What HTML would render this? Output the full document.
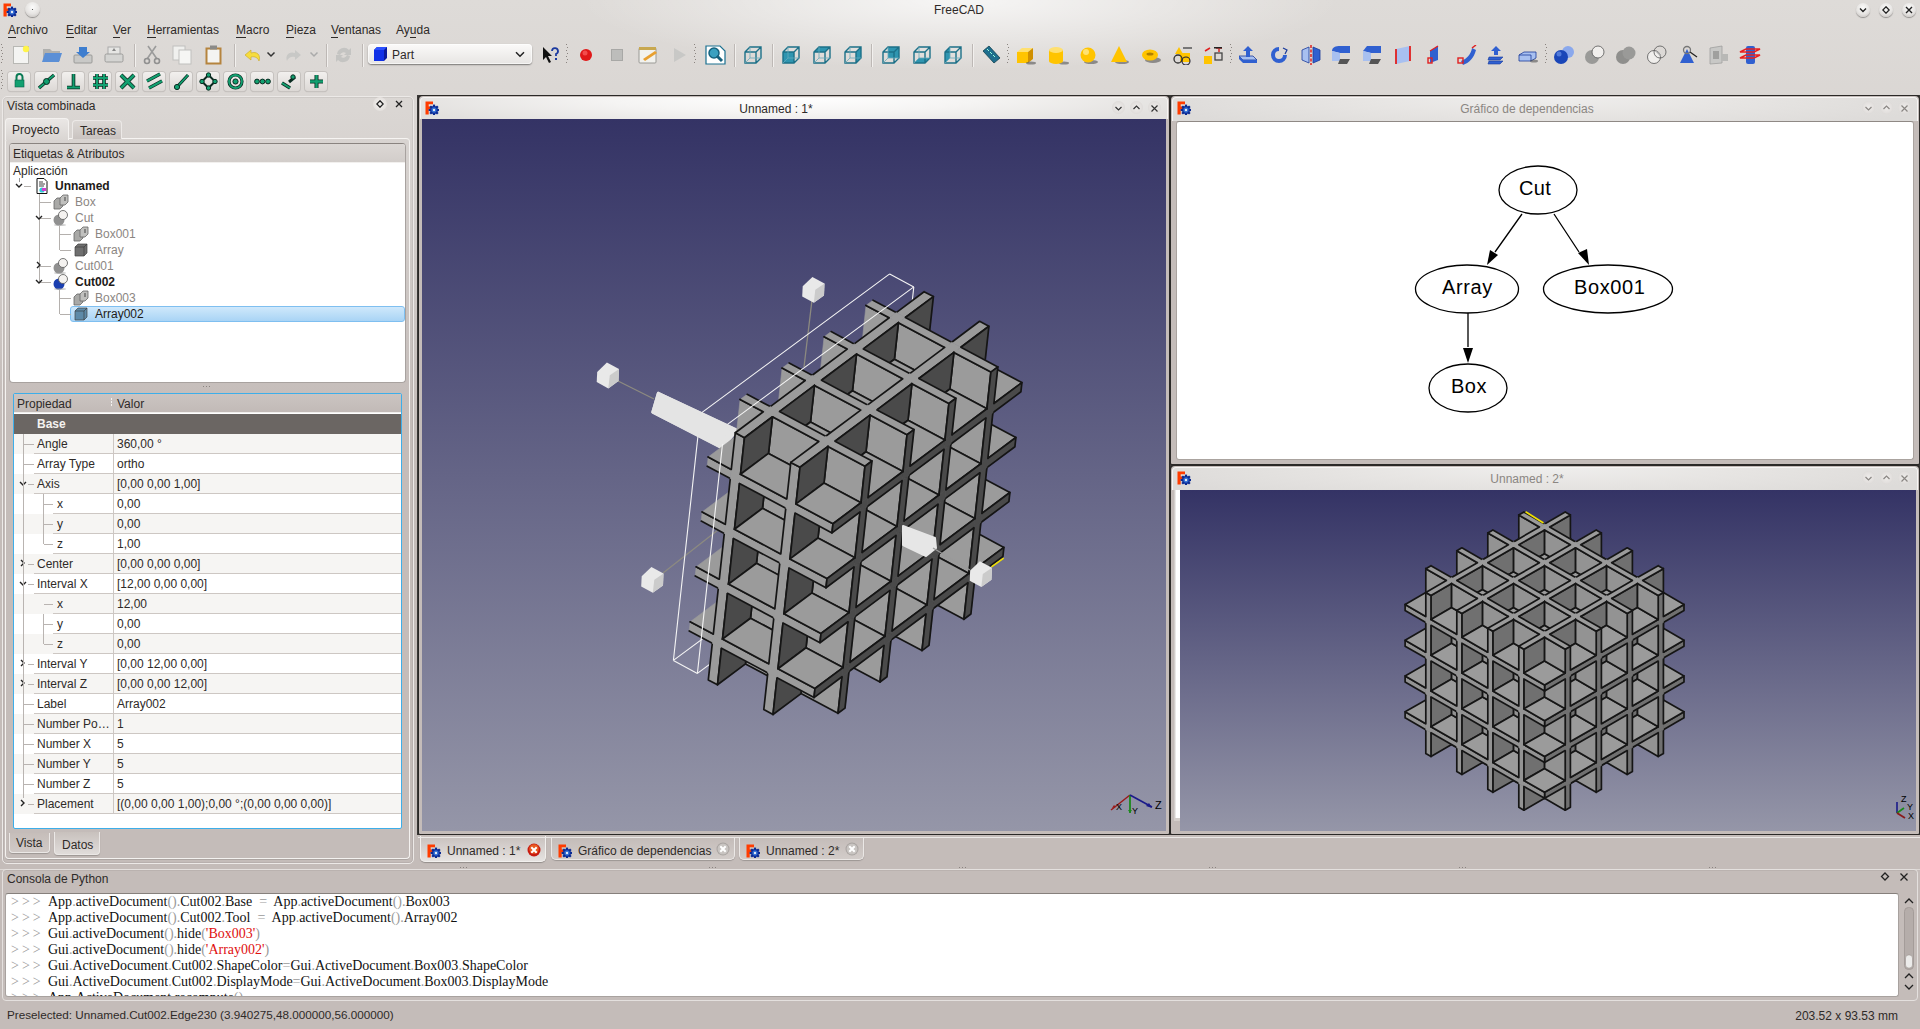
<!DOCTYPE html><html><head><meta charset='utf-8'><style>
*{box-sizing:border-box}
html,body{margin:0;padding:0}
body{width:1920px;height:1029px;overflow:hidden;position:relative;font-family:"Liberation Sans", sans-serif;font-size:12px;color:#2e2a28;
background:radial-gradient(ellipse 380px 70px at 960px 0px,rgba(255,255,255,.75),rgba(255,255,255,0)),linear-gradient(to bottom,#dedbd8 0px,#dad6d3 110px,#c4bcb9 420px,#c4bcb9 1029px);}
.a{position:absolute}
.t{position:absolute;white-space:pre;line-height:14px}
.rb{position:absolute;border-radius:50%;background:radial-gradient(circle at 50% 35%,#fbfbfa 0,#e6e4e2 55%,#bdb9b6 100%);box-shadow:0 1px 1px rgba(0,0,0,.35)}
.frame{position:absolute;border:1px solid #f3f1f0;border-radius:4px;box-shadow:inset 0 1px 0 rgba(0,0,0,.08)}
u{text-decoration:none;border-bottom:1px solid #2e2a28}
</style></head><body>
<svg class='a' style='left:3px;top:3px' width='14' height='14' viewBox='0 0 14 14'><path d='M0.5 0.5h7.5v2.8h-4.3v2.2h3.2v2.6h-3.2v5.4h-3.2z' fill='#ff3c00'/><rect x='7.9' y='3.6' width='2.2' height='2.4' fill='#0a2a92' transform='rotate(0 9 9)'/><rect x='7.9' y='3.6' width='2.2' height='2.4' fill='#0a2a92' transform='rotate(45 9 9)'/><rect x='7.9' y='3.6' width='2.2' height='2.4' fill='#0a2a92' transform='rotate(90 9 9)'/><rect x='7.9' y='3.6' width='2.2' height='2.4' fill='#0a2a92' transform='rotate(135 9 9)'/><rect x='7.9' y='3.6' width='2.2' height='2.4' fill='#0a2a92' transform='rotate(180 9 9)'/><rect x='7.9' y='3.6' width='2.2' height='2.4' fill='#0a2a92' transform='rotate(225 9 9)'/><rect x='7.9' y='3.6' width='2.2' height='2.4' fill='#0a2a92' transform='rotate(270 9 9)'/><rect x='7.9' y='3.6' width='2.2' height='2.4' fill='#0a2a92' transform='rotate(315 9 9)'/><circle cx='9' cy='9' r='3.9' fill='#0b2c98'/><circle cx='9' cy='9' r='2.7' fill='#2f6ad0'/><circle cx='9' cy='9' r='1.2' fill='#e6ecf4'/></svg>
<div class='rb' style='left:25px;top:2px;width:15px;height:15px'></div>
<div class='a' style='left:32px;top:9px;width:1px;height:1px;background:#555'></div>
<div class='t' style='left:934px;top:3px;font-size:12px;color:#2e2a28;font-weight:normal;font-family:"Liberation Sans", sans-serif;'>FreeCAD</div>
<div class='rb' style='left:1856px;top:3px;width:14px;height:14px'></div>
<svg class='a' style='left:1859px;top:7px' width='8' height='6'><path d='M1 1.5l3 3 3-3' fill='none' stroke='#222' stroke-width='1.4'/></svg>
<div class='rb' style='left:1879px;top:3px;width:14px;height:14px'></div>
<svg class='a' style='left:1882px;top:6px' width='8' height='8'><path d='M4 0.8l3.2 3.2-3.2 3.2-3.2-3.2z' fill='none' stroke='#222' stroke-width='1.3'/></svg>
<div class='rb' style='left:1902px;top:3px;width:14px;height:14px'></div>
<svg class='a' style='left:1905px;top:6px' width='8' height='8'><path d='M1 1l6 6M7 1l-6 6' fill='none' stroke='#222' stroke-width='1.4'/></svg>
<div class='t' style='left:8px;top:23px;font-size:12px;color:#2e2a28;font-weight:normal;font-family:"Liberation Sans", sans-serif;'><u>A</u>rchivo</div>
<div class='t' style='left:66px;top:23px;font-size:12px;color:#2e2a28;font-weight:normal;font-family:"Liberation Sans", sans-serif;'><u>E</u>ditar</div>
<div class='t' style='left:113px;top:23px;font-size:12px;color:#2e2a28;font-weight:normal;font-family:"Liberation Sans", sans-serif;'><u>V</u>er</div>
<div class='t' style='left:147px;top:23px;font-size:12px;color:#2e2a28;font-weight:normal;font-family:"Liberation Sans", sans-serif;'><u>H</u>erramientas</div>
<div class='t' style='left:236px;top:23px;font-size:12px;color:#2e2a28;font-weight:normal;font-family:"Liberation Sans", sans-serif;'><u>M</u>acro</div>
<div class='t' style='left:286px;top:23px;font-size:12px;color:#2e2a28;font-weight:normal;font-family:"Liberation Sans", sans-serif;'><u>P</u>ieza</div>
<div class='t' style='left:331px;top:23px;font-size:12px;color:#2e2a28;font-weight:normal;font-family:"Liberation Sans", sans-serif;'><u>V</u>entanas</div>
<div class='t' style='left:396px;top:23px;font-size:12px;color:#2e2a28;font-weight:normal;font-family:"Liberation Sans", sans-serif;'>Ay<u>u</u>da</div>
<svg class='a' style='left:1px;top:44px' width='2' height='23' viewBox='0 0 2 23'><rect x='0' y='0' width='1' height='1' fill='#8a8480'/><rect x='1' y='3' width='1' height='1' fill='#8a8480'/><rect x='0' y='6' width='1' height='1' fill='#8a8480'/><rect x='1' y='9' width='1' height='1' fill='#8a8480'/><rect x='0' y='12' width='1' height='1' fill='#8a8480'/><rect x='1' y='15' width='1' height='1' fill='#8a8480'/><rect x='0' y='18' width='1' height='1' fill='#8a8480'/></svg>
<svg class='a' style='left:12px;top:45px' width='20' height='20' viewBox='0 0 20 20'><rect x='1.5' y='1.5' width='15' height='17' fill='#f4f4f2' stroke='#b8b8b4'/><circle cx='14' cy='4' r='3.2' fill='#fff44a'/></svg>
<svg class='a' style='left:41px;top:45px' width='22' height='20' viewBox='0 0 22 20'><path d='M2 4h7l2 2h8v10H2z' fill='#b0b0ae'/><path d='M4 8h17l-3 9H1z' fill='#5b8fd6'/></svg>
<svg class='a' style='left:73px;top:45px' width='20' height='20' viewBox='0 0 20 20'><rect x='1' y='10' width='18' height='8' rx='1' fill='#c9c9c7' stroke='#9a9a98'/><path d='M6 2h8v5h3l-7 6-7-6h3z' fill='#3e7ecf'/></svg>
<svg class='a' style='left:104px;top:45px' width='20' height='20' viewBox='0 0 20 20'><rect x='4' y='2' width='12' height='8' fill='#e6e6e4' stroke='#aaa'/><rect x='1' y='9' width='18' height='8' rx='1.5' fill='#d4d4d2' stroke='#9c9c9a'/><path d='M10 3l-2 3h4z' fill='#888'/></svg>
<div class='a' style='left:134px;top:44px;width:1px;height:23px;background:#bdb8b5'></div>
<div class='a' style='left:135px;top:44px;width:1px;height:23px;background:#f2f0ee'></div>
<svg class='a' style='left:143px;top:45px' width='18' height='20' viewBox='0 0 18 20'><path d='M5 1l9 13M13 1L4 14' stroke='#9b9b9b' stroke-width='1.6'/><circle cx='4' cy='16' r='2.5' fill='none' stroke='#909090' stroke-width='1.6'/><circle cx='14' cy='16' r='2.5' fill='none' stroke='#909090' stroke-width='1.6'/></svg>
<svg class='a' style='left:172px;top:45px' width='21' height='20' viewBox='0 0 21 20'><rect x='1' y='1' width='12' height='14' fill='#f0f0ee' stroke='#c0c0be'/><rect x='7' y='5' width='12' height='14' fill='#f6f6f4' stroke='#c0c0be'/></svg>
<svg class='a' style='left:204px;top:45px' width='20' height='20' viewBox='0 0 20 20'><rect x='1.5' y='2.5' width='16' height='17' fill='#b5843e' /><rect x='3.5' y='4.5' width='12' height='13' fill='#f4f4f2'/><rect x='6' y='0.5' width='7' height='4' fill='#8a8a88'/></svg>
<div class='a' style='left:234px;top:44px;width:1px;height:23px;background:#bdb8b5'></div>
<div class='a' style='left:235px;top:44px;width:1px;height:23px;background:#f2f0ee'></div>
<svg class='a' style='left:243px;top:45px' width='20' height='20' viewBox='0 0 20 20'><path d='M16 16c2-6-2-10-8-8V5L2 10l6 5v-3c4-1 7 1 8 4z' fill='#f6dc3e' stroke='#c9a820' stroke-width='.6'/></svg>
<svg class='a' style='left:266px;top:51px' width='10' height='8' viewBox='0 0 10 8'><path d='M1.5 1.5l3.5 3.5 3.5-3.5' fill='none' stroke='#333' stroke-width='1.5'/></svg>
<svg class='a' style='left:285px;top:45px' width='18' height='20' viewBox='0 0 18 20'><path d='M2 16c-2-6 2-10 8-8V5l6 5-6 5v-3c-4-1-7 1-8 4z' fill='#c8c8c6'/></svg>
<svg class='a' style='left:309px;top:51px' width='10' height='8' viewBox='0 0 10 8'><path d='M1.5 1.5l3.5 3.5 3.5-3.5' fill='none' stroke='#aaa' stroke-width='1.5'/></svg>
<div class='a' style='left:326px;top:44px;width:1px;height:23px;background:#bdb8b5'></div>
<div class='a' style='left:327px;top:44px;width:1px;height:23px;background:#f2f0ee'></div>
<svg class='a' style='left:334px;top:45px' width='19' height='20' viewBox='0 0 19 20'><path d='M3 9a7 7 0 0 1 12-4l2-2v7h-7l2-2a4 4 0 0 0-6 2z M16 11a7 7 0 0 1-12 4l-2 2v-7h7l-2 2a4 4 0 0 0 6-2z' fill='#c4c4c2'/></svg>
<div class='a' style='left:362px;top:44px;width:1px;height:23px;background:#bdb8b5'></div>
<div class='a' style='left:363px;top:44px;width:1px;height:23px;background:#f2f0ee'></div>
<div class='a' style='left:368px;top:44px;width:164px;height:20px;border-radius:4px;background:linear-gradient(#fbfaf9,#e7e5e3);box-shadow:0 1px 1.5px rgba(0,0,0,.45),inset 0 0 0 1px rgba(255,255,255,.6)'></div>
<svg class='a' style='left:373px;top:46px' width='15' height='16' viewBox='0 0 15 16'><path d='M1 4l3-3h10v11l-3 3H1z' fill='#0a1a9a'/><rect x='1' y='4' width='10' height='11' fill='#1030e6'/><path d='M1 4l3-3h10l-3 3z' fill='#2a50ff'/></svg>
<div class='t' style='left:392px;top:48px;font-size:12px;color:#2e2a28;font-weight:normal;font-family:"Liberation Sans", sans-serif;'>Part</div>
<svg class='a' style='left:515px;top:51px' width='10' height='7' viewBox='0 0 10 7'><path d='M1 1.2l4 4 4-4' fill='none' stroke='#222' stroke-width='1.5'/></svg>
<svg class='a' style='left:542px;top:46px' width='18' height='18' viewBox='0 0 18 18'><path d='M1 1v13l3-3 3 6 2-1-3-6h4z' fill='#111'/><path d='M10 5a3 3 0 1 1 4 3v2' fill='none' stroke='#1c3aa0' stroke-width='1.8'/><rect x='13' y='12' width='2' height='2' fill='#1c3aa0'/></svg>
<svg class='a' style='left:566px;top:44px' width='2' height='23' viewBox='0 0 2 23'><rect x='0' y='0' width='1' height='1' fill='#8a8480'/><rect x='1' y='3' width='1' height='1' fill='#8a8480'/><rect x='0' y='6' width='1' height='1' fill='#8a8480'/><rect x='1' y='9' width='1' height='1' fill='#8a8480'/><rect x='0' y='12' width='1' height='1' fill='#8a8480'/><rect x='1' y='15' width='1' height='1' fill='#8a8480'/><rect x='0' y='18' width='1' height='1' fill='#8a8480'/></svg>
<svg class='a' style='left:579px;top:48px' width='14' height='14' viewBox='0 0 14 14'><circle cx='7' cy='7' r='6' fill='#e01818'/><circle cx='6' cy='5' r='2.5' fill='#ff7070' opacity='.6'/></svg>
<svg class='a' style='left:611px;top:49px' width='12' height='12' viewBox='0 0 12 12'><rect x='0.5' y='0.5' width='11' height='11' fill='#bdbdbb' stroke='#a8a8a6'/></svg>
<svg class='a' style='left:638px;top:45px' width='21' height='20' viewBox='0 0 21 20'><rect x='1' y='3' width='17' height='15' rx='1' fill='#f2f2ee' stroke='#9a9a96'/><rect x='1' y='2' width='17' height='3' fill='#c8a850'/><path d='M5 14l12-8 2 2-12 8z' fill='#e8a030'/></svg>
<svg class='a' style='left:672px;top:47px' width='15' height='16' viewBox='0 0 15 16'><path d='M2 1l12 7-12 7z' fill='#c8c8c6'/></svg>
<svg class='a' style='left:694px;top:44px' width='2' height='23' viewBox='0 0 2 23'><rect x='0' y='0' width='1' height='1' fill='#8a8480'/><rect x='1' y='3' width='1' height='1' fill='#8a8480'/><rect x='0' y='6' width='1' height='1' fill='#8a8480'/><rect x='1' y='9' width='1' height='1' fill='#8a8480'/><rect x='0' y='12' width='1' height='1' fill='#8a8480'/><rect x='1' y='15' width='1' height='1' fill='#8a8480'/><rect x='0' y='18' width='1' height='1' fill='#8a8480'/></svg>
<svg class='a' style='left:705px;top:45px' width='21' height='20' viewBox='0 0 21 20'><path d='M1 1h14l5 5v13H1z' fill='#fff' stroke='#1a7090' stroke-width='1.2'/><circle cx='9' cy='8' r='5' fill='#3aa0c0' stroke='#16627e' stroke-width='1.5'/><path d='M12 11l5 5' stroke='#16627e' stroke-width='3'/></svg>
<div class='a' style='left:734px;top:44px;width:1px;height:23px;background:#bdb8b5'></div>
<div class='a' style='left:735px;top:44px;width:1px;height:23px;background:#f2f0ee'></div>
<svg class='a' style='left:742px;top:45px' width='22' height='20' viewBox='0 0 22 20'><path d='M3 7l5-5h11v11l-5 5H3z M3 7h11v11 M14 7l5-5' fill='none' stroke='#1c7088' stroke-width='1.4'/><path d='M8 2v11h11 M8 13l-5 5' fill='none' stroke='#6ab' stroke-width='.8'/></svg>
<div class='a' style='left:772px;top:44px;width:1px;height:23px;background:#bdb8b5'></div>
<div class='a' style='left:773px;top:44px;width:1px;height:23px;background:#f2f0ee'></div>
<svg class='a' style='left:780px;top:45px' width='22' height='20' viewBox='0 0 22 20'><path d='M3 7h11v11H3z' fill='#2f95b0'/><path d='M3 7l5-5h11v11l-5 5H3z M3 7h11v11 M14 7l5-5' fill='none' stroke='#1c7088' stroke-width='1.4'/><path d='M8 2v11h11 M8 13l-5 5' fill='none' stroke='#6ab' stroke-width='.8'/></svg>
<svg class='a' style='left:811px;top:45px' width='22' height='20' viewBox='0 0 22 20'><path d='M3 7l5-5h11l-5 5z' fill='#2f95b0'/><path d='M3 7l5-5h11v11l-5 5H3z M3 7h11v11 M14 7l5-5' fill='none' stroke='#1c7088' stroke-width='1.4'/><path d='M8 2v11h11 M8 13l-5 5' fill='none' stroke='#6ab' stroke-width='.8'/></svg>
<svg class='a' style='left:842px;top:45px' width='22' height='20' viewBox='0 0 22 20'><path d='M14 7l5-5v11l-5 5z' fill='#2f95b0'/><path d='M3 7l5-5h11v11l-5 5H3z M3 7h11v11 M14 7l5-5' fill='none' stroke='#1c7088' stroke-width='1.4'/><path d='M8 2v11h11 M8 13l-5 5' fill='none' stroke='#6ab' stroke-width='.8'/></svg>
<div class='a' style='left:871px;top:44px;width:1px;height:23px;background:#bdb8b5'></div>
<div class='a' style='left:872px;top:44px;width:1px;height:23px;background:#f2f0ee'></div>
<svg class='a' style='left:880px;top:45px' width='22' height='20' viewBox='0 0 22 20'><path d='M8 2h11v11H8z' fill='#2f95b0'/><path d='M3 7l5-5h11v11l-5 5H3z M3 7h11v11 M14 7l5-5' fill='none' stroke='#1c7088' stroke-width='1.4'/><path d='M8 2v11h11 M8 13l-5 5' fill='none' stroke='#6ab' stroke-width='.8'/></svg>
<svg class='a' style='left:911px;top:45px' width='22' height='20' viewBox='0 0 22 20'><path d='M3 18l5-5h11l-5 5z' fill='#2f95b0'/><path d='M3 7l5-5h11v11l-5 5H3z M3 7h11v11 M14 7l5-5' fill='none' stroke='#1c7088' stroke-width='1.4'/><path d='M8 2v11h11 M8 13l-5 5' fill='none' stroke='#6ab' stroke-width='.8'/></svg>
<svg class='a' style='left:942px;top:45px' width='22' height='20' viewBox='0 0 22 20'><path d='M3 7l5-5v11l-5 5z' fill='#2f95b0'/><path d='M3 7l5-5h11v11l-5 5H3z M3 7h11v11 M14 7l5-5' fill='none' stroke='#1c7088' stroke-width='1.4'/><path d='M8 2v11h11 M8 13l-5 5' fill='none' stroke='#6ab' stroke-width='.8'/></svg>
<div class='a' style='left:972px;top:44px;width:1px;height:23px;background:#bdb8b5'></div>
<div class='a' style='left:973px;top:44px;width:1px;height:23px;background:#f2f0ee'></div>
<svg class='a' style='left:981px;top:45px' width='20' height='20' viewBox='0 0 20 20'><path d='M2 6l6-5 11 12-6 5z' fill='#1e6e8e' stroke='#10404e' stroke-width='.8'/><path d='M6 4l2 2M9 7l2 2M12 10l2 2' stroke='#9fd' stroke-width='1'/></svg>
<svg class='a' style='left:1007px;top:44px' width='2' height='23' viewBox='0 0 2 23'><rect x='0' y='0' width='1' height='1' fill='#8a8480'/><rect x='1' y='3' width='1' height='1' fill='#8a8480'/><rect x='0' y='6' width='1' height='1' fill='#8a8480'/><rect x='1' y='9' width='1' height='1' fill='#8a8480'/><rect x='0' y='12' width='1' height='1' fill='#8a8480'/><rect x='1' y='15' width='1' height='1' fill='#8a8480'/><rect x='0' y='18' width='1' height='1' fill='#8a8480'/></svg>
<svg class='a' style='left:1015px;top:45px' width='22' height='20' viewBox='0 0 22 20'><path d='M2 7h11v11H2z' fill='#ffc400'/><path d='M2 7l5-4h11l-5 4z' fill='#ffe070'/><path d='M13 7l5-4v11l-5 4z' fill='#d09000'/><ellipse cx='16' cy='18' rx='5' ry='1.5' fill='#555' opacity='.6'/></svg>
<svg class='a' style='left:1047px;top:45px' width='22' height='20' viewBox='0 0 22 20'><ellipse cx='17' cy='18' rx='5' ry='1.5' fill='#555' opacity='.6'/><path d='M2 5v11a7 3 0 0 0 14 0V5z' fill='#ffc400'/><ellipse cx='9' cy='5' rx='7' ry='3' fill='#ffe070'/></svg>
<svg class='a' style='left:1078px;top:45px' width='22' height='20' viewBox='0 0 22 20'><ellipse cx='13' cy='17' rx='7' ry='2' fill='#555' opacity='.6'/><circle cx='10' cy='10' r='7.5' fill='#ffc400'/><circle cx='8' cy='7' r='3' fill='#fff0a0' opacity='.7'/></svg>
<svg class='a' style='left:1109px;top:45px' width='22' height='20' viewBox='0 0 22 20'><ellipse cx='13' cy='17' rx='7' ry='2' fill='#555' opacity='.6'/><path d='M10 1L2 17h16z' fill='#ffc400'/></svg>
<svg class='a' style='left:1140px;top:45px' width='22' height='20' viewBox='0 0 22 20'><ellipse cx='13' cy='15' rx='8' ry='3' fill='#555' opacity='.6'/><ellipse cx='10' cy='10' rx='8' ry='5.5' fill='#ffc400'/><ellipse cx='10' cy='9' rx='3.5' ry='1.5' fill='#b08000'/></svg>
<svg class='a' style='left:1171px;top:45px' width='22' height='20' viewBox='0 0 22 20'><path d='M4 9l4-7 4 7z' fill='#ffc400'/><rect x='9' y='8' width='10' height='9' fill='#ffc400'/><circle cx='7' cy='14' r='4' fill='none' stroke='#333' stroke-width='1.3'/><circle cx='15' cy='16' r='4' fill='none' stroke='#223' stroke-width='1.1'/><rect x='12' y='2' width='9' height='2' fill='#777'/></svg>
<svg class='a' style='left:1202px;top:45px' width='22' height='20' viewBox='0 0 22 20'><rect x='2' y='11' width='8' height='8' fill='#ffc400'/><rect x='13' y='8' width='7' height='7' fill='none' stroke='#444' stroke-width='1.3'/><path d='M3 6l5-3M14 3h6M17 4v3' stroke='#e02020' stroke-width='1.5'/><rect x='12' y='2' width='8' height='1.5' fill='#222'/></svg>
<svg class='a' style='left:1230px;top:44px' width='2' height='23' viewBox='0 0 2 23'><rect x='0' y='0' width='1' height='1' fill='#8a8480'/><rect x='1' y='3' width='1' height='1' fill='#8a8480'/><rect x='0' y='6' width='1' height='1' fill='#8a8480'/><rect x='1' y='9' width='1' height='1' fill='#8a8480'/><rect x='0' y='12' width='1' height='1' fill='#8a8480'/><rect x='1' y='15' width='1' height='1' fill='#8a8480'/><rect x='0' y='18' width='1' height='1' fill='#8a8480'/></svg>
<svg class='a' style='left:1237px;top:45px' width='22' height='20' viewBox='0 0 22 20'><path d='M2 11h14l4 4H6z' fill='#a8c0f0' stroke='#1a3a9a' stroke-width='.8'/><path d='M2 11v3l4 4v-3z M6 15v3h14v-3z' fill='#3060d0'/><path d='M11 1l-5 5h3v6h4V6h3z' fill='#3060d0'/></svg>
<svg class='a' style='left:1269px;top:45px' width='22' height='20' viewBox='0 0 22 20'><path d='M10 2a8 8 0 1 0 8 8h-4a4 4 0 1 1-4-4z' fill='#3060d0'/><path d='M14 3l4 2-2 4' fill='none' stroke='#1a3a9a' stroke-width='1.2'/></svg>
<svg class='a' style='left:1300px;top:45px' width='22' height='20' viewBox='0 0 22 20'><path d='M2 5l7-3v16l-7-3z' fill='#a8c0f0' stroke='#1a3a9a' stroke-width='.8'/><path d='M13 2l7 3v10l-7 3z' fill='#3060d0' stroke='#1a3a9a' stroke-width='.8'/><path d='M11 0v20' stroke='#e02020' stroke-width='1.5' stroke-dasharray='3 1.5'/></svg>
<svg class='a' style='left:1330px;top:45px' width='22' height='20' viewBox='0 0 22 20'><path d='M2 6c0-4 4-5 8-5h10v7H10z' fill='#3060d0'/><path d='M2 6v10h8V8' fill='#a8c0f0'/><path d='M10 14l10 0l-3 5H8z' fill='#555'/></svg>
<svg class='a' style='left:1361px;top:45px' width='22' height='20' viewBox='0 0 22 20'><path d='M2 6l4-5h14v7H10z' fill='#3060d0'/><path d='M2 6v10h8V8' fill='#a8c0f0'/><path d='M10 14l10 0l-3 5H8z' fill='#555'/></svg>
<svg class='a' style='left:1393px;top:45px' width='22' height='20' viewBox='0 0 22 20'><path d='M3 4l14-3v15L3 19z' fill='#a8c0f0'/><path d='M3 4v15M17 1v15' stroke='#e02020' stroke-width='1.8'/></svg>
<svg class='a' style='left:1424px;top:45px' width='22' height='20' viewBox='0 0 22 20'><path d='M6 6l8-5v14l-8 3z' fill='#3060d0'/><path d='M6 6l8-5' stroke='#e02020' stroke-width='1.4'/><rect x='4' y='13' width='4' height='5' fill='none' stroke='#e02020' stroke-width='1.4'/></svg>
<svg class='a' style='left:1455px;top:45px' width='22' height='20' viewBox='0 0 22 20'><path d='M6 16c6-2 10-7 11-13l4 2c-2 8-7 13-13 15z' fill='#3060d0'/><path d='M17 3l4-3' stroke='#e02020' stroke-width='1.5'/><rect x='3' y='13' width='5' height='5' fill='none' stroke='#e02020' stroke-width='1.4'/></svg>
<svg class='a' style='left:1486px;top:45px' width='22' height='20' viewBox='0 0 22 20'><path d='M10 1l-5 5h3v4h4V6h3z' fill='#3060d0'/><path d='M3 12h14l-3 3H2z M3 16h14l-3 3H2z' fill='#3060d0' stroke='#1a3a9a' stroke-width='.6'/></svg>
<svg class='a' style='left:1517px;top:45px' width='22' height='20' viewBox='0 0 22 20'><path d='M2 10l5-3h12v6l-5 3H2z' fill='#a8c0f0' stroke='#1a3a9a' stroke-width='.8'/><path d='M2 10h12v6' fill='none' stroke='#1a3a9a' stroke-width='.8'/><ellipse cx='17' cy='16' rx='4' ry='1.5' fill='#555' opacity='.6'/></svg>
<svg class='a' style='left:1545px;top:44px' width='2' height='23' viewBox='0 0 2 23'><rect x='0' y='0' width='1' height='1' fill='#8a8480'/><rect x='1' y='3' width='1' height='1' fill='#8a8480'/><rect x='0' y='6' width='1' height='1' fill='#8a8480'/><rect x='1' y='9' width='1' height='1' fill='#8a8480'/><rect x='0' y='12' width='1' height='1' fill='#8a8480'/><rect x='1' y='15' width='1' height='1' fill='#8a8480'/><rect x='0' y='18' width='1' height='1' fill='#8a8480'/></svg>
<svg class='a' style='left:1553px;top:45px' width='22' height='20' viewBox='0 0 22 20'><circle cx='15' cy='7' r='6' fill='#8aa8ec'/><circle cx='8' cy='12' r='7' fill='#1a46b8'/><circle cx='6' cy='9' r='2.5' fill='#6a90e8' opacity='.7'/></svg>
<svg class='a' style='left:1584px;top:45px' width='22' height='20' viewBox='0 0 22 20'><circle cx='8' cy='12' r='7' fill='#9a9a98'/><circle cx='14' cy='7' r='6' fill='#f0eeec' stroke='#555' stroke-width='.8'/></svg>
<svg class='a' style='left:1615px;top:45px' width='22' height='20' viewBox='0 0 22 20'><circle cx='8' cy='12' r='7' fill='#8f8f8d'/><circle cx='14' cy='8' r='6.5' fill='#9a9a98'/></svg>
<svg class='a' style='left:1646px;top:45px' width='22' height='20' viewBox='0 0 22 20'><circle cx='8' cy='12' r='6.5' fill='#f0eeec' stroke='#555' stroke-width='.8'/><circle cx='14' cy='7' r='6' fill='none' stroke='#555' stroke-width='.8'/><path d='M9 6a6 6 0 0 1 6 6' fill='#aaa'/></svg>
<svg class='a' style='left:1677px;top:45px' width='22' height='20' viewBox='0 0 22 20'><path d='M10 4L3 18h14z' fill='#3060d0'/><circle cx='10' cy='5' r='3.5' fill='none' stroke='#777' stroke-width='1.3'/><path d='M13 7l7 5' stroke='#222' stroke-width='1.2'/></svg>
<svg class='a' style='left:1708px;top:45px' width='22' height='20' viewBox='0 0 22 20'><path d='M2 3l12-2v17l-12 1z' fill='#c8c8c6' stroke='#a0a09e' stroke-width='.8'/><rect x='5' y='6' width='6' height='8' fill='#a0a09e'/><rect x='14' y='9' width='6' height='7' fill='#b8b8b6'/></svg>
<svg class='a' style='left:1739px;top:45px' width='22' height='20' viewBox='0 0 22 20'><rect x='7' y='1' width='9' height='18' rx='2' fill='#3060d0'/><path d='M1 7l6-3h14l-6 3z M1 13l6-3h14l-6 3z' fill='none' stroke='#e82020' stroke-width='1.6'/></svg>
<svg class='a' style='left:1px;top:70px' width='2' height='22' viewBox='0 0 2 22'><rect x='0' y='0' width='1' height='1' fill='#8a8480'/><rect x='1' y='3' width='1' height='1' fill='#8a8480'/><rect x='0' y='6' width='1' height='1' fill='#8a8480'/><rect x='1' y='9' width='1' height='1' fill='#8a8480'/><rect x='0' y='12' width='1' height='1' fill='#8a8480'/><rect x='1' y='15' width='1' height='1' fill='#8a8480'/><rect x='0' y='18' width='1' height='1' fill='#8a8480'/></svg>
<div class='a' style='left:8px;top:72px;width:22px;height:19px;border-radius:3px;background:linear-gradient(#f2f0ee,#dcd8d5);box-shadow:0 0 0 1px #c6c2bf,0 1px 1px rgba(0,0,0,.2)'></div>
<svg class='a' style='left:10px;top:72px' width='19' height='19' viewBox='0 0 19 19'><rect x='5' y='8' width='9' height='7' fill='#12a070' stroke='#076048' stroke-width='.6'/><path d='M6.5 8V5a3 3 0 0 1 6 0v3' fill='none' stroke='#0a7a54' stroke-width='2'/></svg>
<div class='a' style='left:35px;top:72px;width:22px;height:19px;border-radius:3px;background:linear-gradient(#f2f0ee,#dcd8d5);box-shadow:0 0 0 1px #c6c2bf,0 1px 1px rgba(0,0,0,.2)'></div>
<svg class='a' style='left:37px;top:72px' width='19' height='19' viewBox='0 0 19 19'><path d='M2 16L17 3' stroke='#0a2a20' stroke-width='3.4'/><path d='M2 16L17 3' stroke='#12a070' stroke-width='2'/><circle cx='9.5' cy='9.5' r='3' fill='#12a070' stroke='#0a2a20'/></svg>
<div class='a' style='left:62px;top:72px;width:22px;height:19px;border-radius:3px;background:linear-gradient(#f2f0ee,#dcd8d5);box-shadow:0 0 0 1px #c6c2bf,0 1px 1px rgba(0,0,0,.2)'></div>
<svg class='a' style='left:64px;top:72px' width='19' height='19' viewBox='0 0 19 19'><path d='M9.5 2v13M3 15.5h13' stroke='#0a2a20' stroke-width='3.6'/><path d='M9.5 2v13M3 15.5h13' stroke='#12a070' stroke-width='2'/></svg>
<div class='a' style='left:89px;top:72px;width:22px;height:19px;border-radius:3px;background:linear-gradient(#f2f0ee,#dcd8d5);box-shadow:0 0 0 1px #c6c2bf,0 1px 1px rgba(0,0,0,.2)'></div>
<svg class='a' style='left:91px;top:72px' width='19' height='19' viewBox='0 0 19 19'><path d='M6 2v15M13 2v15M2 6h15M2 13h15' stroke='#0a2a20' stroke-width='3.6'/><path d='M6 2v15M13 2v15M2 6h15M2 13h15' stroke='#12a070' stroke-width='2'/></svg>
<div class='a' style='left:116px;top:72px;width:22px;height:19px;border-radius:3px;background:linear-gradient(#f2f0ee,#dcd8d5);box-shadow:0 0 0 1px #c6c2bf,0 1px 1px rgba(0,0,0,.2)'></div>
<svg class='a' style='left:118px;top:72px' width='19' height='19' viewBox='0 0 19 19'><path d='M3 3l13 13M16 3L3 16' stroke='#0a2a20' stroke-width='4.2'/><path d='M3 3l13 13M16 3L3 16' stroke='#12a070' stroke-width='2.6'/></svg>
<div class='a' style='left:143px;top:72px;width:22px;height:19px;border-radius:3px;background:linear-gradient(#f2f0ee,#dcd8d5);box-shadow:0 0 0 1px #c6c2bf,0 1px 1px rgba(0,0,0,.2)'></div>
<svg class='a' style='left:145px;top:72px' width='19' height='19' viewBox='0 0 19 19'><path d='M2 9l13-7M4 16l13-7' stroke='#0a2a20' stroke-width='3.4'/><path d='M2 9l13-7M4 16l13-7' stroke='#12a070' stroke-width='2'/></svg>
<div class='a' style='left:170px;top:72px;width:22px;height:19px;border-radius:3px;background:linear-gradient(#f2f0ee,#dcd8d5);box-shadow:0 0 0 1px #c6c2bf,0 1px 1px rgba(0,0,0,.2)'></div>
<svg class='a' style='left:172px;top:72px' width='19' height='19' viewBox='0 0 19 19'><path d='M5 15L16 3' stroke='#0a2a20' stroke-width='3.2'/><path d='M5 15L16 3' stroke='#12a070' stroke-width='1.8'/><circle cx='5' cy='15' r='2.6' fill='#12a070' stroke='#0a2a20'/></svg>
<div class='a' style='left:197px;top:72px;width:22px;height:19px;border-radius:3px;background:linear-gradient(#f2f0ee,#dcd8d5);box-shadow:0 0 0 1px #c6c2bf,0 1px 1px rgba(0,0,0,.2)'></div>
<svg class='a' style='left:199px;top:72px' width='19' height='19' viewBox='0 0 19 19'><path d='M9.5 3L16 9.5 9.5 16 3 9.5z' fill='none' stroke='#0a2a20' stroke-width='2'/><circle cx='9.5' cy='3' r='2.2' fill='#12a070' stroke='#0a2a20'/><circle cx='16' cy='9.5' r='2.2' fill='#12a070' stroke='#0a2a20'/><circle cx='9.5' cy='16' r='2.2' fill='#12a070' stroke='#0a2a20'/><circle cx='3' cy='9.5' r='2.2' fill='#12a070' stroke='#0a2a20'/></svg>
<div class='a' style='left:224px;top:72px;width:22px;height:19px;border-radius:3px;background:linear-gradient(#f2f0ee,#dcd8d5);box-shadow:0 0 0 1px #c6c2bf,0 1px 1px rgba(0,0,0,.2)'></div>
<svg class='a' style='left:226px;top:72px' width='19' height='19' viewBox='0 0 19 19'><circle cx='9.5' cy='9.5' r='6.5' fill='none' stroke='#0a2a20' stroke-width='3.2'/><circle cx='9.5' cy='9.5' r='6.5' fill='none' stroke='#12a070' stroke-width='1.8'/><circle cx='9.5' cy='9.5' r='2.6' fill='#12a070' stroke='#0a2a20'/></svg>
<div class='a' style='left:251px;top:72px;width:22px;height:19px;border-radius:3px;background:linear-gradient(#f2f0ee,#dcd8d5);box-shadow:0 0 0 1px #c6c2bf,0 1px 1px rgba(0,0,0,.2)'></div>
<svg class='a' style='left:253px;top:72px' width='19' height='19' viewBox='0 0 19 19'><circle cx='4' cy='9.5' r='2.4' fill='#12a070' stroke='#0a2a20'/><circle cx='9.5' cy='9.5' r='2.4' fill='#12a070' stroke='#0a2a20'/><circle cx='15' cy='9.5' r='2.4' fill='#12a070' stroke='#0a2a20'/></svg>
<div class='a' style='left:278px;top:72px;width:22px;height:19px;border-radius:3px;background:linear-gradient(#f2f0ee,#dcd8d5);box-shadow:0 0 0 1px #c6c2bf,0 1px 1px rgba(0,0,0,.2)'></div>
<svg class='a' style='left:280px;top:72px' width='19' height='19' viewBox='0 0 19 19'><path d='M2 11l8 5' stroke='#0a2a20' stroke-width='3.4'/><path d='M2 11l8 5' stroke='#12a070' stroke-width='2'/><path d='M9 10l6-5' stroke='#0a2a20' stroke-width='3'/><circle cx='13' cy='5' r='2.2' fill='#12a070' stroke='#0a2a20'/></svg>
<div class='a' style='left:305px;top:72px;width:22px;height:19px;border-radius:3px;background:linear-gradient(#f2f0ee,#dcd8d5);box-shadow:0 0 0 1px #c6c2bf,0 1px 1px rgba(0,0,0,.2)'></div>
<svg class='a' style='left:307px;top:72px' width='19' height='19' viewBox='0 0 19 19'><path d='M9.5 3v13M3 9.5h13' stroke='#0a2a20' stroke-width='4'/><path d='M9.5 3v13M3 9.5h13' stroke='#12a070' stroke-width='2.4'/></svg>
<div class='a' style='left:2px;top:96px;width:412px;height:768px;border-radius:5px;border:1px solid #ece9e7;box-shadow:inset 0 0 0 1px rgba(0,0,0,0.06)'></div>
<div class='t' style='left:7px;top:99px;font-size:12px;color:#2e2a28;font-weight:normal;font-family:"Liberation Sans", sans-serif;'>Vista combinada</div>
<div class='rb' style='left:373px;top:97px;width:14px;height:14px;box-shadow:none;background:radial-gradient(circle,#f6f4f2 0,#e4e0dd 70%,transparent 75%)'></div>
<svg class='a' style='left:376px;top:100px' width='8' height='8' viewBox='0 0 8 8'><path d='M4 0.8l3.2 3.2-3.2 3.2-3.2-3.2z' fill='none' stroke='#222' stroke-width='1.3'/></svg>
<svg class='a' style='left:395px;top:100px' width='8' height='8' viewBox='0 0 8 8'><path d='M1 1l6 6M7 1l-6 6' fill='none' stroke='#222' stroke-width='1.3'/></svg>
<div class='a' style='left:5px;top:138px;width:405px;height:721px;border-radius:4px;border:1px solid #f4f2f0;border-top-color:#f6f4f2;box-shadow:0 1px 0 rgba(0,0,0,.12)'></div>
<div class='a' style='left:5px;top:118px;width:64px;height:22px;border-radius:4px 4px 0 0;background:linear-gradient(#eae7e5,#d9d5d2);border:1px solid #f4f2f0;border-bottom:none'></div>
<div class='t' style='left:12px;top:123px;font-size:12px;color:#2e2a28;font-weight:normal;font-family:"Liberation Sans", sans-serif;'>Proyecto</div>
<div class='a' style='left:72px;top:120px;width:50px;height:19px;border-radius:4px 4px 0 0;background:linear-gradient(#dcd8d5,#c9c3c0);border:1px solid #ece9e7;border-bottom:none'></div>
<div class='t' style='left:80px;top:124px;font-size:12px;color:#2e2a28;font-weight:normal;font-family:"Liberation Sans", sans-serif;'>Tareas</div>
<div class='a' style='left:9px;top:143px;width:397px;height:240px;border-radius:4px;background:#fff;border:1px solid #a8a29f;border-top-color:#8a8480'></div>
<div class='a' style='left:10px;top:144px;width:395px;height:19px;border-radius:3px 3px 0 0;background:linear-gradient(#dcd8d5,#d2cdca);border-bottom:1px solid #f2f0ee'></div>
<div class='t' style='left:13px;top:147px;font-size:12px;color:#2e2a28;font-weight:normal;font-family:"Liberation Sans", sans-serif;'>Etiquetas &amp; Atributos</div>
<div class='t' style='left:13px;top:164px;font-size:12px;color:#2e2a28;font-weight:normal;font-family:"Liberation Sans", sans-serif;'>Aplicación</div>
<div class='a' style='left:70px;top:306px;width:335px;height:16px;border-radius:3px;background:linear-gradient(#cfe8fb,#a9d4f5);border:1px solid #7fbff0'></div>
<div class='a' style='left:19px;top:178px;width:1px;height:4px;background:#999'></div>
<div class='a' style='left:24px;top:186px;width:7px;height:1px;background:#b4b0ad'></div>
<div class='a' style='left:39px;top:194px;width:1px;height:88px;background:#b4b0ad'></div>
<div class='a' style='left:40px;top:202px;width:11px;height:1px;background:#b4b0ad'></div>
<div class='a' style='left:40px;top:218px;width:11px;height:1px;background:#b4b0ad'></div>
<div class='a' style='left:40px;top:266px;width:11px;height:1px;background:#b4b0ad'></div>
<div class='a' style='left:40px;top:282px;width:11px;height:1px;background:#b4b0ad'></div>
<div class='a' style='left:59px;top:226px;width:1px;height:24px;background:#b4b0ad'></div>
<div class='a' style='left:60px;top:234px;width:11px;height:1px;background:#b4b0ad'></div>
<div class='a' style='left:60px;top:250px;width:11px;height:1px;background:#b4b0ad'></div>
<div class='a' style='left:59px;top:290px;width:1px;height:24px;background:#b4b0ad'></div>
<div class='a' style='left:60px;top:298px;width:11px;height:1px;background:#b4b0ad'></div>
<div class='a' style='left:60px;top:314px;width:11px;height:1px;background:#b4b0ad'></div>
<svg class='a' style='left:15px;top:183px' width='8' height='6' viewBox='0 0 8 6'><path d='M1 1l3 3 3-3' fill='none' stroke='#222' stroke-width='1.4'/></svg>
<svg class='a' style='left:35px;top:215px' width='8' height='6' viewBox='0 0 8 6'><path d='M1 1l3 3 3-3' fill='none' stroke='#222' stroke-width='1.4'/></svg>
<svg class='a' style='left:36px;top:261px' width='6' height='8' viewBox='0 0 6 8'><path d='M1 1l3 3-3 3' fill='none' stroke='#222' stroke-width='1.4'/></svg>
<svg class='a' style='left:35px;top:279px' width='8' height='6' viewBox='0 0 8 6'><path d='M1 1l3 3 3-3' fill='none' stroke='#222' stroke-width='1.4'/></svg>
<svg class='a' style='left:36px;top:178px' width='12' height='16' viewBox='0 0 12 16'><path d='M1 0.5h7l3 3v12H1z' fill='#fff' stroke='#111'/><path d='M3 4h4M3 6h6M3 8h5' stroke='#111' stroke-width='.8'/><circle cx='6' cy='12' r='2.6' fill='#30c8d8'/><rect x='6' y='10' width='4' height='3' fill='#d040d0'/></svg>
<div class='t' style='left:55px;top:179px;font-size:12px;color:#1e1a18;font-weight:normal;font-family:"Liberation Sans", sans-serif;'><b>Unnamed</b></div>
<svg class='a' style='left:53px;top:194px' width='16' height='16' viewBox='0 0 16 16'><path d='M1 7l3-3h6v8l-3 3H1z' fill='#a9a9a7' stroke='#666' stroke-width='.8'/><path d='M7 4l3-3h5v7l-3 3H7z' fill='#c0c0be' stroke='#666' stroke-width='.8'/><path d='M12 3v4' stroke='#444'/></svg>
<div class='t' style='left:75px;top:195px;font-size:12px;color:#8b8682;font-weight:normal;font-family:"Liberation Sans", sans-serif;'>Box</div>
<svg class='a' style='left:53px;top:210px' width='16' height='16' viewBox='0 0 16 16'><circle cx='6' cy='10' r='5.5' fill='#909090'/><circle cx='10' cy='5' r='4.5' fill='#f4f2f0' stroke='#555' stroke-width='.8'/><ellipse cx='7' cy='15' rx='6' ry='1' fill='#999' opacity='.5'/></svg>
<div class='t' style='left:75px;top:211px;font-size:12px;color:#8b8682;font-weight:normal;font-family:"Liberation Sans", sans-serif;'>Cut</div>
<svg class='a' style='left:73px;top:226px' width='16' height='16' viewBox='0 0 16 16'><path d='M1 7l3-3h6v8l-3 3H1z' fill='#a9a9a7' stroke='#666' stroke-width='.8'/><path d='M7 4l3-3h5v7l-3 3H7z' fill='#c0c0be' stroke='#666' stroke-width='.8'/><path d='M12 3v4' stroke='#444'/></svg>
<div class='t' style='left:95px;top:227px;font-size:12px;color:#8b8682;font-weight:normal;font-family:"Liberation Sans", sans-serif;'>Box001</div>
<svg class='a' style='left:74px;top:243px' width='14' height='14' viewBox='0 0 14 14'><path d='M1 4l3-3h9v9l-3 3H1z' fill='#6f6f6f' stroke='#444' stroke-width='.7'/><path d='M1 4h9v9M10 4l3-3' fill='none' stroke='#333' stroke-width='.6'/></svg>
<div class='t' style='left:95px;top:243px;font-size:12px;color:#8b8682;font-weight:normal;font-family:"Liberation Sans", sans-serif;'>Array</div>
<svg class='a' style='left:53px;top:258px' width='16' height='16' viewBox='0 0 16 16'><circle cx='6' cy='10' r='5.5' fill='#909090'/><circle cx='10' cy='5' r='4.5' fill='#f4f2f0' stroke='#555' stroke-width='.8'/><ellipse cx='7' cy='15' rx='6' ry='1' fill='#999' opacity='.5'/></svg>
<div class='t' style='left:75px;top:259px;font-size:12px;color:#8b8682;font-weight:normal;font-family:"Liberation Sans", sans-serif;'>Cut001</div>
<svg class='a' style='left:53px;top:274px' width='16' height='16' viewBox='0 0 16 16'><circle cx='6' cy='10' r='5.5' fill='#1a3fb0'/><circle cx='10' cy='5' r='4.5' fill='#f4f2f0' stroke='#555' stroke-width='.8'/><ellipse cx='7' cy='15' rx='6' ry='1' fill='#999' opacity='.5'/></svg>
<div class='t' style='left:75px;top:275px;font-size:12px;color:#1e1a18;font-weight:normal;font-family:"Liberation Sans", sans-serif;'><b>Cut002</b></div>
<svg class='a' style='left:73px;top:290px' width='16' height='16' viewBox='0 0 16 16'><path d='M1 7l3-3h6v8l-3 3H1z' fill='#a9a9a7' stroke='#666' stroke-width='.8'/><path d='M7 4l3-3h5v7l-3 3H7z' fill='#c0c0be' stroke='#666' stroke-width='.8'/><path d='M12 3v4' stroke='#444'/></svg>
<div class='t' style='left:95px;top:291px;font-size:12px;color:#8b8682;font-weight:normal;font-family:"Liberation Sans", sans-serif;'>Box003</div>
<svg class='a' style='left:74px;top:307px' width='14' height='14' viewBox='0 0 14 14'><path d='M1 4l3-3h9v9l-3 3H1z' fill='#5e8aa8' stroke='#444' stroke-width='.7'/><path d='M1 4h9v9M10 4l3-3' fill='none' stroke='#333' stroke-width='.6'/></svg>
<div class='t' style='left:95px;top:307px;font-size:12px;color:#1e1a18;font-weight:normal;font-family:"Liberation Sans", sans-serif;'>Array002</div>
<div class='a' style='left:203px;top:386px;width:1px;height:1px;background:#8a8480'></div>
<div class='a' style='left:206px;top:386px;width:1px;height:1px;background:#8a8480'></div>
<div class='a' style='left:209px;top:386px;width:1px;height:1px;background:#8a8480'></div>
<div class='a' style='left:13px;top:393px;width:389px;height:436px;background:#fff;border:1px solid #3daee9;border-radius:2px'></div>
<div class='a' style='left:14px;top:394px;width:387px;height:19px;background:linear-gradient(#cbc4c1,#c2bab7);border-bottom:1px solid #f0eeec'></div>
<div class='t' style='left:17px;top:397px;font-size:12px;color:#2e2a28;font-weight:normal;font-family:"Liberation Sans", sans-serif;'>Propiedad</div>
<div class='a' style='left:111px;top:398px;width:1px;height:2px;background:#f4f2f0'></div>
<div class='a' style='left:111px;top:401px;width:1px;height:2px;background:#f4f2f0'></div>
<div class='a' style='left:111px;top:404px;width:1px;height:2px;background:#f4f2f0'></div>
<div class='t' style='left:117px;top:397px;font-size:12px;color:#2e2a28;font-weight:normal;font-family:"Liberation Sans", sans-serif;'>Valor</div>
<div class='a' style='left:14px;top:414px;width:387px;height:20px;background:#6b6663'></div>
<div class='t' style='left:37px;top:417px;font-size:12px;color:#f4f2f0;font-weight:normal;font-family:"Liberation Sans", sans-serif;'><b>Base</b></div>
<div class='a' style='left:14px;top:434px;width:387px;height:20px;background:#f6f5f3'></div>
<div class='a' style='left:34px;top:453px;width:367px;height:1px;background:#cdc7c3'></div>
<div class='t' style='left:37px;top:437px;font-size:12px;color:#2e2a28;font-weight:normal;font-family:"Liberation Sans", sans-serif;'>Angle</div>
<div class='t' style='left:117px;top:437px;font-size:12px;color:#2e2a28;font-weight:normal;font-family:"Liberation Sans", sans-serif;'>360,00 °</div>
<div class='a' style='left:24px;top:444px;width:10px;height:1px;background:#b9b4b1'></div>
<div class='a' style='left:14px;top:454px;width:387px;height:20px;background:#ffffff'></div>
<div class='a' style='left:34px;top:473px;width:367px;height:1px;background:#cdc7c3'></div>
<div class='t' style='left:37px;top:457px;font-size:12px;color:#2e2a28;font-weight:normal;font-family:"Liberation Sans", sans-serif;'>Array Type</div>
<div class='t' style='left:117px;top:457px;font-size:12px;color:#2e2a28;font-weight:normal;font-family:"Liberation Sans", sans-serif;'>ortho</div>
<div class='a' style='left:24px;top:464px;width:10px;height:1px;background:#b9b4b1'></div>
<div class='a' style='left:14px;top:474px;width:387px;height:20px;background:#f6f5f3'></div>
<div class='a' style='left:34px;top:493px;width:367px;height:1px;background:#cdc7c3'></div>
<div class='t' style='left:37px;top:477px;font-size:12px;color:#2e2a28;font-weight:normal;font-family:"Liberation Sans", sans-serif;'>Axis</div>
<div class='t' style='left:117px;top:477px;font-size:12px;color:#2e2a28;font-weight:normal;font-family:"Liberation Sans", sans-serif;'>[0,00 0,00 1,00]</div>
<svg class='a' style='left:19px;top:481px' width='8' height='6' viewBox='0 0 8 6'><path d='M1 1l3 3 3-3' fill='none' stroke='#222' stroke-width='1.4'/></svg>
<div class='a' style='left:28px;top:484px;width:6px;height:1px;background:#b9b4b1'></div>
<div class='a' style='left:14px;top:494px;width:387px;height:20px;background:#ffffff'></div>
<div class='a' style='left:53px;top:513px;width:348px;height:1px;background:#cdc7c3'></div>
<div class='t' style='left:57px;top:497px;font-size:12px;color:#2e2a28;font-weight:normal;font-family:"Liberation Sans", sans-serif;'>x</div>
<div class='t' style='left:117px;top:497px;font-size:12px;color:#2e2a28;font-weight:normal;font-family:"Liberation Sans", sans-serif;'>0,00</div>
<div class='a' style='left:44px;top:504px;width:9px;height:1px;background:#b9b4b1'></div>
<div class='a' style='left:14px;top:514px;width:387px;height:20px;background:#f6f5f3'></div>
<div class='a' style='left:53px;top:533px;width:348px;height:1px;background:#cdc7c3'></div>
<div class='t' style='left:57px;top:517px;font-size:12px;color:#2e2a28;font-weight:normal;font-family:"Liberation Sans", sans-serif;'>y</div>
<div class='t' style='left:117px;top:517px;font-size:12px;color:#2e2a28;font-weight:normal;font-family:"Liberation Sans", sans-serif;'>0,00</div>
<div class='a' style='left:44px;top:524px;width:9px;height:1px;background:#b9b4b1'></div>
<div class='a' style='left:14px;top:534px;width:387px;height:20px;background:#ffffff'></div>
<div class='a' style='left:53px;top:553px;width:348px;height:1px;background:#cdc7c3'></div>
<div class='t' style='left:57px;top:537px;font-size:12px;color:#2e2a28;font-weight:normal;font-family:"Liberation Sans", sans-serif;'>z</div>
<div class='t' style='left:117px;top:537px;font-size:12px;color:#2e2a28;font-weight:normal;font-family:"Liberation Sans", sans-serif;'>1,00</div>
<div class='a' style='left:44px;top:544px;width:9px;height:1px;background:#b9b4b1'></div>
<div class='a' style='left:14px;top:554px;width:387px;height:20px;background:#f6f5f3'></div>
<div class='a' style='left:34px;top:573px;width:367px;height:1px;background:#cdc7c3'></div>
<div class='t' style='left:37px;top:557px;font-size:12px;color:#2e2a28;font-weight:normal;font-family:"Liberation Sans", sans-serif;'>Center</div>
<div class='t' style='left:117px;top:557px;font-size:12px;color:#2e2a28;font-weight:normal;font-family:"Liberation Sans", sans-serif;'>[0,00 0,00 0,00]</div>
<svg class='a' style='left:20px;top:559px' width='6' height='8' viewBox='0 0 6 8'><path d='M1 1l3 3-3 3' fill='none' stroke='#222' stroke-width='1.4'/></svg>
<div class='a' style='left:28px;top:564px;width:6px;height:1px;background:#b9b4b1'></div>
<div class='a' style='left:14px;top:574px;width:387px;height:20px;background:#ffffff'></div>
<div class='a' style='left:34px;top:593px;width:367px;height:1px;background:#cdc7c3'></div>
<div class='t' style='left:37px;top:577px;font-size:12px;color:#2e2a28;font-weight:normal;font-family:"Liberation Sans", sans-serif;'>Interval X</div>
<div class='t' style='left:117px;top:577px;font-size:12px;color:#2e2a28;font-weight:normal;font-family:"Liberation Sans", sans-serif;'>[12,00 0,00 0,00]</div>
<svg class='a' style='left:19px;top:581px' width='8' height='6' viewBox='0 0 8 6'><path d='M1 1l3 3 3-3' fill='none' stroke='#222' stroke-width='1.4'/></svg>
<div class='a' style='left:28px;top:584px;width:6px;height:1px;background:#b9b4b1'></div>
<div class='a' style='left:14px;top:594px;width:387px;height:20px;background:#f6f5f3'></div>
<div class='a' style='left:53px;top:613px;width:348px;height:1px;background:#cdc7c3'></div>
<div class='t' style='left:57px;top:597px;font-size:12px;color:#2e2a28;font-weight:normal;font-family:"Liberation Sans", sans-serif;'>x</div>
<div class='t' style='left:117px;top:597px;font-size:12px;color:#2e2a28;font-weight:normal;font-family:"Liberation Sans", sans-serif;'>12,00</div>
<div class='a' style='left:44px;top:604px;width:9px;height:1px;background:#b9b4b1'></div>
<div class='a' style='left:14px;top:614px;width:387px;height:20px;background:#ffffff'></div>
<div class='a' style='left:53px;top:633px;width:348px;height:1px;background:#cdc7c3'></div>
<div class='t' style='left:57px;top:617px;font-size:12px;color:#2e2a28;font-weight:normal;font-family:"Liberation Sans", sans-serif;'>y</div>
<div class='t' style='left:117px;top:617px;font-size:12px;color:#2e2a28;font-weight:normal;font-family:"Liberation Sans", sans-serif;'>0,00</div>
<div class='a' style='left:44px;top:624px;width:9px;height:1px;background:#b9b4b1'></div>
<div class='a' style='left:14px;top:634px;width:387px;height:20px;background:#f6f5f3'></div>
<div class='a' style='left:53px;top:653px;width:348px;height:1px;background:#cdc7c3'></div>
<div class='t' style='left:57px;top:637px;font-size:12px;color:#2e2a28;font-weight:normal;font-family:"Liberation Sans", sans-serif;'>z</div>
<div class='t' style='left:117px;top:637px;font-size:12px;color:#2e2a28;font-weight:normal;font-family:"Liberation Sans", sans-serif;'>0,00</div>
<div class='a' style='left:44px;top:644px;width:9px;height:1px;background:#b9b4b1'></div>
<div class='a' style='left:14px;top:654px;width:387px;height:20px;background:#ffffff'></div>
<div class='a' style='left:34px;top:673px;width:367px;height:1px;background:#cdc7c3'></div>
<div class='t' style='left:37px;top:657px;font-size:12px;color:#2e2a28;font-weight:normal;font-family:"Liberation Sans", sans-serif;'>Interval Y</div>
<div class='t' style='left:117px;top:657px;font-size:12px;color:#2e2a28;font-weight:normal;font-family:"Liberation Sans", sans-serif;'>[0,00 12,00 0,00]</div>
<svg class='a' style='left:20px;top:659px' width='6' height='8' viewBox='0 0 6 8'><path d='M1 1l3 3-3 3' fill='none' stroke='#222' stroke-width='1.4'/></svg>
<div class='a' style='left:28px;top:664px;width:6px;height:1px;background:#b9b4b1'></div>
<div class='a' style='left:14px;top:674px;width:387px;height:20px;background:#f6f5f3'></div>
<div class='a' style='left:34px;top:693px;width:367px;height:1px;background:#cdc7c3'></div>
<div class='t' style='left:37px;top:677px;font-size:12px;color:#2e2a28;font-weight:normal;font-family:"Liberation Sans", sans-serif;'>Interval Z</div>
<div class='t' style='left:117px;top:677px;font-size:12px;color:#2e2a28;font-weight:normal;font-family:"Liberation Sans", sans-serif;'>[0,00 0,00 12,00]</div>
<svg class='a' style='left:20px;top:679px' width='6' height='8' viewBox='0 0 6 8'><path d='M1 1l3 3-3 3' fill='none' stroke='#222' stroke-width='1.4'/></svg>
<div class='a' style='left:28px;top:684px;width:6px;height:1px;background:#b9b4b1'></div>
<div class='a' style='left:14px;top:694px;width:387px;height:20px;background:#ffffff'></div>
<div class='a' style='left:34px;top:713px;width:367px;height:1px;background:#cdc7c3'></div>
<div class='t' style='left:37px;top:697px;font-size:12px;color:#2e2a28;font-weight:normal;font-family:"Liberation Sans", sans-serif;'>Label</div>
<div class='t' style='left:117px;top:697px;font-size:12px;color:#2e2a28;font-weight:normal;font-family:"Liberation Sans", sans-serif;'>Array002</div>
<div class='a' style='left:24px;top:704px;width:10px;height:1px;background:#b9b4b1'></div>
<div class='a' style='left:14px;top:714px;width:387px;height:20px;background:#f6f5f3'></div>
<div class='a' style='left:34px;top:733px;width:367px;height:1px;background:#cdc7c3'></div>
<div class='t' style='left:37px;top:717px;font-size:12px;color:#2e2a28;font-weight:normal;font-family:"Liberation Sans", sans-serif;'>Number Po…</div>
<div class='t' style='left:117px;top:717px;font-size:12px;color:#2e2a28;font-weight:normal;font-family:"Liberation Sans", sans-serif;'>1</div>
<div class='a' style='left:24px;top:724px;width:10px;height:1px;background:#b9b4b1'></div>
<div class='a' style='left:14px;top:734px;width:387px;height:20px;background:#ffffff'></div>
<div class='a' style='left:34px;top:753px;width:367px;height:1px;background:#cdc7c3'></div>
<div class='t' style='left:37px;top:737px;font-size:12px;color:#2e2a28;font-weight:normal;font-family:"Liberation Sans", sans-serif;'>Number X</div>
<div class='t' style='left:117px;top:737px;font-size:12px;color:#2e2a28;font-weight:normal;font-family:"Liberation Sans", sans-serif;'>5</div>
<div class='a' style='left:24px;top:744px;width:10px;height:1px;background:#b9b4b1'></div>
<div class='a' style='left:14px;top:754px;width:387px;height:20px;background:#f6f5f3'></div>
<div class='a' style='left:34px;top:773px;width:367px;height:1px;background:#cdc7c3'></div>
<div class='t' style='left:37px;top:757px;font-size:12px;color:#2e2a28;font-weight:normal;font-family:"Liberation Sans", sans-serif;'>Number Y</div>
<div class='t' style='left:117px;top:757px;font-size:12px;color:#2e2a28;font-weight:normal;font-family:"Liberation Sans", sans-serif;'>5</div>
<div class='a' style='left:24px;top:764px;width:10px;height:1px;background:#b9b4b1'></div>
<div class='a' style='left:14px;top:774px;width:387px;height:20px;background:#ffffff'></div>
<div class='a' style='left:34px;top:793px;width:367px;height:1px;background:#cdc7c3'></div>
<div class='t' style='left:37px;top:777px;font-size:12px;color:#2e2a28;font-weight:normal;font-family:"Liberation Sans", sans-serif;'>Number Z</div>
<div class='t' style='left:117px;top:777px;font-size:12px;color:#2e2a28;font-weight:normal;font-family:"Liberation Sans", sans-serif;'>5</div>
<div class='a' style='left:24px;top:784px;width:10px;height:1px;background:#b9b4b1'></div>
<div class='a' style='left:14px;top:794px;width:387px;height:20px;background:#f6f5f3'></div>
<div class='a' style='left:34px;top:813px;width:367px;height:1px;background:#cdc7c3'></div>
<div class='t' style='left:37px;top:797px;font-size:12px;color:#2e2a28;font-weight:normal;font-family:"Liberation Sans", sans-serif;'>Placement</div>
<div class='t' style='left:117px;top:797px;font-size:12px;color:#2e2a28;font-weight:normal;font-family:"Liberation Sans", sans-serif;'>[(0,00 0,00 1,00);0,00 °;(0,00 0,00 0,00)]</div>
<svg class='a' style='left:20px;top:799px' width='6' height='8' viewBox='0 0 6 8'><path d='M1 1l3 3-3 3' fill='none' stroke='#222' stroke-width='1.4'/></svg>
<div class='a' style='left:28px;top:804px;width:6px;height:1px;background:#b9b4b1'></div>
<div class='a' style='left:113px;top:434px;width:1px;height:380px;background:#cdc7c3'></div>
<div class='a' style='left:23px;top:434px;width:1px;height:364px;background:#b9b4b1'></div>
<div class='a' style='left:43px;top:494px;width:1px;height:50px;background:#b9b4b1'></div>
<div class='a' style='left:43px;top:614px;width:1px;height:30px;background:#b9b4b1'></div>
<div class='a' style='left:9px;top:833px;width:41px;height:20px;border-radius:0 0 4px 4px;background:linear-gradient(#c6beba,#d0c9c6);border:1px solid #ebe8e6;border-top:none;box-shadow:0 1px 1px rgba(0,0,0,.2)'></div>
<div class='t' style='left:16px;top:836px;font-size:12px;color:#2e2a28;font-weight:normal;font-family:"Liberation Sans", sans-serif;'>Vista</div>
<div class='a' style='left:54px;top:832px;width:46px;height:23px;border-radius:0 0 4px 4px;background:linear-gradient(#c8c1bd,#e0dcda);border:1px solid #ebe8e6;border-top:none;box-shadow:0 1px 1px rgba(0,0,0,.2)'></div>
<div class='t' style='left:62px;top:838px;font-size:12px;color:#2e2a28;font-weight:normal;font-family:"Liberation Sans", sans-serif;'>Datos</div>
<div class='a' style='left:417px;top:95px;width:1503px;height:740px;background:#3a3836'></div>
<div class='a' style='left:418px;top:95px;width:752px;height:740px;background:#2b2927;border-radius:4px 4px 2px 2px'></div>
<div class='a' style='left:419px;top:96px;width:750px;height:738px;background:#c4bcb9;border-radius:4px 4px 1px 1px'></div>
<div class='a' style='left:420px;top:97px;width:748px;height:22px;background:radial-gradient(ellipse 55% 160% at 50% 0,#ffffff 0,#f5f4f3 45%,#e2e0de 100%);border-radius:4px 4px 0 0;border:1px solid #f6f5f4;border-bottom:none'></div>
<svg class='a' style='left:425px;top:101px' width='14' height='14' viewBox='0 0 14 14'><path d='M0.5 0.5h7.5v2.8h-4.3v2.2h3.2v2.6h-3.2v5.4h-3.2z' fill='#ff3c00'/><rect x='7.9' y='3.6' width='2.2' height='2.4' fill='#0a2a92' transform='rotate(0 9 9)'/><rect x='7.9' y='3.6' width='2.2' height='2.4' fill='#0a2a92' transform='rotate(45 9 9)'/><rect x='7.9' y='3.6' width='2.2' height='2.4' fill='#0a2a92' transform='rotate(90 9 9)'/><rect x='7.9' y='3.6' width='2.2' height='2.4' fill='#0a2a92' transform='rotate(135 9 9)'/><rect x='7.9' y='3.6' width='2.2' height='2.4' fill='#0a2a92' transform='rotate(180 9 9)'/><rect x='7.9' y='3.6' width='2.2' height='2.4' fill='#0a2a92' transform='rotate(225 9 9)'/><rect x='7.9' y='3.6' width='2.2' height='2.4' fill='#0a2a92' transform='rotate(270 9 9)'/><rect x='7.9' y='3.6' width='2.2' height='2.4' fill='#0a2a92' transform='rotate(315 9 9)'/><circle cx='9' cy='9' r='3.9' fill='#0b2c98'/><circle cx='9' cy='9' r='2.7' fill='#2f6ad0'/><circle cx='9' cy='9' r='1.2' fill='#e6ecf4'/></svg>
<div class='t' style='left:440px;width:672px;text-align:center;top:98px;line-height:22px;color:#2e2a28'>Unnamed : 1*</div>
<div class='a' style='left:1112px;top:101px;width:13px;height:13px;border-radius:50%;background:radial-gradient(circle,#efedeb 0,#e2dfdd 60%,#d0ccc9 100%)'></div>
<svg class='a' style='left:1114px;top:106px' width='9' height='6' viewBox='0 0 9 6'><path d='M1.5 1l3 3 3-3' fill='none' stroke='#333' stroke-width='1.2'/></svg>
<div class='a' style='left:1130px;top:101px;width:13px;height:13px;border-radius:50%;background:radial-gradient(circle,#efedeb 0,#e2dfdd 60%,#d0ccc9 100%)'></div>
<svg class='a' style='left:1132px;top:104px' width='9' height='6' viewBox='0 0 9 6'><path d='M1.5 5l3-3 3 3' fill='none' stroke='#333' stroke-width='1.2'/></svg>
<div class='a' style='left:1148px;top:101px;width:13px;height:13px;border-radius:50%;background:radial-gradient(circle,#efedeb 0,#e2dfdd 60%,#d0ccc9 100%)'></div>
<svg class='a' style='left:1150px;top:104px' width='9' height='9' viewBox='0 0 9 9'><path d='M1.5 1.5l6 6M7.5 1.5l-6 6' fill='none' stroke='#333' stroke-width='1.2'/></svg>
<div class='a' style='left:422px;top:119px;width:744px;height:712px;background:linear-gradient(to bottom,#343365,#9596a8)'></div>
<div class='a' style='left:1170px;top:95px;width:750px;height:370px;background:#2b2927;border-radius:4px 4px 2px 2px'></div>
<div class='a' style='left:1171px;top:96px;width:748px;height:368px;background:#c4bcb9;border-radius:4px 4px 1px 1px'></div>
<div class='a' style='left:1172px;top:97px;width:746px;height:24px;background:radial-gradient(ellipse 55% 160% at 50% 0,#efeeed 0,#e7e5e3 45%,#dddbd9 100%);border-radius:4px 4px 0 0;border:1px solid #f6f5f4;border-bottom:none'></div>
<svg class='a' style='left:1177px;top:101px' width='14' height='14' viewBox='0 0 14 14'><path d='M0.5 0.5h7.5v2.8h-4.3v2.2h3.2v2.6h-3.2v5.4h-3.2z' fill='#ff3c00'/><rect x='7.9' y='3.6' width='2.2' height='2.4' fill='#0a2a92' transform='rotate(0 9 9)'/><rect x='7.9' y='3.6' width='2.2' height='2.4' fill='#0a2a92' transform='rotate(45 9 9)'/><rect x='7.9' y='3.6' width='2.2' height='2.4' fill='#0a2a92' transform='rotate(90 9 9)'/><rect x='7.9' y='3.6' width='2.2' height='2.4' fill='#0a2a92' transform='rotate(135 9 9)'/><rect x='7.9' y='3.6' width='2.2' height='2.4' fill='#0a2a92' transform='rotate(180 9 9)'/><rect x='7.9' y='3.6' width='2.2' height='2.4' fill='#0a2a92' transform='rotate(225 9 9)'/><rect x='7.9' y='3.6' width='2.2' height='2.4' fill='#0a2a92' transform='rotate(270 9 9)'/><rect x='7.9' y='3.6' width='2.2' height='2.4' fill='#0a2a92' transform='rotate(315 9 9)'/><circle cx='9' cy='9' r='3.9' fill='#0b2c98'/><circle cx='9' cy='9' r='2.7' fill='#2f6ad0'/><circle cx='9' cy='9' r='1.2' fill='#e6ecf4'/></svg>
<div class='t' style='left:1192px;width:670px;text-align:center;top:98px;line-height:22px;color:#8b8682'>Gráfico de dependencias</div>
<div class='a' style='left:1862px;top:101px;width:13px;height:13px;border-radius:50%;background:radial-gradient(circle,#efedeb 0,#e2dfdd 60%,#d0ccc9 100%)'></div>
<svg class='a' style='left:1864px;top:106px' width='9' height='6' viewBox='0 0 9 6'><path d='M1.5 1l3 3 3-3' fill='none' stroke='#8a8683' stroke-width='1.2'/></svg>
<div class='a' style='left:1880px;top:101px;width:13px;height:13px;border-radius:50%;background:radial-gradient(circle,#efedeb 0,#e2dfdd 60%,#d0ccc9 100%)'></div>
<svg class='a' style='left:1882px;top:104px' width='9' height='6' viewBox='0 0 9 6'><path d='M1.5 5l3-3 3 3' fill='none' stroke='#8a8683' stroke-width='1.2'/></svg>
<div class='a' style='left:1898px;top:101px;width:13px;height:13px;border-radius:50%;background:radial-gradient(circle,#efedeb 0,#e2dfdd 60%,#d0ccc9 100%)'></div>
<svg class='a' style='left:1900px;top:104px' width='9' height='9' viewBox='0 0 9 9'><path d='M1.5 1.5l6 6M7.5 1.5l-6 6' fill='none' stroke='#8a8683' stroke-width='1.2'/></svg>
<div class='a' style='left:1176px;top:121px;width:738px;height:339px;background:#fff;border-radius:3px;border:1px solid #aaa39f;border-top-color:#8f8985'></div>
<div class='a' style='left:1170px;top:465px;width:750px;height:370px;background:#2b2927;border-radius:4px 4px 2px 2px'></div>
<div class='a' style='left:1171px;top:466px;width:748px;height:368px;background:#c4bcb9;border-radius:4px 4px 1px 1px'></div>
<div class='a' style='left:1172px;top:467px;width:746px;height:23px;background:radial-gradient(ellipse 55% 160% at 50% 0,#efeeed 0,#e7e5e3 45%,#dddbd9 100%);border-radius:4px 4px 0 0;border:1px solid #f6f5f4;border-bottom:none'></div>
<svg class='a' style='left:1177px;top:471px' width='14' height='14' viewBox='0 0 14 14'><path d='M0.5 0.5h7.5v2.8h-4.3v2.2h3.2v2.6h-3.2v5.4h-3.2z' fill='#ff3c00'/><rect x='7.9' y='3.6' width='2.2' height='2.4' fill='#0a2a92' transform='rotate(0 9 9)'/><rect x='7.9' y='3.6' width='2.2' height='2.4' fill='#0a2a92' transform='rotate(45 9 9)'/><rect x='7.9' y='3.6' width='2.2' height='2.4' fill='#0a2a92' transform='rotate(90 9 9)'/><rect x='7.9' y='3.6' width='2.2' height='2.4' fill='#0a2a92' transform='rotate(135 9 9)'/><rect x='7.9' y='3.6' width='2.2' height='2.4' fill='#0a2a92' transform='rotate(180 9 9)'/><rect x='7.9' y='3.6' width='2.2' height='2.4' fill='#0a2a92' transform='rotate(225 9 9)'/><rect x='7.9' y='3.6' width='2.2' height='2.4' fill='#0a2a92' transform='rotate(270 9 9)'/><rect x='7.9' y='3.6' width='2.2' height='2.4' fill='#0a2a92' transform='rotate(315 9 9)'/><circle cx='9' cy='9' r='3.9' fill='#0b2c98'/><circle cx='9' cy='9' r='2.7' fill='#2f6ad0'/><circle cx='9' cy='9' r='1.2' fill='#e6ecf4'/></svg>
<div class='t' style='left:1192px;width:670px;text-align:center;top:468px;line-height:22px;color:#8b8682'>Unnamed : 2*</div>
<div class='a' style='left:1862px;top:471px;width:13px;height:13px;border-radius:50%;background:radial-gradient(circle,#efedeb 0,#e2dfdd 60%,#d0ccc9 100%)'></div>
<svg class='a' style='left:1864px;top:476px' width='9' height='6' viewBox='0 0 9 6'><path d='M1.5 1l3 3 3-3' fill='none' stroke='#8a8683' stroke-width='1.2'/></svg>
<div class='a' style='left:1880px;top:471px;width:13px;height:13px;border-radius:50%;background:radial-gradient(circle,#efedeb 0,#e2dfdd 60%,#d0ccc9 100%)'></div>
<svg class='a' style='left:1882px;top:474px' width='9' height='6' viewBox='0 0 9 6'><path d='M1.5 5l3-3 3 3' fill='none' stroke='#8a8683' stroke-width='1.2'/></svg>
<div class='a' style='left:1898px;top:471px;width:13px;height:13px;border-radius:50%;background:radial-gradient(circle,#efedeb 0,#e2dfdd 60%,#d0ccc9 100%)'></div>
<svg class='a' style='left:1900px;top:474px' width='9' height='9' viewBox='0 0 9 9'><path d='M1.5 1.5l6 6M7.5 1.5l-6 6' fill='none' stroke='#8a8683' stroke-width='1.2'/></svg>
<div class='a' style='left:1180px;top:490px;width:736px;height:341px;background:linear-gradient(to bottom,#343365,#9596a8)'></div>
<div class='a' style='left:1174px;top:490px;width:6px;height:328px;background:linear-gradient(to right,#c8c2be,#fff 40%,#fff)'></div>
<div class='a' style='left:1174px;top:818px;width:6px;height:13px;background:#c4bcb9;border-top:3px solid #d4ceca'></div>
<svg class='a' style='left:1177px;top:122px' width='738' height='339' viewBox='0 0 738 339'>
<g fill='none' stroke='#000' stroke-width='1.3'>
<ellipse cx='361' cy='68' rx='39' ry='24'/>
<ellipse cx='290' cy='167' rx='51.5' ry='24'/>
<ellipse cx='431' cy='167' rx='64.5' ry='24'/>
<ellipse cx='291' cy='266' rx='39' ry='24'/>
<path d='M345 92L318 130 M377 92L402 130 M291 191V225'/>
</g>
<g fill='#000'>
<path d='M310 143l3-15 8 5z'/><path d='M412 143l-11-12 9-4z'/><path d='M291 241l-5-15h10z'/>
</g>
</svg>
<div class='t' style='left:1519px;top:181px;font-size:20px;color:#000;font-weight:normal;font-family:"Liberation Sans", sans-serif;letter-spacing:0.4px'>Cut</div>
<div class='t' style='left:1442px;top:280px;font-size:20px;color:#000;font-weight:normal;font-family:"Liberation Sans", sans-serif;letter-spacing:0.6px'>Array</div>
<div class='t' style='left:1574px;top:280px;font-size:20px;color:#000;font-weight:normal;font-family:"Liberation Sans", sans-serif;letter-spacing:0.6px'>Box001</div>
<div class='t' style='left:1451px;top:379px;font-size:20px;color:#000;font-weight:normal;font-family:"Liberation Sans", sans-serif;letter-spacing:0.5px'>Box</div>
<svg class='a' style='left:1108px;top:788px' width='56' height='26' viewBox='0 0 56 26'><path d='M22 7L3 22' stroke='#9a1a1a' stroke-width='1.5'/><path d='M6 17l-2 3 4-1z' fill='#9a1a1a'/><path d='M22 7v18' stroke='#1a8a1a' stroke-width='1.8'/><path d='M20 22l2 3 2-3z' fill='#1a8a1a'/><path d='M22 7l22 12' stroke='#1a1a8a' stroke-width='1.6'/><path d='M38 18l6 2-3-5z' fill='#1a1a8a'/><text x='8' y='22' font-size='9' font-family='Liberation Sans' fill='#000'>X</text><text x='24' y='26' font-size='9' font-family='Liberation Sans' fill='#000'>Y</text><text x='47' y='21' font-size='11' font-family='Liberation Sans' fill='#000'>Z</text></svg>
<svg class='a' style='left:1893px;top:793px' width='24' height='30' viewBox='0 0 24 30'><path d='M4 20V9' stroke='#1a1a8a' stroke-width='1.6'/><path d='M4 20l7-5' stroke='#1a8a1a' stroke-width='1.8'/><path d='M4 20l8 5' stroke='#8a1a1a' stroke-width='1.8'/><text x='8' y='9' font-size='9' font-family='Liberation Sans' fill='#000'>Z</text><text x='14' y='17' font-size='9' font-family='Liberation Sans' fill='#000'>Y</text><text x='15' y='26' font-size='9' font-family='Liberation Sans' fill='#000'>X</text></svg>
<div class='a' style='left:420px;top:836px;width:126px;height:26px;border-radius:0 0 5px 5px;background:linear-gradient(#c8c0bd,#e6e3e1);border:1px solid #f2f0ee;border-top:none;box-shadow:0 1px 1px rgba(0,0,0,.25)'></div>
<svg class='a' style='left:427px;top:844px' width='14' height='14' viewBox='0 0 14 14'><path d='M0.5 0.5h7.5v2.8h-4.3v2.2h3.2v2.6h-3.2v5.4h-3.2z' fill='#ff3c00'/><rect x='7.9' y='3.6' width='2.2' height='2.4' fill='#0a2a92' transform='rotate(0 9 9)'/><rect x='7.9' y='3.6' width='2.2' height='2.4' fill='#0a2a92' transform='rotate(45 9 9)'/><rect x='7.9' y='3.6' width='2.2' height='2.4' fill='#0a2a92' transform='rotate(90 9 9)'/><rect x='7.9' y='3.6' width='2.2' height='2.4' fill='#0a2a92' transform='rotate(135 9 9)'/><rect x='7.9' y='3.6' width='2.2' height='2.4' fill='#0a2a92' transform='rotate(180 9 9)'/><rect x='7.9' y='3.6' width='2.2' height='2.4' fill='#0a2a92' transform='rotate(225 9 9)'/><rect x='7.9' y='3.6' width='2.2' height='2.4' fill='#0a2a92' transform='rotate(270 9 9)'/><rect x='7.9' y='3.6' width='2.2' height='2.4' fill='#0a2a92' transform='rotate(315 9 9)'/><circle cx='9' cy='9' r='3.9' fill='#0b2c98'/><circle cx='9' cy='9' r='2.7' fill='#2f6ad0'/><circle cx='9' cy='9' r='1.2' fill='#e6ecf4'/></svg>
<div class='t' style='left:447px;top:844px;font-size:12px;color:#2e2a28;font-weight:normal;font-family:"Liberation Sans", sans-serif;'>Unnamed : 1*</div>
<svg class='a' style='left:527px;top:843px' width='14' height='14' viewBox='0 0 14 14'><circle cx='7' cy='7' r='6.5' fill='#c81a10'/><circle cx='7' cy='6' r='4.8' fill='#e85a20'/><path d='M4.3 4.3l5.4 5.4M9.7 4.3l-5.4 5.4' stroke='#fff' stroke-width='2'/></svg>
<div class='a' style='left:551px;top:838px;width:184px;height:22px;border-radius:0 0 5px 5px;background:linear-gradient(#c4bcb9,#d2ccc9);border:1px solid #ebe8e6;border-top:none;box-shadow:0 1px 1px rgba(0,0,0,.2)'></div>
<svg class='a' style='left:558px;top:844px' width='14' height='14' viewBox='0 0 14 14'><path d='M0.5 0.5h7.5v2.8h-4.3v2.2h3.2v2.6h-3.2v5.4h-3.2z' fill='#ff3c00'/><rect x='7.9' y='3.6' width='2.2' height='2.4' fill='#0a2a92' transform='rotate(0 9 9)'/><rect x='7.9' y='3.6' width='2.2' height='2.4' fill='#0a2a92' transform='rotate(45 9 9)'/><rect x='7.9' y='3.6' width='2.2' height='2.4' fill='#0a2a92' transform='rotate(90 9 9)'/><rect x='7.9' y='3.6' width='2.2' height='2.4' fill='#0a2a92' transform='rotate(135 9 9)'/><rect x='7.9' y='3.6' width='2.2' height='2.4' fill='#0a2a92' transform='rotate(180 9 9)'/><rect x='7.9' y='3.6' width='2.2' height='2.4' fill='#0a2a92' transform='rotate(225 9 9)'/><rect x='7.9' y='3.6' width='2.2' height='2.4' fill='#0a2a92' transform='rotate(270 9 9)'/><rect x='7.9' y='3.6' width='2.2' height='2.4' fill='#0a2a92' transform='rotate(315 9 9)'/><circle cx='9' cy='9' r='3.9' fill='#0b2c98'/><circle cx='9' cy='9' r='2.7' fill='#2f6ad0'/><circle cx='9' cy='9' r='1.2' fill='#e6ecf4'/></svg>
<div class='t' style='left:578px;top:844px;font-size:12px;color:#2e2a28;font-weight:normal;font-family:"Liberation Sans", sans-serif;'>Gráfico de dependencias</div>
<svg class='a' style='left:716px;top:842px' width='14' height='14' viewBox='0 0 14 14'><circle cx='7' cy='7' r='6.5' fill='#a8a3a0'/><circle cx='7' cy='7' r='5.5' fill='#c8c4c1'/><path d='M4.3 4.3l5.4 5.4M9.7 4.3l-5.4 5.4' stroke='#fff' stroke-width='2'/></svg>
<div class='a' style='left:739px;top:838px;width:125px;height:22px;border-radius:0 0 5px 5px;background:linear-gradient(#c4bcb9,#d2ccc9);border:1px solid #ebe8e6;border-top:none;box-shadow:0 1px 1px rgba(0,0,0,.2)'></div>
<svg class='a' style='left:746px;top:844px' width='14' height='14' viewBox='0 0 14 14'><path d='M0.5 0.5h7.5v2.8h-4.3v2.2h3.2v2.6h-3.2v5.4h-3.2z' fill='#ff3c00'/><rect x='7.9' y='3.6' width='2.2' height='2.4' fill='#0a2a92' transform='rotate(0 9 9)'/><rect x='7.9' y='3.6' width='2.2' height='2.4' fill='#0a2a92' transform='rotate(45 9 9)'/><rect x='7.9' y='3.6' width='2.2' height='2.4' fill='#0a2a92' transform='rotate(90 9 9)'/><rect x='7.9' y='3.6' width='2.2' height='2.4' fill='#0a2a92' transform='rotate(135 9 9)'/><rect x='7.9' y='3.6' width='2.2' height='2.4' fill='#0a2a92' transform='rotate(180 9 9)'/><rect x='7.9' y='3.6' width='2.2' height='2.4' fill='#0a2a92' transform='rotate(225 9 9)'/><rect x='7.9' y='3.6' width='2.2' height='2.4' fill='#0a2a92' transform='rotate(270 9 9)'/><rect x='7.9' y='3.6' width='2.2' height='2.4' fill='#0a2a92' transform='rotate(315 9 9)'/><circle cx='9' cy='9' r='3.9' fill='#0b2c98'/><circle cx='9' cy='9' r='2.7' fill='#2f6ad0'/><circle cx='9' cy='9' r='1.2' fill='#e6ecf4'/></svg>
<div class='t' style='left:766px;top:844px;font-size:12px;color:#2e2a28;font-weight:normal;font-family:"Liberation Sans", sans-serif;'>Unnamed : 2*</div>
<svg class='a' style='left:845px;top:842px' width='14' height='14' viewBox='0 0 14 14'><circle cx='7' cy='7' r='6.5' fill='#a8a3a0'/><circle cx='7' cy='7' r='5.5' fill='#c8c4c1'/><path d='M4.3 4.3l5.4 5.4M9.7 4.3l-5.4 5.4' stroke='#fff' stroke-width='2'/></svg>
<div class='a' style='left:418px;top:837px;width:1502px;height:1px;background:#ebe8e6'></div>
<div class='a' style='left:460px;top:867px;width:1px;height:1px;background:#8a8480'></div>
<div class='a' style='left:463px;top:867px;width:1px;height:1px;background:#8a8480'></div>
<div class='a' style='left:466px;top:867px;width:1px;height:1px;background:#8a8480'></div>
<div class='a' style='left:709px;top:867px;width:1px;height:1px;background:#8a8480'></div>
<div class='a' style='left:712px;top:867px;width:1px;height:1px;background:#8a8480'></div>
<div class='a' style='left:715px;top:867px;width:1px;height:1px;background:#8a8480'></div>
<div class='a' style='left:959px;top:867px;width:1px;height:1px;background:#8a8480'></div>
<div class='a' style='left:962px;top:867px;width:1px;height:1px;background:#8a8480'></div>
<div class='a' style='left:965px;top:867px;width:1px;height:1px;background:#8a8480'></div>
<div class='a' style='left:1209px;top:867px;width:1px;height:1px;background:#8a8480'></div>
<div class='a' style='left:1212px;top:867px;width:1px;height:1px;background:#8a8480'></div>
<div class='a' style='left:1215px;top:867px;width:1px;height:1px;background:#8a8480'></div>
<div class='a' style='left:1459px;top:867px;width:1px;height:1px;background:#8a8480'></div>
<div class='a' style='left:1462px;top:867px;width:1px;height:1px;background:#8a8480'></div>
<div class='a' style='left:1465px;top:867px;width:1px;height:1px;background:#8a8480'></div>
<div class='a' style='left:1709px;top:867px;width:1px;height:1px;background:#8a8480'></div>
<div class='a' style='left:1712px;top:867px;width:1px;height:1px;background:#8a8480'></div>
<div class='a' style='left:1715px;top:867px;width:1px;height:1px;background:#8a8480'></div>
<div class='a' style='left:0px;top:869px;width:1920px;height:1px;background:#ddd8d5'></div>
<div class='a' style='left:2px;top:869px;width:1916px;height:132px;border-radius:4px;border:1px solid #e4e0de;box-shadow:inset 0 1px 0 rgba(0,0,0,.05)'></div>
<div class='t' style='left:7px;top:872px;font-size:12px;color:#2e2a28;font-weight:normal;font-family:"Liberation Sans", sans-serif;'>Consola de Python</div>
<svg class='a' style='left:1880px;top:872px' width='10' height='10' viewBox='0 0 10 10'><path d='M5 1l3.5 3.5L5 8 1.5 4.5z' fill='none' stroke='#222' stroke-width='1.3'/></svg>
<svg class='a' style='left:1899px;top:872px' width='10' height='10' viewBox='0 0 10 10'><path d='M1.5 1.5l7 7M8.5 1.5l-7 7' fill='none' stroke='#222' stroke-width='1.3'/></svg>
<div class='a' style='left:5px;top:893px;width:1894px;height:104px;background:#fff;border-radius:3px;border:1px solid #a8a29f;border-top-color:#86807c;overflow:hidden'></div>
<div class='a' style='left:6px;top:894px;width:1892px;height:102px;overflow:hidden'>
<div class='t' style='left:5px;top:0px;line-height:16px;font-family:"Liberation Serif", serif;font-size:14px;color:#9a9a9a;letter-spacing:3px'>&gt;&gt;&gt;</div>
<div class='t' style='left:42px;top:0px;line-height:16px;font-family:"Liberation Serif", serif;font-size:14px;color:#111'>App<span style='color:#9a9a9a'>.</span>activeDocument<span style='color:#9a9a9a'>()</span><span style='color:#9a9a9a'>.</span>Cut002<span style='color:#9a9a9a'>.</span>Base&nbsp; <span style='color:#9a9a9a'>=</span>&nbsp; App<span style='color:#9a9a9a'>.</span>activeDocument<span style='color:#9a9a9a'>()</span><span style='color:#9a9a9a'>.</span>Box003</div>
<div class='t' style='left:5px;top:16px;line-height:16px;font-family:"Liberation Serif", serif;font-size:14px;color:#9a9a9a;letter-spacing:3px'>&gt;&gt;&gt;</div>
<div class='t' style='left:42px;top:16px;line-height:16px;font-family:"Liberation Serif", serif;font-size:14px;color:#111'>App<span style='color:#9a9a9a'>.</span>activeDocument<span style='color:#9a9a9a'>()</span><span style='color:#9a9a9a'>.</span>Cut002<span style='color:#9a9a9a'>.</span>Tool&nbsp; <span style='color:#9a9a9a'>=</span>&nbsp; App<span style='color:#9a9a9a'>.</span>activeDocument<span style='color:#9a9a9a'>()</span><span style='color:#9a9a9a'>.</span>Array002</div>
<div class='t' style='left:5px;top:32px;line-height:16px;font-family:"Liberation Serif", serif;font-size:14px;color:#9a9a9a;letter-spacing:3px'>&gt;&gt;&gt;</div>
<div class='t' style='left:42px;top:32px;line-height:16px;font-family:"Liberation Serif", serif;font-size:14px;color:#111'>Gui<span style='color:#9a9a9a'>.</span>activeDocument<span style='color:#9a9a9a'>()</span><span style='color:#9a9a9a'>.</span>hide<span style='color:#9a9a9a'>(</span><span style='color:#e01010'>'Box003'</span><span style='color:#9a9a9a'>)</span></div>
<div class='t' style='left:5px;top:48px;line-height:16px;font-family:"Liberation Serif", serif;font-size:14px;color:#9a9a9a;letter-spacing:3px'>&gt;&gt;&gt;</div>
<div class='t' style='left:42px;top:48px;line-height:16px;font-family:"Liberation Serif", serif;font-size:14px;color:#111'>Gui<span style='color:#9a9a9a'>.</span>activeDocument<span style='color:#9a9a9a'>()</span><span style='color:#9a9a9a'>.</span>hide<span style='color:#9a9a9a'>(</span><span style='color:#e01010'>'Array002'</span><span style='color:#9a9a9a'>)</span></div>
<div class='t' style='left:5px;top:64px;line-height:16px;font-family:"Liberation Serif", serif;font-size:14px;color:#9a9a9a;letter-spacing:3px'>&gt;&gt;&gt;</div>
<div class='t' style='left:42px;top:64px;line-height:16px;font-family:"Liberation Serif", serif;font-size:14px;color:#111'>Gui<span style='color:#9a9a9a'>.</span>ActiveDocument<span style='color:#9a9a9a'>.</span>Cut002<span style='color:#9a9a9a'>.</span>ShapeColor<span style='color:#9a9a9a'>=</span>Gui<span style='color:#9a9a9a'>.</span>ActiveDocument<span style='color:#9a9a9a'>.</span>Box003<span style='color:#9a9a9a'>.</span>ShapeColor</div>
<div class='t' style='left:5px;top:80px;line-height:16px;font-family:"Liberation Serif", serif;font-size:14px;color:#9a9a9a;letter-spacing:3px'>&gt;&gt;&gt;</div>
<div class='t' style='left:42px;top:80px;line-height:16px;font-family:"Liberation Serif", serif;font-size:14px;color:#111'>Gui<span style='color:#9a9a9a'>.</span>ActiveDocument<span style='color:#9a9a9a'>.</span>Cut002<span style='color:#9a9a9a'>.</span>DisplayMode<span style='color:#9a9a9a'>=</span>Gui<span style='color:#9a9a9a'>.</span>ActiveDocument<span style='color:#9a9a9a'>.</span>Box003<span style='color:#9a9a9a'>.</span>DisplayMode</div>
<div class='t' style='left:5px;top:96px;line-height:16px;font-family:"Liberation Serif", serif;font-size:14px;color:#9a9a9a;letter-spacing:3px'>&gt;&gt;&gt;</div>
<div class='t' style='left:42px;top:96px;line-height:16px;font-family:"Liberation Serif", serif;font-size:14px;color:#111'>App<span style='color:#9a9a9a'>.</span>ActiveDocument<span style='color:#9a9a9a'>.</span>recompute<span style='color:#9a9a9a'>()</span></div>
</div>
<svg class='a' style='left:1902px;top:894px' width='14' height='102' viewBox='0 0 14 102'><path d='M3 9l4-4 4 4' fill='none' stroke='#222' stroke-width='1.3'/><rect x='2.5' y='13.5' width='9' height='62' rx='4' fill='#b5adaa' stroke='#a49c99'/><rect x='3.5' y='61' width='7' height='13' rx='3' fill='#ecebea' stroke='#9a928f' stroke-width='.6'/><path d='M3 84l4-4 4 4' fill='none' stroke='#222' stroke-width='1.3'/><path d='M3 91l4 4 4-4' fill='none' stroke='#222' stroke-width='1.3'/></svg>
<div class='t' style='left:7px;top:1008px;font-size:11.7px;color:#2e2a28;font-weight:normal;font-family:"Liberation Sans", sans-serif;'>Preselected: Unnamed.Cut002.Edge230 (3.940275,48.000000,56.000000)</div>
<div class='t' style='left:1700px;width:198px;text-align:right;top:1009px;font-size:12px'>203.52 x 93.53 mm</div>
<svg class='a' style='left:1180px;top:490px' width='736' height='341'><polygon points='338.8,186.0 359.4,198.0 359.4,174.1 338.8,162.2' fill='rgb(147,147,147)' stroke='rgb(147,147,147)' stroke-width='0.6'/><path d='M338.8 186.0L359.4 198.0M359.4 198.0L359.4 174.1M359.4 174.1L338.8 162.2M338.8 162.2L338.8 186.0' stroke='#151515' stroke-width='1.7' stroke-linecap='round' fill='none'/><polygon points='343.9,153.2 364.6,165.2 385.2,153.2 364.6,141.3' fill='rgb(155,155,155)' stroke='rgb(155,155,155)' stroke-width='0.6'/><path d='M343.9 153.2L364.6 165.2M364.6 165.2L385.2 153.2M385.2 153.2L364.6 141.3M364.6 141.3L343.9 153.2' stroke='#151515' stroke-width='1.7' stroke-linecap='round' fill='none'/><polygon points='369.7,198.0 390.4,186.0 390.4,162.2 369.7,174.1' fill='rgb(112,112,112)' stroke='rgb(112,112,112)' stroke-width='0.6'/><path d='M369.7 198.0L390.4 186.0M390.4 186.0L390.4 162.2M390.4 162.2L369.7 174.1M369.7 174.1L369.7 198.0' stroke='#151515' stroke-width='1.7' stroke-linecap='round' fill='none'/><polygon points='307.8,203.9 328.4,215.9 328.4,192.0 307.8,180.1' fill='rgb(147,147,147)' stroke='rgb(147,147,147)' stroke-width='0.6'/><path d='M307.8 203.9L328.4 215.9M328.4 215.9L328.4 192.0M328.4 192.0L307.8 180.1M307.8 180.1L307.8 203.9' stroke='#151515' stroke-width='1.7' stroke-linecap='round' fill='none'/><polygon points='312.9,171.1 333.6,183.1 359.4,168.1 338.8,156.2' fill='rgb(155,155,155)' stroke='rgb(155,155,155)' stroke-width='0.6'/><path d='M312.9 171.1L333.6 183.1M333.6 183.1L359.4 168.1M359.4 168.1L338.8 156.2M338.8 156.2L312.9 171.1' stroke='#151515' stroke-width='1.7' stroke-linecap='round' fill='none'/><polygon points='338.8,156.2 359.4,168.1 359.4,138.3 338.8,126.4' fill='rgb(147,147,147)' stroke='rgb(147,147,147)' stroke-width='0.6'/><path d='M338.8 156.2L359.4 168.1M359.4 168.1L359.4 138.3M359.4 138.3L338.8 126.4M338.8 126.4L338.8 156.2' stroke='#151515' stroke-width='1.7' stroke-linecap='round' fill='none'/><polygon points='343.9,117.5 364.6,129.4 385.2,117.5 364.6,105.5' fill='rgb(155,155,155)' stroke='rgb(155,155,155)' stroke-width='0.6'/><path d='M343.9 117.5L364.6 129.4M364.6 129.4L385.2 117.5M385.2 117.5L364.6 105.5M364.6 105.5L343.9 117.5' stroke='#151515' stroke-width='1.7' stroke-linecap='round' fill='none'/><polygon points='338.8,215.9 364.6,200.9 364.6,177.1 338.8,192.0' fill='rgb(112,112,112)' stroke='rgb(112,112,112)' stroke-width='0.6'/><path d='M338.8 215.9L364.6 200.9M364.6 200.9L364.6 177.1M364.6 177.1L338.8 192.0M338.8 192.0L338.8 215.9' stroke='#151515' stroke-width='1.7' stroke-linecap='round' fill='none'/><polygon points='369.7,168.1 390.4,156.2 390.4,126.4 369.7,138.3' fill='rgb(112,112,112)' stroke='rgb(112,112,112)' stroke-width='0.6'/><path d='M369.7 168.1L390.4 156.2M390.4 156.2L390.4 126.4M390.4 126.4L369.7 138.3M369.7 138.3L369.7 168.1' stroke='#151515' stroke-width='1.7' stroke-linecap='round' fill='none'/><polygon points='364.6,200.9 390.4,215.9 390.4,192.0 364.6,177.1' fill='rgb(147,147,147)' stroke='rgb(147,147,147)' stroke-width='0.6'/><path d='M364.6 200.9L390.4 215.9M390.4 215.9L390.4 192.0M390.4 192.0L364.6 177.1M364.6 177.1L364.6 200.9' stroke='#151515' stroke-width='1.7' stroke-linecap='round' fill='none'/><polygon points='369.7,168.1 395.6,183.1 416.2,171.1 390.4,156.2' fill='rgb(155,155,155)' stroke='rgb(155,155,155)' stroke-width='0.6'/><path d='M369.7 168.1L395.6 183.1M395.6 183.1L416.2 171.1M416.2 171.1L390.4 156.2M390.4 156.2L369.7 168.1' stroke='#151515' stroke-width='1.7' stroke-linecap='round' fill='none'/><polygon points='400.7,215.9 421.4,203.9 421.4,180.1 400.7,192.0' fill='rgb(112,112,112)' stroke='rgb(112,112,112)' stroke-width='0.6'/><path d='M400.7 215.9L421.4 203.9M421.4 203.9L421.4 180.1M421.4 180.1L400.7 192.0M400.7 192.0L400.7 215.9' stroke='#151515' stroke-width='1.7' stroke-linecap='round' fill='none'/><polygon points='276.8,221.8 297.4,233.7 297.4,209.9 276.8,198.0' fill='rgb(147,147,147)' stroke='rgb(147,147,147)' stroke-width='0.6'/><path d='M276.8 221.8L297.4 233.7M297.4 233.7L297.4 209.9M297.4 209.9L276.8 198.0M276.8 198.0L276.8 221.8' stroke='#151515' stroke-width='1.7' stroke-linecap='round' fill='none'/><polygon points='281.9,189.0 302.6,200.9 328.4,186.0 307.8,174.1' fill='rgb(155,155,155)' stroke='rgb(155,155,155)' stroke-width='0.6'/><path d='M281.9 189.0L302.6 200.9M302.6 200.9L328.4 186.0M328.4 186.0L307.8 174.1M307.8 174.1L281.9 189.0' stroke='#151515' stroke-width='1.7' stroke-linecap='round' fill='none'/><polygon points='307.8,174.1 328.4,186.0 328.4,156.2 307.8,144.3' fill='rgb(147,147,147)' stroke='rgb(147,147,147)' stroke-width='0.6'/><path d='M307.8 174.1L328.4 186.0M328.4 186.0L328.4 156.2M328.4 156.2L307.8 144.3M307.8 144.3L307.8 174.1' stroke='#151515' stroke-width='1.7' stroke-linecap='round' fill='none'/><polygon points='312.9,135.3 333.6,147.3 359.4,132.4 338.8,120.4' fill='rgb(155,155,155)' stroke='rgb(155,155,155)' stroke-width='0.6'/><path d='M312.9 135.3L333.6 147.3M333.6 147.3L359.4 132.4M359.4 132.4L338.8 120.4M338.8 120.4L312.9 135.3' stroke='#151515' stroke-width='1.7' stroke-linecap='round' fill='none'/><polygon points='338.8,120.4 359.4,132.4 359.4,102.5 338.8,90.6' fill='rgb(147,147,147)' stroke='rgb(147,147,147)' stroke-width='0.6'/><path d='M338.8 120.4L359.4 132.4M359.4 132.4L359.4 102.5M359.4 102.5L338.8 90.6M338.8 90.6L338.8 120.4' stroke='#151515' stroke-width='1.7' stroke-linecap='round' fill='none'/><polygon points='343.9,81.7 364.6,93.6 385.2,81.7 364.6,69.7' fill='rgb(155,155,155)' stroke='rgb(155,155,155)' stroke-width='0.6'/><path d='M343.9 81.7L364.6 93.6M364.6 93.6L385.2 81.7M385.2 81.7L364.6 69.7M364.6 69.7L343.9 81.7' stroke='#151515' stroke-width='1.7' stroke-linecap='round' fill='none'/><polygon points='307.8,233.7 333.6,218.8 333.6,195.0 307.8,209.9' fill='rgb(112,112,112)' stroke='rgb(112,112,112)' stroke-width='0.6'/><path d='M307.8 233.7L333.6 218.8M333.6 218.8L333.6 195.0M333.6 195.0L307.8 209.9M307.8 209.9L307.8 233.7' stroke='#151515' stroke-width='1.7' stroke-linecap='round' fill='none'/><polygon points='338.8,186.0 364.6,171.1 364.6,141.3 338.8,156.2' fill='rgb(112,112,112)' stroke='rgb(112,112,112)' stroke-width='0.6'/><path d='M338.8 186.0L364.6 171.1M364.6 171.1L364.6 141.3M364.6 141.3L338.8 156.2M338.8 156.2L338.8 186.0' stroke='#151515' stroke-width='1.7' stroke-linecap='round' fill='none'/><polygon points='369.7,132.4 390.4,120.4 390.4,90.6 369.7,102.5' fill='rgb(112,112,112)' stroke='rgb(112,112,112)' stroke-width='0.6'/><path d='M369.7 132.4L390.4 120.4M390.4 120.4L390.4 90.6M390.4 90.6L369.7 102.5M369.7 102.5L369.7 132.4' stroke='#151515' stroke-width='1.7' stroke-linecap='round' fill='none'/><polygon points='333.6,218.8 359.4,233.7 359.4,209.9 333.6,195.0' fill='rgb(147,147,147)' stroke='rgb(147,147,147)' stroke-width='0.6'/><path d='M333.6 218.8L359.4 233.7M359.4 233.7L359.4 209.9M359.4 209.9L333.6 195.0M333.6 195.0L333.6 218.8' stroke='#151515' stroke-width='1.7' stroke-linecap='round' fill='none'/><polygon points='338.8,186.0 364.6,200.9 390.4,186.0 364.6,171.1' fill='rgb(155,155,155)' stroke='rgb(155,155,155)' stroke-width='0.6'/><path d='M338.8 186.0L364.6 200.9M364.6 200.9L390.4 186.0M390.4 186.0L364.6 171.1M364.6 171.1L338.8 186.0' stroke='#151515' stroke-width='1.7' stroke-linecap='round' fill='none'/><polygon points='364.6,171.1 390.4,186.0 390.4,156.2 364.6,141.3' fill='rgb(147,147,147)' stroke='rgb(147,147,147)' stroke-width='0.6'/><path d='M364.6 171.1L390.4 186.0M390.4 186.0L390.4 156.2M390.4 156.2L364.6 141.3M364.6 141.3L364.6 171.1' stroke='#151515' stroke-width='1.7' stroke-linecap='round' fill='none'/><polygon points='369.7,132.4 395.6,147.3 416.2,135.3 390.4,120.4' fill='rgb(155,155,155)' stroke='rgb(155,155,155)' stroke-width='0.6'/><path d='M369.7 132.4L395.6 147.3M395.6 147.3L416.2 135.3M416.2 135.3L390.4 120.4M390.4 120.4L369.7 132.4' stroke='#151515' stroke-width='1.7' stroke-linecap='round' fill='none'/><polygon points='369.7,233.7 395.6,218.8 395.6,195.0 369.7,209.9' fill='rgb(112,112,112)' stroke='rgb(112,112,112)' stroke-width='0.6'/><path d='M369.7 233.7L395.6 218.8M395.6 218.8L395.6 195.0M395.6 195.0L369.7 209.9M369.7 209.9L369.7 233.7' stroke='#151515' stroke-width='1.7' stroke-linecap='round' fill='none'/><polygon points='400.7,186.0 421.4,174.1 421.4,144.3 400.7,156.2' fill='rgb(112,112,112)' stroke='rgb(112,112,112)' stroke-width='0.6'/><path d='M400.7 186.0L421.4 174.1M421.4 174.1L421.4 144.3M421.4 144.3L400.7 156.2M400.7 156.2L400.7 186.0' stroke='#151515' stroke-width='1.7' stroke-linecap='round' fill='none'/><polygon points='395.6,218.8 421.4,233.7 421.4,209.9 395.6,195.0' fill='rgb(147,147,147)' stroke='rgb(147,147,147)' stroke-width='0.6'/><path d='M395.6 218.8L421.4 233.7M421.4 233.7L421.4 209.9M421.4 209.9L395.6 195.0M395.6 195.0L395.6 218.8' stroke='#151515' stroke-width='1.7' stroke-linecap='round' fill='none'/><polygon points='400.7,186.0 426.6,200.9 447.2,189.0 421.4,174.1' fill='rgb(155,155,155)' stroke='rgb(155,155,155)' stroke-width='0.6'/><path d='M400.7 186.0L426.6 200.9M426.6 200.9L447.2 189.0M447.2 189.0L421.4 174.1M421.4 174.1L400.7 186.0' stroke='#151515' stroke-width='1.7' stroke-linecap='round' fill='none'/><polygon points='431.7,233.7 452.4,221.8 452.4,198.0 431.7,209.9' fill='rgb(112,112,112)' stroke='rgb(112,112,112)' stroke-width='0.6'/><path d='M431.7 233.7L452.4 221.8M452.4 221.8L452.4 198.0M452.4 198.0L431.7 209.9M431.7 209.9L431.7 233.7' stroke='#151515' stroke-width='1.7' stroke-linecap='round' fill='none'/><polygon points='245.8,239.7 266.4,251.6 266.4,227.8 245.8,215.9' fill='rgb(147,147,147)' stroke='rgb(147,147,147)' stroke-width='0.6'/><path d='M245.8 239.7L266.4 251.6M266.4 251.6L266.4 227.8M266.4 227.8L245.8 215.9M245.8 215.9L245.8 239.7' stroke='#151515' stroke-width='1.7' stroke-linecap='round' fill='none'/><polygon points='251.0,206.9 271.6,218.8 297.4,203.9 276.8,192.0' fill='rgb(155,155,155)' stroke='rgb(155,155,155)' stroke-width='0.6'/><path d='M251.0 206.9L271.6 218.8M271.6 218.8L297.4 203.9M297.4 203.9L276.8 192.0M276.8 192.0L251.0 206.9' stroke='#151515' stroke-width='1.7' stroke-linecap='round' fill='none'/><polygon points='276.8,192.0 297.4,203.9 297.4,174.1 276.8,162.2' fill='rgb(147,147,147)' stroke='rgb(147,147,147)' stroke-width='0.6'/><path d='M276.8 192.0L297.4 203.9M297.4 203.9L297.4 174.1M297.4 174.1L276.8 162.2M276.8 162.2L276.8 192.0' stroke='#151515' stroke-width='1.7' stroke-linecap='round' fill='none'/><polygon points='281.9,153.2 302.6,165.2 328.4,150.3 307.8,138.3' fill='rgb(155,155,155)' stroke='rgb(155,155,155)' stroke-width='0.6'/><path d='M281.9 153.2L302.6 165.2M302.6 165.2L328.4 150.3M328.4 150.3L307.8 138.3M307.8 138.3L281.9 153.2' stroke='#151515' stroke-width='1.7' stroke-linecap='round' fill='none'/><polygon points='307.8,138.3 328.4,150.3 328.4,120.4 307.8,108.5' fill='rgb(147,147,147)' stroke='rgb(147,147,147)' stroke-width='0.6'/><path d='M307.8 138.3L328.4 150.3M328.4 150.3L328.4 120.4M328.4 120.4L307.8 108.5M307.8 108.5L307.8 138.3' stroke='#151515' stroke-width='1.7' stroke-linecap='round' fill='none'/><polygon points='312.9,99.6 333.6,111.5 359.4,96.6 338.8,84.7' fill='rgb(155,155,155)' stroke='rgb(155,155,155)' stroke-width='0.6'/><path d='M312.9 99.6L333.6 111.5M333.6 111.5L359.4 96.6M359.4 96.6L338.8 84.7M338.8 84.7L312.9 99.6' stroke='#151515' stroke-width='1.7' stroke-linecap='round' fill='none'/><polygon points='338.8,84.7 359.4,96.6 359.4,66.8 338.8,54.8' fill='rgb(147,147,147)' stroke='rgb(147,147,147)' stroke-width='0.6'/><path d='M338.8 84.7L359.4 96.6M359.4 96.6L359.4 66.8M359.4 66.8L338.8 54.8M338.8 54.8L338.8 84.7' stroke='#151515' stroke-width='1.7' stroke-linecap='round' fill='none'/><polygon points='343.9,45.9 364.6,57.8 385.2,45.9 364.6,34.0' fill='rgb(155,155,155)' stroke='rgb(155,155,155)' stroke-width='0.6'/><path d='M343.9 45.9L364.6 57.8M364.6 57.8L385.2 45.9M385.2 45.9L364.6 34.0M364.6 34.0L343.9 45.9' stroke='#151515' stroke-width='1.7' stroke-linecap='round' fill='none'/><polygon points='276.8,251.6 302.6,236.7 302.6,212.9 276.8,227.8' fill='rgb(112,112,112)' stroke='rgb(112,112,112)' stroke-width='0.6'/><path d='M276.8 251.6L302.6 236.7M302.6 236.7L302.6 212.9M302.6 212.9L276.8 227.8M276.8 227.8L276.8 251.6' stroke='#151515' stroke-width='1.7' stroke-linecap='round' fill='none'/><polygon points='307.8,203.9 333.6,189.0 333.6,159.2 307.8,174.1' fill='rgb(112,112,112)' stroke='rgb(112,112,112)' stroke-width='0.6'/><path d='M307.8 203.9L333.6 189.0M333.6 189.0L333.6 159.2M333.6 159.2L307.8 174.1M307.8 174.1L307.8 203.9' stroke='#151515' stroke-width='1.7' stroke-linecap='round' fill='none'/><polygon points='338.8,150.3 364.6,135.3 364.6,105.5 338.8,120.4' fill='rgb(112,112,112)' stroke='rgb(112,112,112)' stroke-width='0.6'/><path d='M338.8 150.3L364.6 135.3M364.6 135.3L364.6 105.5M364.6 105.5L338.8 120.4M338.8 120.4L338.8 150.3' stroke='#151515' stroke-width='1.7' stroke-linecap='round' fill='none'/><polygon points='369.7,96.6 390.4,84.7 390.4,54.8 369.7,66.8' fill='rgb(112,112,112)' stroke='rgb(112,112,112)' stroke-width='0.6'/><path d='M369.7 96.6L390.4 84.7M390.4 84.7L390.4 54.8M390.4 54.8L369.7 66.8M369.7 66.8L369.7 96.6' stroke='#151515' stroke-width='1.7' stroke-linecap='round' fill='none'/><polygon points='302.6,236.7 328.4,251.6 328.4,227.8 302.6,212.9' fill='rgb(147,147,147)' stroke='rgb(147,147,147)' stroke-width='0.6'/><path d='M302.6 236.7L328.4 251.6M328.4 251.6L328.4 227.8M328.4 227.8L302.6 212.9M302.6 212.9L302.6 236.7' stroke='#151515' stroke-width='1.7' stroke-linecap='round' fill='none'/><polygon points='307.8,203.9 333.6,218.8 359.4,203.9 333.6,189.0' fill='rgb(155,155,155)' stroke='rgb(155,155,155)' stroke-width='0.6'/><path d='M307.8 203.9L333.6 218.8M333.6 218.8L359.4 203.9M359.4 203.9L333.6 189.0M333.6 189.0L307.8 203.9' stroke='#151515' stroke-width='1.7' stroke-linecap='round' fill='none'/><polygon points='333.6,189.0 359.4,203.9 359.4,174.1 333.6,159.2' fill='rgb(147,147,147)' stroke='rgb(147,147,147)' stroke-width='0.6'/><path d='M333.6 189.0L359.4 203.9M359.4 203.9L359.4 174.1M359.4 174.1L333.6 159.2M333.6 159.2L333.6 189.0' stroke='#151515' stroke-width='1.7' stroke-linecap='round' fill='none'/><polygon points='338.8,150.3 364.6,165.2 390.4,150.3 364.6,135.3' fill='rgb(155,155,155)' stroke='rgb(155,155,155)' stroke-width='0.6'/><path d='M338.8 150.3L364.6 165.2M364.6 165.2L390.4 150.3M390.4 150.3L364.6 135.3M364.6 135.3L338.8 150.3' stroke='#151515' stroke-width='1.7' stroke-linecap='round' fill='none'/><polygon points='364.6,135.3 390.4,150.3 390.4,120.4 364.6,105.5' fill='rgb(147,147,147)' stroke='rgb(147,147,147)' stroke-width='0.6'/><path d='M364.6 135.3L390.4 150.3M390.4 150.3L390.4 120.4M390.4 120.4L364.6 105.5M364.6 105.5L364.6 135.3' stroke='#151515' stroke-width='1.7' stroke-linecap='round' fill='none'/><polygon points='369.7,96.6 395.6,111.5 416.2,99.6 390.4,84.7' fill='rgb(155,155,155)' stroke='rgb(155,155,155)' stroke-width='0.6'/><path d='M369.7 96.6L395.6 111.5M395.6 111.5L416.2 99.6M416.2 99.6L390.4 84.7M390.4 84.7L369.7 96.6' stroke='#151515' stroke-width='1.7' stroke-linecap='round' fill='none'/><polygon points='338.8,251.6 364.6,236.7 364.6,212.9 338.8,227.8' fill='rgb(112,112,112)' stroke='rgb(112,112,112)' stroke-width='0.6'/><path d='M338.8 251.6L364.6 236.7M364.6 236.7L364.6 212.9M364.6 212.9L338.8 227.8M338.8 227.8L338.8 251.6' stroke='#151515' stroke-width='1.7' stroke-linecap='round' fill='none'/><polygon points='369.7,203.9 395.6,189.0 395.6,159.2 369.7,174.1' fill='rgb(112,112,112)' stroke='rgb(112,112,112)' stroke-width='0.6'/><path d='M369.7 203.9L395.6 189.0M395.6 189.0L395.6 159.2M395.6 159.2L369.7 174.1M369.7 174.1L369.7 203.9' stroke='#151515' stroke-width='1.7' stroke-linecap='round' fill='none'/><polygon points='400.7,150.3 421.4,138.3 421.4,108.5 400.7,120.4' fill='rgb(112,112,112)' stroke='rgb(112,112,112)' stroke-width='0.6'/><path d='M400.7 150.3L421.4 138.3M421.4 138.3L421.4 108.5M421.4 108.5L400.7 120.4M400.7 120.4L400.7 150.3' stroke='#151515' stroke-width='1.7' stroke-linecap='round' fill='none'/><polygon points='364.6,236.7 390.4,251.6 390.4,227.8 364.6,212.9' fill='rgb(147,147,147)' stroke='rgb(147,147,147)' stroke-width='0.6'/><path d='M364.6 236.7L390.4 251.6M390.4 251.6L390.4 227.8M390.4 227.8L364.6 212.9M364.6 212.9L364.6 236.7' stroke='#151515' stroke-width='1.7' stroke-linecap='round' fill='none'/><polygon points='369.7,203.9 395.6,218.8 421.4,203.9 395.6,189.0' fill='rgb(155,155,155)' stroke='rgb(155,155,155)' stroke-width='0.6'/><path d='M369.7 203.9L395.6 218.8M395.6 218.8L421.4 203.9M421.4 203.9L395.6 189.0M395.6 189.0L369.7 203.9' stroke='#151515' stroke-width='1.7' stroke-linecap='round' fill='none'/><polygon points='395.6,189.0 421.4,203.9 421.4,174.1 395.6,159.2' fill='rgb(147,147,147)' stroke='rgb(147,147,147)' stroke-width='0.6'/><path d='M395.6 189.0L421.4 203.9M421.4 203.9L421.4 174.1M421.4 174.1L395.6 159.2M395.6 159.2L395.6 189.0' stroke='#151515' stroke-width='1.7' stroke-linecap='round' fill='none'/><polygon points='400.7,150.3 426.6,165.2 447.2,153.2 421.4,138.3' fill='rgb(155,155,155)' stroke='rgb(155,155,155)' stroke-width='0.6'/><path d='M400.7 150.3L426.6 165.2M426.6 165.2L447.2 153.2M447.2 153.2L421.4 138.3M421.4 138.3L400.7 150.3' stroke='#151515' stroke-width='1.7' stroke-linecap='round' fill='none'/><polygon points='400.7,251.6 426.6,236.7 426.6,212.9 400.7,227.8' fill='rgb(112,112,112)' stroke='rgb(112,112,112)' stroke-width='0.6'/><path d='M400.7 251.6L426.6 236.7M426.6 236.7L426.6 212.9M426.6 212.9L400.7 227.8M400.7 227.8L400.7 251.6' stroke='#151515' stroke-width='1.7' stroke-linecap='round' fill='none'/><polygon points='431.7,203.9 452.4,192.0 452.4,162.2 431.7,174.1' fill='rgb(112,112,112)' stroke='rgb(112,112,112)' stroke-width='0.6'/><path d='M431.7 203.9L452.4 192.0M452.4 192.0L452.4 162.2M452.4 162.2L431.7 174.1M431.7 174.1L431.7 203.9' stroke='#151515' stroke-width='1.7' stroke-linecap='round' fill='none'/><polygon points='426.6,236.7 452.4,251.6 452.4,227.8 426.6,212.9' fill='rgb(147,147,147)' stroke='rgb(147,147,147)' stroke-width='0.6'/><path d='M426.6 236.7L452.4 251.6M452.4 251.6L452.4 227.8M452.4 227.8L426.6 212.9M426.6 212.9L426.6 236.7' stroke='#151515' stroke-width='1.7' stroke-linecap='round' fill='none'/><polygon points='431.7,203.9 457.5,218.8 478.2,206.9 452.4,192.0' fill='rgb(155,155,155)' stroke='rgb(155,155,155)' stroke-width='0.6'/><path d='M431.7 203.9L457.5 218.8M457.5 218.8L478.2 206.9M478.2 206.9L452.4 192.0M452.4 192.0L431.7 203.9' stroke='#151515' stroke-width='1.7' stroke-linecap='round' fill='none'/><polygon points='462.7,251.6 483.4,239.7 483.4,215.9 462.7,227.8' fill='rgb(112,112,112)' stroke='rgb(112,112,112)' stroke-width='0.6'/><path d='M462.7 251.6L483.4 239.7M483.4 239.7L483.4 215.9M483.4 215.9L462.7 227.8M462.7 227.8L462.7 251.6' stroke='#151515' stroke-width='1.7' stroke-linecap='round' fill='none'/><polygon points='225.1,227.8 245.8,239.7 245.8,233.7 225.1,221.8' fill='rgb(147,147,147)' stroke='rgb(147,147,147)' stroke-width='0.6'/><path d='M225.1 227.8L245.8 239.7M245.8 233.7L225.1 221.8M225.1 221.8L225.1 227.8' stroke='#151515' stroke-width='1.7' stroke-linecap='round' fill='none'/><polygon points='225.1,221.8 245.8,233.7 266.4,221.8 245.8,209.9' fill='rgb(155,155,155)' stroke='rgb(155,155,155)' stroke-width='0.6'/><path d='M225.1 221.8L245.8 233.7M245.8 233.7L266.4 221.8M266.4 221.8L245.8 209.9M245.8 209.9L225.1 221.8' stroke='#151515' stroke-width='1.7' stroke-linecap='round' fill='none'/><polygon points='245.8,209.9 266.4,221.8 266.4,192.0 245.8,180.1' fill='rgb(147,147,147)' stroke='rgb(147,147,147)' stroke-width='0.6'/><path d='M245.8 209.9L266.4 221.8M266.4 221.8L266.4 192.0M266.4 192.0L245.8 180.1M245.8 180.1L245.8 209.9' stroke='#151515' stroke-width='1.7' stroke-linecap='round' fill='none'/><polygon points='251.0,171.1 271.6,183.1 297.4,168.1 276.8,156.2' fill='rgb(155,155,155)' stroke='rgb(155,155,155)' stroke-width='0.6'/><path d='M251.0 171.1L271.6 183.1M271.6 183.1L297.4 168.1M297.4 168.1L276.8 156.2M276.8 156.2L251.0 171.1' stroke='#151515' stroke-width='1.7' stroke-linecap='round' fill='none'/><polygon points='276.8,156.2 297.4,168.1 297.4,138.3 276.8,126.4' fill='rgb(147,147,147)' stroke='rgb(147,147,147)' stroke-width='0.6'/><path d='M276.8 156.2L297.4 168.1M297.4 168.1L297.4 138.3M297.4 138.3L276.8 126.4M276.8 126.4L276.8 156.2' stroke='#151515' stroke-width='1.7' stroke-linecap='round' fill='none'/><polygon points='281.9,117.5 302.6,129.4 328.4,114.5 307.8,102.5' fill='rgb(155,155,155)' stroke='rgb(155,155,155)' stroke-width='0.6'/><path d='M281.9 117.5L302.6 129.4M302.6 129.4L328.4 114.5M328.4 114.5L307.8 102.5M307.8 102.5L281.9 117.5' stroke='#151515' stroke-width='1.7' stroke-linecap='round' fill='none'/><polygon points='307.8,102.5 328.4,114.5 328.4,84.7 307.8,72.7' fill='rgb(147,147,147)' stroke='rgb(147,147,147)' stroke-width='0.6'/><path d='M307.8 102.5L328.4 114.5M328.4 114.5L328.4 84.7M328.4 84.7L307.8 72.7M307.8 72.7L307.8 102.5' stroke='#151515' stroke-width='1.7' stroke-linecap='round' fill='none'/><polygon points='312.9,63.8 333.6,75.7 359.4,60.8 338.8,48.9' fill='rgb(155,155,155)' stroke='rgb(155,155,155)' stroke-width='0.6'/><path d='M312.9 63.8L333.6 75.7M333.6 75.7L359.4 60.8M359.4 60.8L338.8 48.9M338.8 48.9L312.9 63.8' stroke='#151515' stroke-width='1.7' stroke-linecap='round' fill='none'/><polygon points='338.8,48.9 359.4,60.8 359.4,36.9 338.8,25.0' fill='rgb(147,147,147)' stroke='rgb(147,147,147)' stroke-width='0.6'/><path d='M338.8 48.9L359.4 60.8M359.4 60.8L359.4 36.9M359.4 36.9L338.8 25.0M338.8 25.0L338.8 48.9' stroke='#151515' stroke-width='1.7' stroke-linecap='round' fill='none'/><polygon points='338.8,25.0 359.4,36.9 364.6,34.0 343.9,22.0' fill='rgb(155,155,155)' stroke='rgb(155,155,155)' stroke-width='0.6'/><path d='M338.8 25.0L359.4 36.9M364.6 34.0L343.9 22.0M343.9 22.0L338.8 25.0' stroke='#151515' stroke-width='1.7' stroke-linecap='round' fill='none'/><polygon points='251.0,266.5 271.6,254.6 271.6,230.8 251.0,242.7' fill='rgb(112,112,112)' stroke='rgb(112,112,112)' stroke-width='0.6'/><path d='M251.0 266.5L271.6 254.6M271.6 254.6L271.6 230.8M271.6 230.8L251.0 242.7M251.0 242.7L251.0 266.5' stroke='#151515' stroke-width='1.7' stroke-linecap='round' fill='none'/><polygon points='245.8,263.6 251.0,266.5 251.0,242.7 245.8,239.7' fill='rgb(147,147,147)' stroke='rgb(147,147,147)' stroke-width='0.6'/><path d='M245.8 263.6L251.0 266.5M251.0 266.5L251.0 242.7M245.8 239.7L245.8 263.6' stroke='#151515' stroke-width='1.7' stroke-linecap='round' fill='none'/><polygon points='276.8,221.8 302.6,206.9 302.6,177.1 276.8,192.0' fill='rgb(112,112,112)' stroke='rgb(112,112,112)' stroke-width='0.6'/><path d='M276.8 221.8L302.6 206.9M302.6 206.9L302.6 177.1M302.6 177.1L276.8 192.0M276.8 192.0L276.8 221.8' stroke='#151515' stroke-width='1.7' stroke-linecap='round' fill='none'/><polygon points='307.8,168.1 333.6,153.2 333.6,123.4 307.8,138.3' fill='rgb(112,112,112)' stroke='rgb(112,112,112)' stroke-width='0.6'/><path d='M307.8 168.1L333.6 153.2M333.6 153.2L333.6 123.4M333.6 123.4L307.8 138.3M307.8 138.3L307.8 168.1' stroke='#151515' stroke-width='1.7' stroke-linecap='round' fill='none'/><polygon points='338.8,114.5 364.6,99.6 364.6,69.7 338.8,84.7' fill='rgb(112,112,112)' stroke='rgb(112,112,112)' stroke-width='0.6'/><path d='M338.8 114.5L364.6 99.6M364.6 99.6L364.6 69.7M364.6 69.7L338.8 84.7M338.8 84.7L338.8 114.5' stroke='#151515' stroke-width='1.7' stroke-linecap='round' fill='none'/><polygon points='369.7,60.8 390.4,48.9 390.4,25.0 369.7,36.9' fill='rgb(112,112,112)' stroke='rgb(112,112,112)' stroke-width='0.6'/><path d='M369.7 60.8L390.4 48.9M390.4 48.9L390.4 25.0M390.4 25.0L369.7 36.9M369.7 36.9L369.7 60.8' stroke='#151515' stroke-width='1.7' stroke-linecap='round' fill='none'/><polygon points='364.6,34.0 369.7,36.9 390.4,25.0 385.2,22.0' fill='rgb(155,155,155)' stroke='rgb(155,155,155)' stroke-width='0.6'/><path d='M369.7 36.9L390.4 25.0M390.4 25.0L385.2 22.0M385.2 22.0L364.6 34.0' stroke='#151515' stroke-width='1.7' stroke-linecap='round' fill='none'/><polygon points='271.6,254.6 297.4,269.5 297.4,245.7 271.6,230.8' fill='rgb(147,147,147)' stroke='rgb(147,147,147)' stroke-width='0.6'/><path d='M271.6 254.6L297.4 269.5M297.4 269.5L297.4 245.7M297.4 245.7L271.6 230.8M271.6 230.8L271.6 254.6' stroke='#151515' stroke-width='1.7' stroke-linecap='round' fill='none'/><polygon points='276.8,221.8 302.6,236.7 328.4,221.8 302.6,206.9' fill='rgb(155,155,155)' stroke='rgb(155,155,155)' stroke-width='0.6'/><path d='M276.8 221.8L302.6 236.7M302.6 236.7L328.4 221.8M328.4 221.8L302.6 206.9M302.6 206.9L276.8 221.8' stroke='#151515' stroke-width='1.7' stroke-linecap='round' fill='none'/><polygon points='302.6,206.9 328.4,221.8 328.4,192.0 302.6,177.1' fill='rgb(147,147,147)' stroke='rgb(147,147,147)' stroke-width='0.6'/><path d='M302.6 206.9L328.4 221.8M328.4 221.8L328.4 192.0M328.4 192.0L302.6 177.1M302.6 177.1L302.6 206.9' stroke='#151515' stroke-width='1.7' stroke-linecap='round' fill='none'/><polygon points='307.8,168.1 333.6,183.1 359.4,168.1 333.6,153.2' fill='rgb(155,155,155)' stroke='rgb(155,155,155)' stroke-width='0.6'/><path d='M307.8 168.1L333.6 183.1M333.6 183.1L359.4 168.1M359.4 168.1L333.6 153.2M333.6 153.2L307.8 168.1' stroke='#151515' stroke-width='1.7' stroke-linecap='round' fill='none'/><polygon points='333.6,153.2 359.4,168.1 359.4,138.3 333.6,123.4' fill='rgb(147,147,147)' stroke='rgb(147,147,147)' stroke-width='0.6'/><path d='M333.6 153.2L359.4 168.1M359.4 168.1L359.4 138.3M359.4 138.3L333.6 123.4M333.6 123.4L333.6 153.2' stroke='#151515' stroke-width='1.7' stroke-linecap='round' fill='none'/><polygon points='338.8,114.5 364.6,129.4 390.4,114.5 364.6,99.6' fill='rgb(155,155,155)' stroke='rgb(155,155,155)' stroke-width='0.6'/><path d='M338.8 114.5L364.6 129.4M364.6 129.4L390.4 114.5M390.4 114.5L364.6 99.6M364.6 99.6L338.8 114.5' stroke='#151515' stroke-width='1.7' stroke-linecap='round' fill='none'/><polygon points='364.6,99.6 390.4,114.5 390.4,84.7 364.6,69.7' fill='rgb(147,147,147)' stroke='rgb(147,147,147)' stroke-width='0.6'/><path d='M364.6 99.6L390.4 114.5M390.4 114.5L390.4 84.7M390.4 84.7L364.6 69.7M364.6 69.7L364.6 99.6' stroke='#151515' stroke-width='1.7' stroke-linecap='round' fill='none'/><polygon points='369.7,60.8 395.6,75.7 416.2,63.8 390.4,48.9' fill='rgb(155,155,155)' stroke='rgb(155,155,155)' stroke-width='0.6'/><path d='M369.7 60.8L395.6 75.7M395.6 75.7L416.2 63.8M416.2 63.8L390.4 48.9M390.4 48.9L369.7 60.8' stroke='#151515' stroke-width='1.7' stroke-linecap='round' fill='none'/><polygon points='307.8,269.5 333.6,254.6 333.6,230.8 307.8,245.7' fill='rgb(112,112,112)' stroke='rgb(112,112,112)' stroke-width='0.6'/><path d='M307.8 269.5L333.6 254.6M333.6 254.6L333.6 230.8M333.6 230.8L307.8 245.7M307.8 245.7L307.8 269.5' stroke='#151515' stroke-width='1.7' stroke-linecap='round' fill='none'/><polygon points='338.8,221.8 364.6,206.9 364.6,177.1 338.8,192.0' fill='rgb(112,112,112)' stroke='rgb(112,112,112)' stroke-width='0.6'/><path d='M338.8 221.8L364.6 206.9M364.6 206.9L364.6 177.1M364.6 177.1L338.8 192.0M338.8 192.0L338.8 221.8' stroke='#151515' stroke-width='1.7' stroke-linecap='round' fill='none'/><polygon points='369.7,168.1 395.6,153.2 395.6,123.4 369.7,138.3' fill='rgb(112,112,112)' stroke='rgb(112,112,112)' stroke-width='0.6'/><path d='M369.7 168.1L395.6 153.2M395.6 153.2L395.6 123.4M395.6 123.4L369.7 138.3M369.7 138.3L369.7 168.1' stroke='#151515' stroke-width='1.7' stroke-linecap='round' fill='none'/><polygon points='400.7,114.5 421.4,102.5 421.4,72.7 400.7,84.7' fill='rgb(112,112,112)' stroke='rgb(112,112,112)' stroke-width='0.6'/><path d='M400.7 114.5L421.4 102.5M421.4 102.5L421.4 72.7M421.4 72.7L400.7 84.7M400.7 84.7L400.7 114.5' stroke='#151515' stroke-width='1.7' stroke-linecap='round' fill='none'/><polygon points='333.6,254.6 359.4,269.5 359.4,245.7 333.6,230.8' fill='rgb(147,147,147)' stroke='rgb(147,147,147)' stroke-width='0.6'/><path d='M333.6 254.6L359.4 269.5M359.4 269.5L359.4 245.7M359.4 245.7L333.6 230.8M333.6 230.8L333.6 254.6' stroke='#151515' stroke-width='1.7' stroke-linecap='round' fill='none'/><polygon points='338.8,221.8 364.6,236.7 390.4,221.8 364.6,206.9' fill='rgb(155,155,155)' stroke='rgb(155,155,155)' stroke-width='0.6'/><path d='M338.8 221.8L364.6 236.7M364.6 236.7L390.4 221.8M390.4 221.8L364.6 206.9M364.6 206.9L338.8 221.8' stroke='#151515' stroke-width='1.7' stroke-linecap='round' fill='none'/><polygon points='364.6,206.9 390.4,221.8 390.4,192.0 364.6,177.1' fill='rgb(147,147,147)' stroke='rgb(147,147,147)' stroke-width='0.6'/><path d='M364.6 206.9L390.4 221.8M390.4 221.8L390.4 192.0M390.4 192.0L364.6 177.1M364.6 177.1L364.6 206.9' stroke='#151515' stroke-width='1.7' stroke-linecap='round' fill='none'/><polygon points='369.7,168.1 395.6,183.1 421.4,168.1 395.6,153.2' fill='rgb(155,155,155)' stroke='rgb(155,155,155)' stroke-width='0.6'/><path d='M369.7 168.1L395.6 183.1M395.6 183.1L421.4 168.1M421.4 168.1L395.6 153.2M395.6 153.2L369.7 168.1' stroke='#151515' stroke-width='1.7' stroke-linecap='round' fill='none'/><polygon points='395.6,153.2 421.4,168.1 421.4,138.3 395.6,123.4' fill='rgb(147,147,147)' stroke='rgb(147,147,147)' stroke-width='0.6'/><path d='M395.6 153.2L421.4 168.1M421.4 168.1L421.4 138.3M421.4 138.3L395.6 123.4M395.6 123.4L395.6 153.2' stroke='#151515' stroke-width='1.7' stroke-linecap='round' fill='none'/><polygon points='400.7,114.5 426.6,129.4 447.2,117.5 421.4,102.5' fill='rgb(155,155,155)' stroke='rgb(155,155,155)' stroke-width='0.6'/><path d='M400.7 114.5L426.6 129.4M426.6 129.4L447.2 117.5M447.2 117.5L421.4 102.5M421.4 102.5L400.7 114.5' stroke='#151515' stroke-width='1.7' stroke-linecap='round' fill='none'/><polygon points='369.7,269.5 395.6,254.6 395.6,230.8 369.7,245.7' fill='rgb(112,112,112)' stroke='rgb(112,112,112)' stroke-width='0.6'/><path d='M369.7 269.5L395.6 254.6M395.6 254.6L395.6 230.8M395.6 230.8L369.7 245.7M369.7 245.7L369.7 269.5' stroke='#151515' stroke-width='1.7' stroke-linecap='round' fill='none'/><polygon points='400.7,221.8 426.6,206.9 426.6,177.1 400.7,192.0' fill='rgb(112,112,112)' stroke='rgb(112,112,112)' stroke-width='0.6'/><path d='M400.7 221.8L426.6 206.9M426.6 206.9L426.6 177.1M426.6 177.1L400.7 192.0M400.7 192.0L400.7 221.8' stroke='#151515' stroke-width='1.7' stroke-linecap='round' fill='none'/><polygon points='431.7,168.1 452.4,156.2 452.4,126.4 431.7,138.3' fill='rgb(112,112,112)' stroke='rgb(112,112,112)' stroke-width='0.6'/><path d='M431.7 168.1L452.4 156.2M452.4 156.2L452.4 126.4M452.4 126.4L431.7 138.3M431.7 138.3L431.7 168.1' stroke='#151515' stroke-width='1.7' stroke-linecap='round' fill='none'/><polygon points='395.6,254.6 421.4,269.5 421.4,245.7 395.6,230.8' fill='rgb(147,147,147)' stroke='rgb(147,147,147)' stroke-width='0.6'/><path d='M395.6 254.6L421.4 269.5M421.4 269.5L421.4 245.7M421.4 245.7L395.6 230.8M395.6 230.8L395.6 254.6' stroke='#151515' stroke-width='1.7' stroke-linecap='round' fill='none'/><polygon points='400.7,221.8 426.6,236.7 452.4,221.8 426.6,206.9' fill='rgb(155,155,155)' stroke='rgb(155,155,155)' stroke-width='0.6'/><path d='M400.7 221.8L426.6 236.7M426.6 236.7L452.4 221.8M452.4 221.8L426.6 206.9M426.6 206.9L400.7 221.8' stroke='#151515' stroke-width='1.7' stroke-linecap='round' fill='none'/><polygon points='426.6,206.9 452.4,221.8 452.4,192.0 426.6,177.1' fill='rgb(147,147,147)' stroke='rgb(147,147,147)' stroke-width='0.6'/><path d='M426.6 206.9L452.4 221.8M452.4 221.8L452.4 192.0M452.4 192.0L426.6 177.1M426.6 177.1L426.6 206.9' stroke='#151515' stroke-width='1.7' stroke-linecap='round' fill='none'/><polygon points='431.7,168.1 457.5,183.1 478.2,171.1 452.4,156.2' fill='rgb(155,155,155)' stroke='rgb(155,155,155)' stroke-width='0.6'/><path d='M431.7 168.1L457.5 183.1M457.5 183.1L478.2 171.1M478.2 171.1L452.4 156.2M452.4 156.2L431.7 168.1' stroke='#151515' stroke-width='1.7' stroke-linecap='round' fill='none'/><polygon points='431.7,269.5 457.5,254.6 457.5,230.8 431.7,245.7' fill='rgb(112,112,112)' stroke='rgb(112,112,112)' stroke-width='0.6'/><path d='M431.7 269.5L457.5 254.6M457.5 254.6L457.5 230.8M457.5 230.8L431.7 245.7M431.7 245.7L431.7 269.5' stroke='#151515' stroke-width='1.7' stroke-linecap='round' fill='none'/><polygon points='462.7,221.8 483.4,209.9 483.4,180.1 462.7,192.0' fill='rgb(112,112,112)' stroke='rgb(112,112,112)' stroke-width='0.6'/><path d='M462.7 221.8L483.4 209.9M483.4 209.9L483.4 180.1M483.4 180.1L462.7 192.0M462.7 192.0L462.7 221.8' stroke='#151515' stroke-width='1.7' stroke-linecap='round' fill='none'/><polygon points='478.2,266.5 483.4,263.6 483.4,239.7 478.2,242.7' fill='rgb(112,112,112)' stroke='rgb(112,112,112)' stroke-width='0.6'/><path d='M478.2 266.5L483.4 263.6M483.4 263.6L483.4 239.7M478.2 242.7L478.2 266.5' stroke='#151515' stroke-width='1.7' stroke-linecap='round' fill='none'/><polygon points='457.5,254.6 478.2,266.5 478.2,242.7 457.5,230.8' fill='rgb(147,147,147)' stroke='rgb(147,147,147)' stroke-width='0.6'/><path d='M457.5 254.6L478.2 266.5M478.2 266.5L478.2 242.7M478.2 242.7L457.5 230.8M457.5 230.8L457.5 254.6' stroke='#151515' stroke-width='1.7' stroke-linecap='round' fill='none'/><polygon points='483.4,239.7 504.0,227.8 504.0,221.8 483.4,233.7' fill='rgb(112,112,112)' stroke='rgb(112,112,112)' stroke-width='0.6'/><path d='M483.4 239.7L504.0 227.8M504.0 227.8L504.0 221.8M504.0 221.8L483.4 233.7' stroke='#151515' stroke-width='1.7' stroke-linecap='round' fill='none'/><polygon points='462.7,221.8 483.4,233.7 504.0,221.8 483.4,209.9' fill='rgb(155,155,155)' stroke='rgb(155,155,155)' stroke-width='0.6'/><path d='M462.7 221.8L483.4 233.7M483.4 233.7L504.0 221.8M504.0 221.8L483.4 209.9M483.4 209.9L462.7 221.8' stroke='#151515' stroke-width='1.7' stroke-linecap='round' fill='none'/><polygon points='245.8,239.7 251.0,242.7 251.0,236.7 245.8,233.7' fill='rgb(147,147,147)' stroke='rgb(147,147,147)' stroke-width='0.6'/><polygon points='359.4,36.9 364.6,39.9 369.7,36.9 364.6,34.0' fill='rgb(155,155,155)' stroke='rgb(155,155,155)' stroke-width='0.6'/><polygon points='478.2,242.7 483.4,239.7 483.4,233.7 478.2,236.7' fill='rgb(112,112,112)' stroke='rgb(112,112,112)' stroke-width='0.6'/><polygon points='225.1,192.0 245.8,203.9 245.8,198.0 225.1,186.0' fill='rgb(147,147,147)' stroke='rgb(147,147,147)' stroke-width='0.6'/><path d='M225.1 192.0L245.8 203.9M245.8 198.0L225.1 186.0M225.1 186.0L225.1 192.0' stroke='#151515' stroke-width='1.7' stroke-linecap='round' fill='none'/><polygon points='225.1,186.0 245.8,198.0 266.4,186.0 245.8,174.1' fill='rgb(155,155,155)' stroke='rgb(155,155,155)' stroke-width='0.6'/><path d='M225.1 186.0L245.8 198.0M245.8 198.0L266.4 186.0M266.4 186.0L245.8 174.1M245.8 174.1L225.1 186.0' stroke='#151515' stroke-width='1.7' stroke-linecap='round' fill='none'/><polygon points='245.8,174.1 266.4,186.0 266.4,156.2 245.8,144.3' fill='rgb(147,147,147)' stroke='rgb(147,147,147)' stroke-width='0.6'/><path d='M245.8 174.1L266.4 186.0M266.4 186.0L266.4 156.2M266.4 156.2L245.8 144.3M245.8 144.3L245.8 174.1' stroke='#151515' stroke-width='1.7' stroke-linecap='round' fill='none'/><polygon points='251.0,135.3 271.6,147.3 297.4,132.4 276.8,120.4' fill='rgb(155,155,155)' stroke='rgb(155,155,155)' stroke-width='0.6'/><path d='M251.0 135.3L271.6 147.3M271.6 147.3L297.4 132.4M297.4 132.4L276.8 120.4M276.8 120.4L251.0 135.3' stroke='#151515' stroke-width='1.7' stroke-linecap='round' fill='none'/><polygon points='276.8,120.4 297.4,132.4 297.4,102.5 276.8,90.6' fill='rgb(147,147,147)' stroke='rgb(147,147,147)' stroke-width='0.6'/><path d='M276.8 120.4L297.4 132.4M297.4 132.4L297.4 102.5M297.4 102.5L276.8 90.6M276.8 90.6L276.8 120.4' stroke='#151515' stroke-width='1.7' stroke-linecap='round' fill='none'/><polygon points='281.9,81.7 302.6,93.6 328.4,78.7 307.8,66.8' fill='rgb(155,155,155)' stroke='rgb(155,155,155)' stroke-width='0.6'/><path d='M281.9 81.7L302.6 93.6M302.6 93.6L328.4 78.7M328.4 78.7L307.8 66.8M307.8 66.8L281.9 81.7' stroke='#151515' stroke-width='1.7' stroke-linecap='round' fill='none'/><polygon points='307.8,66.8 328.4,78.7 328.4,54.8 307.8,42.9' fill='rgb(147,147,147)' stroke='rgb(147,147,147)' stroke-width='0.6'/><path d='M307.8 66.8L328.4 78.7M328.4 78.7L328.4 54.8M328.4 54.8L307.8 42.9M307.8 42.9L307.8 66.8' stroke='#151515' stroke-width='1.7' stroke-linecap='round' fill='none'/><polygon points='307.8,42.9 328.4,54.8 333.6,51.9 312.9,39.9' fill='rgb(155,155,155)' stroke='rgb(155,155,155)' stroke-width='0.6'/><path d='M307.8 42.9L328.4 54.8M333.6 51.9L312.9 39.9M312.9 39.9L307.8 42.9' stroke='#151515' stroke-width='1.7' stroke-linecap='round' fill='none'/><polygon points='251.0,236.7 271.6,224.8 271.6,195.0 251.0,206.9' fill='rgb(112,112,112)' stroke='rgb(112,112,112)' stroke-width='0.6'/><path d='M251.0 236.7L271.6 224.8M271.6 224.8L271.6 195.0M271.6 195.0L251.0 206.9M251.0 206.9L251.0 236.7' stroke='#151515' stroke-width='1.7' stroke-linecap='round' fill='none'/><polygon points='245.8,233.7 251.0,236.7 251.0,206.9 245.8,203.9' fill='rgb(147,147,147)' stroke='rgb(147,147,147)' stroke-width='0.6'/><path d='M251.0 236.7L251.0 206.9M245.8 203.9L245.8 233.7' stroke='#151515' stroke-width='1.7' stroke-linecap='round' fill='none'/><polygon points='276.8,186.0 302.6,171.1 302.6,141.3 276.8,156.2' fill='rgb(112,112,112)' stroke='rgb(112,112,112)' stroke-width='0.6'/><path d='M276.8 186.0L302.6 171.1M302.6 171.1L302.6 141.3M302.6 141.3L276.8 156.2M276.8 156.2L276.8 186.0' stroke='#151515' stroke-width='1.7' stroke-linecap='round' fill='none'/><polygon points='307.8,132.4 333.6,117.5 333.6,87.6 307.8,102.5' fill='rgb(112,112,112)' stroke='rgb(112,112,112)' stroke-width='0.6'/><path d='M307.8 132.4L333.6 117.5M333.6 117.5L333.6 87.6M333.6 87.6L307.8 102.5M307.8 102.5L307.8 132.4' stroke='#151515' stroke-width='1.7' stroke-linecap='round' fill='none'/><polygon points='338.8,78.7 364.6,63.8 364.6,39.9 338.8,54.8' fill='rgb(112,112,112)' stroke='rgb(112,112,112)' stroke-width='0.6'/><path d='M338.8 78.7L364.6 63.8M364.6 63.8L364.6 39.9M364.6 39.9L338.8 54.8M338.8 54.8L338.8 78.7' stroke='#151515' stroke-width='1.7' stroke-linecap='round' fill='none'/><polygon points='333.6,51.9 338.8,54.8 364.6,39.9 359.4,36.9' fill='rgb(155,155,155)' stroke='rgb(155,155,155)' stroke-width='0.6'/><path d='M338.8 54.8L364.6 39.9M359.4 36.9L333.6 51.9' stroke='#151515' stroke-width='1.7' stroke-linecap='round' fill='none'/><polygon points='251.0,242.7 276.8,257.6 276.8,251.6 251.0,236.7' fill='rgb(147,147,147)' stroke='rgb(147,147,147)' stroke-width='0.6'/><path d='M251.0 242.7L276.8 257.6M276.8 251.6L251.0 236.7' stroke='#151515' stroke-width='1.7' stroke-linecap='round' fill='none'/><polygon points='251.0,236.7 276.8,251.6 297.4,239.7 271.6,224.8' fill='rgb(155,155,155)' stroke='rgb(155,155,155)' stroke-width='0.6'/><path d='M251.0 236.7L276.8 251.6M276.8 251.6L297.4 239.7M297.4 239.7L271.6 224.8M271.6 224.8L251.0 236.7' stroke='#151515' stroke-width='1.7' stroke-linecap='round' fill='none'/><polygon points='271.6,224.8 297.4,239.7 297.4,209.9 271.6,195.0' fill='rgb(147,147,147)' stroke='rgb(147,147,147)' stroke-width='0.6'/><path d='M271.6 224.8L297.4 239.7M297.4 239.7L297.4 209.9M297.4 209.9L271.6 195.0M271.6 195.0L271.6 224.8' stroke='#151515' stroke-width='1.7' stroke-linecap='round' fill='none'/><polygon points='276.8,186.0 302.6,200.9 328.4,186.0 302.6,171.1' fill='rgb(155,155,155)' stroke='rgb(155,155,155)' stroke-width='0.6'/><path d='M276.8 186.0L302.6 200.9M302.6 200.9L328.4 186.0M328.4 186.0L302.6 171.1M302.6 171.1L276.8 186.0' stroke='#151515' stroke-width='1.7' stroke-linecap='round' fill='none'/><polygon points='302.6,171.1 328.4,186.0 328.4,156.2 302.6,141.3' fill='rgb(147,147,147)' stroke='rgb(147,147,147)' stroke-width='0.6'/><path d='M302.6 171.1L328.4 186.0M328.4 186.0L328.4 156.2M328.4 156.2L302.6 141.3M302.6 141.3L302.6 171.1' stroke='#151515' stroke-width='1.7' stroke-linecap='round' fill='none'/><polygon points='307.8,132.4 333.6,147.3 359.4,132.4 333.6,117.5' fill='rgb(155,155,155)' stroke='rgb(155,155,155)' stroke-width='0.6'/><path d='M307.8 132.4L333.6 147.3M333.6 147.3L359.4 132.4M359.4 132.4L333.6 117.5M333.6 117.5L307.8 132.4' stroke='#151515' stroke-width='1.7' stroke-linecap='round' fill='none'/><polygon points='333.6,117.5 359.4,132.4 359.4,102.5 333.6,87.6' fill='rgb(147,147,147)' stroke='rgb(147,147,147)' stroke-width='0.6'/><path d='M333.6 117.5L359.4 132.4M359.4 132.4L359.4 102.5M359.4 102.5L333.6 87.6M333.6 87.6L333.6 117.5' stroke='#151515' stroke-width='1.7' stroke-linecap='round' fill='none'/><polygon points='338.8,78.7 364.6,93.6 390.4,78.7 364.6,63.8' fill='rgb(155,155,155)' stroke='rgb(155,155,155)' stroke-width='0.6'/><path d='M338.8 78.7L364.6 93.6M364.6 93.6L390.4 78.7M390.4 78.7L364.6 63.8M364.6 63.8L338.8 78.7' stroke='#151515' stroke-width='1.7' stroke-linecap='round' fill='none'/><polygon points='364.6,63.8 390.4,78.7 390.4,54.8 364.6,39.9' fill='rgb(147,147,147)' stroke='rgb(147,147,147)' stroke-width='0.6'/><path d='M364.6 63.8L390.4 78.7M390.4 78.7L390.4 54.8M390.4 54.8L364.6 39.9M364.6 39.9L364.6 63.8' stroke='#151515' stroke-width='1.7' stroke-linecap='round' fill='none'/><polygon points='364.6,39.9 390.4,54.8 395.6,51.9 369.7,36.9' fill='rgb(155,155,155)' stroke='rgb(155,155,155)' stroke-width='0.6'/><path d='M364.6 39.9L390.4 54.8M395.6 51.9L369.7 36.9' stroke='#151515' stroke-width='1.7' stroke-linecap='round' fill='none'/><polygon points='281.9,284.4 302.6,272.5 302.6,248.7 281.9,260.6' fill='rgb(112,112,112)' stroke='rgb(112,112,112)' stroke-width='0.6'/><path d='M281.9 284.4L302.6 272.5M302.6 272.5L302.6 248.7M302.6 248.7L281.9 260.6M281.9 260.6L281.9 284.4' stroke='#151515' stroke-width='1.7' stroke-linecap='round' fill='none'/><polygon points='276.8,281.5 281.9,284.4 281.9,260.6 276.8,257.6' fill='rgb(147,147,147)' stroke='rgb(147,147,147)' stroke-width='0.6'/><path d='M276.8 281.5L281.9 284.4M281.9 284.4L281.9 260.6M276.8 257.6L276.8 281.5' stroke='#151515' stroke-width='1.7' stroke-linecap='round' fill='none'/><polygon points='307.8,239.7 333.6,224.8 333.6,195.0 307.8,209.9' fill='rgb(112,112,112)' stroke='rgb(112,112,112)' stroke-width='0.6'/><path d='M307.8 239.7L333.6 224.8M333.6 224.8L333.6 195.0M333.6 195.0L307.8 209.9M307.8 209.9L307.8 239.7' stroke='#151515' stroke-width='1.7' stroke-linecap='round' fill='none'/><polygon points='338.8,186.0 364.6,171.1 364.6,141.3 338.8,156.2' fill='rgb(112,112,112)' stroke='rgb(112,112,112)' stroke-width='0.6'/><path d='M338.8 186.0L364.6 171.1M364.6 171.1L364.6 141.3M364.6 141.3L338.8 156.2M338.8 156.2L338.8 186.0' stroke='#151515' stroke-width='1.7' stroke-linecap='round' fill='none'/><polygon points='369.7,132.4 395.6,117.5 395.6,87.6 369.7,102.5' fill='rgb(112,112,112)' stroke='rgb(112,112,112)' stroke-width='0.6'/><path d='M369.7 132.4L395.6 117.5M395.6 117.5L395.6 87.6M395.6 87.6L369.7 102.5M369.7 102.5L369.7 132.4' stroke='#151515' stroke-width='1.7' stroke-linecap='round' fill='none'/><polygon points='400.7,78.7 421.4,66.8 421.4,42.9 400.7,54.8' fill='rgb(112,112,112)' stroke='rgb(112,112,112)' stroke-width='0.6'/><path d='M400.7 78.7L421.4 66.8M421.4 66.8L421.4 42.9M421.4 42.9L400.7 54.8M400.7 54.8L400.7 78.7' stroke='#151515' stroke-width='1.7' stroke-linecap='round' fill='none'/><polygon points='395.6,51.9 400.7,54.8 421.4,42.9 416.2,39.9' fill='rgb(155,155,155)' stroke='rgb(155,155,155)' stroke-width='0.6'/><path d='M400.7 54.8L421.4 42.9M421.4 42.9L416.2 39.9M416.2 39.9L395.6 51.9' stroke='#151515' stroke-width='1.7' stroke-linecap='round' fill='none'/><polygon points='302.6,272.5 328.4,287.4 328.4,263.6 302.6,248.7' fill='rgb(147,147,147)' stroke='rgb(147,147,147)' stroke-width='0.6'/><path d='M302.6 272.5L328.4 287.4M328.4 287.4L328.4 263.6M328.4 263.6L302.6 248.7M302.6 248.7L302.6 272.5' stroke='#151515' stroke-width='1.7' stroke-linecap='round' fill='none'/><polygon points='307.8,239.7 333.6,254.6 359.4,239.7 333.6,224.8' fill='rgb(155,155,155)' stroke='rgb(155,155,155)' stroke-width='0.6'/><path d='M307.8 239.7L333.6 254.6M333.6 254.6L359.4 239.7M359.4 239.7L333.6 224.8M333.6 224.8L307.8 239.7' stroke='#151515' stroke-width='1.7' stroke-linecap='round' fill='none'/><polygon points='333.6,224.8 359.4,239.7 359.4,209.9 333.6,195.0' fill='rgb(147,147,147)' stroke='rgb(147,147,147)' stroke-width='0.6'/><path d='M333.6 224.8L359.4 239.7M359.4 239.7L359.4 209.9M359.4 209.9L333.6 195.0M333.6 195.0L333.6 224.8' stroke='#151515' stroke-width='1.7' stroke-linecap='round' fill='none'/><polygon points='338.8,186.0 364.6,200.9 390.4,186.0 364.6,171.1' fill='rgb(155,155,155)' stroke='rgb(155,155,155)' stroke-width='0.6'/><path d='M338.8 186.0L364.6 200.9M364.6 200.9L390.4 186.0M390.4 186.0L364.6 171.1M364.6 171.1L338.8 186.0' stroke='#151515' stroke-width='1.7' stroke-linecap='round' fill='none'/><polygon points='364.6,171.1 390.4,186.0 390.4,156.2 364.6,141.3' fill='rgb(147,147,147)' stroke='rgb(147,147,147)' stroke-width='0.6'/><path d='M364.6 171.1L390.4 186.0M390.4 186.0L390.4 156.2M390.4 156.2L364.6 141.3M364.6 141.3L364.6 171.1' stroke='#151515' stroke-width='1.7' stroke-linecap='round' fill='none'/><polygon points='369.7,132.4 395.6,147.3 421.4,132.4 395.6,117.5' fill='rgb(155,155,155)' stroke='rgb(155,155,155)' stroke-width='0.6'/><path d='M369.7 132.4L395.6 147.3M395.6 147.3L421.4 132.4M421.4 132.4L395.6 117.5M395.6 117.5L369.7 132.4' stroke='#151515' stroke-width='1.7' stroke-linecap='round' fill='none'/><polygon points='395.6,117.5 421.4,132.4 421.4,102.5 395.6,87.6' fill='rgb(147,147,147)' stroke='rgb(147,147,147)' stroke-width='0.6'/><path d='M395.6 117.5L421.4 132.4M421.4 132.4L421.4 102.5M421.4 102.5L395.6 87.6M395.6 87.6L395.6 117.5' stroke='#151515' stroke-width='1.7' stroke-linecap='round' fill='none'/><polygon points='400.7,78.7 426.6,93.6 447.2,81.7 421.4,66.8' fill='rgb(155,155,155)' stroke='rgb(155,155,155)' stroke-width='0.6'/><path d='M400.7 78.7L426.6 93.6M426.6 93.6L447.2 81.7M447.2 81.7L421.4 66.8M421.4 66.8L400.7 78.7' stroke='#151515' stroke-width='1.7' stroke-linecap='round' fill='none'/><polygon points='338.8,287.4 364.6,272.5 364.6,248.7 338.8,263.6' fill='rgb(112,112,112)' stroke='rgb(112,112,112)' stroke-width='0.6'/><path d='M338.8 287.4L364.6 272.5M364.6 272.5L364.6 248.7M364.6 248.7L338.8 263.6M338.8 263.6L338.8 287.4' stroke='#151515' stroke-width='1.7' stroke-linecap='round' fill='none'/><polygon points='369.7,239.7 395.6,224.8 395.6,195.0 369.7,209.9' fill='rgb(112,112,112)' stroke='rgb(112,112,112)' stroke-width='0.6'/><path d='M369.7 239.7L395.6 224.8M395.6 224.8L395.6 195.0M395.6 195.0L369.7 209.9M369.7 209.9L369.7 239.7' stroke='#151515' stroke-width='1.7' stroke-linecap='round' fill='none'/><polygon points='400.7,186.0 426.6,171.1 426.6,141.3 400.7,156.2' fill='rgb(112,112,112)' stroke='rgb(112,112,112)' stroke-width='0.6'/><path d='M400.7 186.0L426.6 171.1M426.6 171.1L426.6 141.3M426.6 141.3L400.7 156.2M400.7 156.2L400.7 186.0' stroke='#151515' stroke-width='1.7' stroke-linecap='round' fill='none'/><polygon points='431.7,132.4 452.4,120.4 452.4,90.6 431.7,102.5' fill='rgb(112,112,112)' stroke='rgb(112,112,112)' stroke-width='0.6'/><path d='M431.7 132.4L452.4 120.4M452.4 120.4L452.4 90.6M452.4 90.6L431.7 102.5M431.7 102.5L431.7 132.4' stroke='#151515' stroke-width='1.7' stroke-linecap='round' fill='none'/><polygon points='364.6,272.5 390.4,287.4 390.4,263.6 364.6,248.7' fill='rgb(147,147,147)' stroke='rgb(147,147,147)' stroke-width='0.6'/><path d='M364.6 272.5L390.4 287.4M390.4 287.4L390.4 263.6M390.4 263.6L364.6 248.7M364.6 248.7L364.6 272.5' stroke='#151515' stroke-width='1.7' stroke-linecap='round' fill='none'/><polygon points='369.7,239.7 395.6,254.6 421.4,239.7 395.6,224.8' fill='rgb(155,155,155)' stroke='rgb(155,155,155)' stroke-width='0.6'/><path d='M369.7 239.7L395.6 254.6M395.6 254.6L421.4 239.7M421.4 239.7L395.6 224.8M395.6 224.8L369.7 239.7' stroke='#151515' stroke-width='1.7' stroke-linecap='round' fill='none'/><polygon points='395.6,224.8 421.4,239.7 421.4,209.9 395.6,195.0' fill='rgb(147,147,147)' stroke='rgb(147,147,147)' stroke-width='0.6'/><path d='M395.6 224.8L421.4 239.7M421.4 239.7L421.4 209.9M421.4 209.9L395.6 195.0M395.6 195.0L395.6 224.8' stroke='#151515' stroke-width='1.7' stroke-linecap='round' fill='none'/><polygon points='400.7,186.0 426.6,200.9 452.4,186.0 426.6,171.1' fill='rgb(155,155,155)' stroke='rgb(155,155,155)' stroke-width='0.6'/><path d='M400.7 186.0L426.6 200.9M426.6 200.9L452.4 186.0M452.4 186.0L426.6 171.1M426.6 171.1L400.7 186.0' stroke='#151515' stroke-width='1.7' stroke-linecap='round' fill='none'/><polygon points='426.6,171.1 452.4,186.0 452.4,156.2 426.6,141.3' fill='rgb(147,147,147)' stroke='rgb(147,147,147)' stroke-width='0.6'/><path d='M426.6 171.1L452.4 186.0M452.4 186.0L452.4 156.2M452.4 156.2L426.6 141.3M426.6 141.3L426.6 171.1' stroke='#151515' stroke-width='1.7' stroke-linecap='round' fill='none'/><polygon points='431.7,132.4 457.5,147.3 478.2,135.3 452.4,120.4' fill='rgb(155,155,155)' stroke='rgb(155,155,155)' stroke-width='0.6'/><path d='M431.7 132.4L457.5 147.3M457.5 147.3L478.2 135.3M478.2 135.3L452.4 120.4M452.4 120.4L431.7 132.4' stroke='#151515' stroke-width='1.7' stroke-linecap='round' fill='none'/><polygon points='400.7,287.4 426.6,272.5 426.6,248.7 400.7,263.6' fill='rgb(112,112,112)' stroke='rgb(112,112,112)' stroke-width='0.6'/><path d='M400.7 287.4L426.6 272.5M426.6 272.5L426.6 248.7M426.6 248.7L400.7 263.6M400.7 263.6L400.7 287.4' stroke='#151515' stroke-width='1.7' stroke-linecap='round' fill='none'/><polygon points='431.7,239.7 457.5,224.8 457.5,195.0 431.7,209.9' fill='rgb(112,112,112)' stroke='rgb(112,112,112)' stroke-width='0.6'/><path d='M431.7 239.7L457.5 224.8M457.5 224.8L457.5 195.0M457.5 195.0L431.7 209.9M431.7 209.9L431.7 239.7' stroke='#151515' stroke-width='1.7' stroke-linecap='round' fill='none'/><polygon points='462.7,186.0 483.4,174.1 483.4,144.3 462.7,156.2' fill='rgb(112,112,112)' stroke='rgb(112,112,112)' stroke-width='0.6'/><path d='M462.7 186.0L483.4 174.1M483.4 174.1L483.4 144.3M483.4 144.3L462.7 156.2M462.7 156.2L462.7 186.0' stroke='#151515' stroke-width='1.7' stroke-linecap='round' fill='none'/><polygon points='447.2,284.4 452.4,281.5 452.4,257.6 447.2,260.6' fill='rgb(112,112,112)' stroke='rgb(112,112,112)' stroke-width='0.6'/><path d='M447.2 284.4L452.4 281.5M452.4 281.5L452.4 257.6M447.2 260.6L447.2 284.4' stroke='#151515' stroke-width='1.7' stroke-linecap='round' fill='none'/><polygon points='426.6,272.5 447.2,284.4 447.2,260.6 426.6,248.7' fill='rgb(147,147,147)' stroke='rgb(147,147,147)' stroke-width='0.6'/><path d='M426.6 272.5L447.2 284.4M447.2 284.4L447.2 260.6M447.2 260.6L426.6 248.7M426.6 248.7L426.6 272.5' stroke='#151515' stroke-width='1.7' stroke-linecap='round' fill='none'/><polygon points='452.4,257.6 478.2,242.7 478.2,236.7 452.4,251.6' fill='rgb(112,112,112)' stroke='rgb(112,112,112)' stroke-width='0.6'/><path d='M452.4 257.6L478.2 242.7M478.2 236.7L452.4 251.6' stroke='#151515' stroke-width='1.7' stroke-linecap='round' fill='none'/><polygon points='431.7,239.7 452.4,251.6 478.2,236.7 457.5,224.8' fill='rgb(155,155,155)' stroke='rgb(155,155,155)' stroke-width='0.6'/><path d='M431.7 239.7L452.4 251.6M452.4 251.6L478.2 236.7M478.2 236.7L457.5 224.8M457.5 224.8L431.7 239.7' stroke='#151515' stroke-width='1.7' stroke-linecap='round' fill='none'/><polygon points='478.2,236.7 483.4,233.7 483.4,203.9 478.2,206.9' fill='rgb(112,112,112)' stroke='rgb(112,112,112)' stroke-width='0.6'/><path d='M483.4 233.7L483.4 203.9M478.2 206.9L478.2 236.7' stroke='#151515' stroke-width='1.7' stroke-linecap='round' fill='none'/><polygon points='457.5,224.8 478.2,236.7 478.2,206.9 457.5,195.0' fill='rgb(147,147,147)' stroke='rgb(147,147,147)' stroke-width='0.6'/><path d='M457.5 224.8L478.2 236.7M478.2 236.7L478.2 206.9M478.2 206.9L457.5 195.0M457.5 195.0L457.5 224.8' stroke='#151515' stroke-width='1.7' stroke-linecap='round' fill='none'/><polygon points='483.4,203.9 504.0,192.0 504.0,186.0 483.4,198.0' fill='rgb(112,112,112)' stroke='rgb(112,112,112)' stroke-width='0.6'/><path d='M483.4 203.9L504.0 192.0M504.0 192.0L504.0 186.0M504.0 186.0L483.4 198.0' stroke='#151515' stroke-width='1.7' stroke-linecap='round' fill='none'/><polygon points='462.7,186.0 483.4,198.0 504.0,186.0 483.4,174.1' fill='rgb(155,155,155)' stroke='rgb(155,155,155)' stroke-width='0.6'/><path d='M462.7 186.0L483.4 198.0M483.4 198.0L504.0 186.0M504.0 186.0L483.4 174.1M483.4 174.1L462.7 186.0' stroke='#151515' stroke-width='1.7' stroke-linecap='round' fill='none'/><polygon points='245.8,203.9 251.0,206.9 251.0,200.9 245.8,198.0' fill='rgb(147,147,147)' stroke='rgb(147,147,147)' stroke-width='0.6'/><polygon points='328.4,54.8 333.6,57.8 338.8,54.8 333.6,51.9' fill='rgb(155,155,155)' stroke='rgb(155,155,155)' stroke-width='0.6'/><polygon points='276.8,257.6 281.9,260.6 281.9,254.6 276.8,251.6' fill='rgb(147,147,147)' stroke='rgb(147,147,147)' stroke-width='0.6'/><polygon points='390.4,54.8 395.6,57.8 400.7,54.8 395.6,51.9' fill='rgb(155,155,155)' stroke='rgb(155,155,155)' stroke-width='0.6'/><polygon points='447.2,260.6 452.4,257.6 452.4,251.6 447.2,254.6' fill='rgb(112,112,112)' stroke='rgb(112,112,112)' stroke-width='0.6'/><polygon points='478.2,206.9 483.4,203.9 483.4,198.0 478.2,200.9' fill='rgb(112,112,112)' stroke='rgb(112,112,112)' stroke-width='0.6'/><polygon points='225.1,156.2 245.8,168.1 245.8,162.2 225.1,150.3' fill='rgb(147,147,147)' stroke='rgb(147,147,147)' stroke-width='0.6'/><path d='M225.1 156.2L245.8 168.1M245.8 162.2L225.1 150.3M225.1 150.3L225.1 156.2' stroke='#151515' stroke-width='1.7' stroke-linecap='round' fill='none'/><polygon points='225.1,150.3 245.8,162.2 266.4,150.3 245.8,138.3' fill='rgb(155,155,155)' stroke='rgb(155,155,155)' stroke-width='0.6'/><path d='M225.1 150.3L245.8 162.2M245.8 162.2L266.4 150.3M266.4 150.3L245.8 138.3M245.8 138.3L225.1 150.3' stroke='#151515' stroke-width='1.7' stroke-linecap='round' fill='none'/><polygon points='245.8,138.3 266.4,150.3 266.4,120.4 245.8,108.5' fill='rgb(147,147,147)' stroke='rgb(147,147,147)' stroke-width='0.6'/><path d='M245.8 138.3L266.4 150.3M266.4 150.3L266.4 120.4M266.4 120.4L245.8 108.5M245.8 108.5L245.8 138.3' stroke='#151515' stroke-width='1.7' stroke-linecap='round' fill='none'/><polygon points='251.0,99.6 271.6,111.5 297.4,96.6 276.8,84.7' fill='rgb(155,155,155)' stroke='rgb(155,155,155)' stroke-width='0.6'/><path d='M251.0 99.6L271.6 111.5M271.6 111.5L297.4 96.6M297.4 96.6L276.8 84.7M276.8 84.7L251.0 99.6' stroke='#151515' stroke-width='1.7' stroke-linecap='round' fill='none'/><polygon points='276.8,84.7 297.4,96.6 297.4,72.7 276.8,60.8' fill='rgb(147,147,147)' stroke='rgb(147,147,147)' stroke-width='0.6'/><path d='M276.8 84.7L297.4 96.6M297.4 96.6L297.4 72.7M297.4 72.7L276.8 60.8M276.8 60.8L276.8 84.7' stroke='#151515' stroke-width='1.7' stroke-linecap='round' fill='none'/><polygon points='276.8,60.8 297.4,72.7 302.6,69.7 281.9,57.8' fill='rgb(155,155,155)' stroke='rgb(155,155,155)' stroke-width='0.6'/><path d='M276.8 60.8L297.4 72.7M302.6 69.7L281.9 57.8M281.9 57.8L276.8 60.8' stroke='#151515' stroke-width='1.7' stroke-linecap='round' fill='none'/><polygon points='251.0,200.9 271.6,189.0 271.6,159.2 251.0,171.1' fill='rgb(112,112,112)' stroke='rgb(112,112,112)' stroke-width='0.6'/><path d='M251.0 200.9L271.6 189.0M271.6 189.0L271.6 159.2M271.6 159.2L251.0 171.1M251.0 171.1L251.0 200.9' stroke='#151515' stroke-width='1.7' stroke-linecap='round' fill='none'/><polygon points='245.8,198.0 251.0,200.9 251.0,171.1 245.8,168.1' fill='rgb(147,147,147)' stroke='rgb(147,147,147)' stroke-width='0.6'/><path d='M251.0 200.9L251.0 171.1M245.8 168.1L245.8 198.0' stroke='#151515' stroke-width='1.7' stroke-linecap='round' fill='none'/><polygon points='276.8,150.3 302.6,135.3 302.6,105.5 276.8,120.4' fill='rgb(112,112,112)' stroke='rgb(112,112,112)' stroke-width='0.6'/><path d='M276.8 150.3L302.6 135.3M302.6 135.3L302.6 105.5M302.6 105.5L276.8 120.4M276.8 120.4L276.8 150.3' stroke='#151515' stroke-width='1.7' stroke-linecap='round' fill='none'/><polygon points='307.8,96.6 333.6,81.7 333.6,57.8 307.8,72.7' fill='rgb(112,112,112)' stroke='rgb(112,112,112)' stroke-width='0.6'/><path d='M307.8 96.6L333.6 81.7M333.6 81.7L333.6 57.8M333.6 57.8L307.8 72.7M307.8 72.7L307.8 96.6' stroke='#151515' stroke-width='1.7' stroke-linecap='round' fill='none'/><polygon points='302.6,69.7 307.8,72.7 333.6,57.8 328.4,54.8' fill='rgb(155,155,155)' stroke='rgb(155,155,155)' stroke-width='0.6'/><path d='M307.8 72.7L333.6 57.8M328.4 54.8L302.6 69.7' stroke='#151515' stroke-width='1.7' stroke-linecap='round' fill='none'/><polygon points='251.0,206.9 276.8,221.8 276.8,215.9 251.0,200.9' fill='rgb(147,147,147)' stroke='rgb(147,147,147)' stroke-width='0.6'/><path d='M251.0 206.9L276.8 221.8M276.8 215.9L251.0 200.9' stroke='#151515' stroke-width='1.7' stroke-linecap='round' fill='none'/><polygon points='251.0,200.9 276.8,215.9 297.4,203.9 271.6,189.0' fill='rgb(155,155,155)' stroke='rgb(155,155,155)' stroke-width='0.6'/><path d='M251.0 200.9L276.8 215.9M276.8 215.9L297.4 203.9M297.4 203.9L271.6 189.0M271.6 189.0L251.0 200.9' stroke='#151515' stroke-width='1.7' stroke-linecap='round' fill='none'/><polygon points='271.6,189.0 297.4,203.9 297.4,174.1 271.6,159.2' fill='rgb(147,147,147)' stroke='rgb(147,147,147)' stroke-width='0.6'/><path d='M271.6 189.0L297.4 203.9M297.4 203.9L297.4 174.1M297.4 174.1L271.6 159.2M271.6 159.2L271.6 189.0' stroke='#151515' stroke-width='1.7' stroke-linecap='round' fill='none'/><polygon points='276.8,150.3 302.6,165.2 328.4,150.3 302.6,135.3' fill='rgb(155,155,155)' stroke='rgb(155,155,155)' stroke-width='0.6'/><path d='M276.8 150.3L302.6 165.2M302.6 165.2L328.4 150.3M328.4 150.3L302.6 135.3M302.6 135.3L276.8 150.3' stroke='#151515' stroke-width='1.7' stroke-linecap='round' fill='none'/><polygon points='302.6,135.3 328.4,150.3 328.4,120.4 302.6,105.5' fill='rgb(147,147,147)' stroke='rgb(147,147,147)' stroke-width='0.6'/><path d='M302.6 135.3L328.4 150.3M328.4 150.3L328.4 120.4M328.4 120.4L302.6 105.5M302.6 105.5L302.6 135.3' stroke='#151515' stroke-width='1.7' stroke-linecap='round' fill='none'/><polygon points='307.8,96.6 333.6,111.5 359.4,96.6 333.6,81.7' fill='rgb(155,155,155)' stroke='rgb(155,155,155)' stroke-width='0.6'/><path d='M307.8 96.6L333.6 111.5M333.6 111.5L359.4 96.6M359.4 96.6L333.6 81.7M333.6 81.7L307.8 96.6' stroke='#151515' stroke-width='1.7' stroke-linecap='round' fill='none'/><polygon points='333.6,81.7 359.4,96.6 359.4,72.7 333.6,57.8' fill='rgb(147,147,147)' stroke='rgb(147,147,147)' stroke-width='0.6'/><path d='M333.6 81.7L359.4 96.6M359.4 96.6L359.4 72.7M359.4 72.7L333.6 57.8M333.6 57.8L333.6 81.7' stroke='#151515' stroke-width='1.7' stroke-linecap='round' fill='none'/><polygon points='333.6,57.8 359.4,72.7 364.6,69.7 338.8,54.8' fill='rgb(155,155,155)' stroke='rgb(155,155,155)' stroke-width='0.6'/><path d='M333.6 57.8L359.4 72.7M364.6 69.7L338.8 54.8' stroke='#151515' stroke-width='1.7' stroke-linecap='round' fill='none'/><polygon points='281.9,254.6 302.6,242.7 302.6,212.9 281.9,224.8' fill='rgb(112,112,112)' stroke='rgb(112,112,112)' stroke-width='0.6'/><path d='M281.9 254.6L302.6 242.7M302.6 242.7L302.6 212.9M302.6 212.9L281.9 224.8M281.9 224.8L281.9 254.6' stroke='#151515' stroke-width='1.7' stroke-linecap='round' fill='none'/><polygon points='276.8,251.6 281.9,254.6 281.9,224.8 276.8,221.8' fill='rgb(147,147,147)' stroke='rgb(147,147,147)' stroke-width='0.6'/><path d='M281.9 254.6L281.9 224.8M276.8 221.8L276.8 251.6' stroke='#151515' stroke-width='1.7' stroke-linecap='round' fill='none'/><polygon points='307.8,203.9 333.6,189.0 333.6,159.2 307.8,174.1' fill='rgb(112,112,112)' stroke='rgb(112,112,112)' stroke-width='0.6'/><path d='M307.8 203.9L333.6 189.0M333.6 189.0L333.6 159.2M333.6 159.2L307.8 174.1M307.8 174.1L307.8 203.9' stroke='#151515' stroke-width='1.7' stroke-linecap='round' fill='none'/><polygon points='338.8,150.3 364.6,135.3 364.6,105.5 338.8,120.4' fill='rgb(112,112,112)' stroke='rgb(112,112,112)' stroke-width='0.6'/><path d='M338.8 150.3L364.6 135.3M364.6 135.3L364.6 105.5M364.6 105.5L338.8 120.4M338.8 120.4L338.8 150.3' stroke='#151515' stroke-width='1.7' stroke-linecap='round' fill='none'/><polygon points='369.7,96.6 395.6,81.7 395.6,57.8 369.7,72.7' fill='rgb(112,112,112)' stroke='rgb(112,112,112)' stroke-width='0.6'/><path d='M369.7 96.6L395.6 81.7M395.6 81.7L395.6 57.8M395.6 57.8L369.7 72.7M369.7 72.7L369.7 96.6' stroke='#151515' stroke-width='1.7' stroke-linecap='round' fill='none'/><polygon points='364.6,69.7 369.7,72.7 395.6,57.8 390.4,54.8' fill='rgb(155,155,155)' stroke='rgb(155,155,155)' stroke-width='0.6'/><path d='M369.7 72.7L395.6 57.8M390.4 54.8L364.6 69.7' stroke='#151515' stroke-width='1.7' stroke-linecap='round' fill='none'/><polygon points='281.9,260.6 307.8,275.5 307.8,269.5 281.9,254.6' fill='rgb(147,147,147)' stroke='rgb(147,147,147)' stroke-width='0.6'/><path d='M281.9 260.6L307.8 275.5M307.8 269.5L281.9 254.6' stroke='#151515' stroke-width='1.7' stroke-linecap='round' fill='none'/><polygon points='281.9,254.6 307.8,269.5 328.4,257.6 302.6,242.7' fill='rgb(155,155,155)' stroke='rgb(155,155,155)' stroke-width='0.6'/><path d='M281.9 254.6L307.8 269.5M307.8 269.5L328.4 257.6M328.4 257.6L302.6 242.7M302.6 242.7L281.9 254.6' stroke='#151515' stroke-width='1.7' stroke-linecap='round' fill='none'/><polygon points='302.6,242.7 328.4,257.6 328.4,227.8 302.6,212.9' fill='rgb(147,147,147)' stroke='rgb(147,147,147)' stroke-width='0.6'/><path d='M302.6 242.7L328.4 257.6M328.4 257.6L328.4 227.8M328.4 227.8L302.6 212.9M302.6 212.9L302.6 242.7' stroke='#151515' stroke-width='1.7' stroke-linecap='round' fill='none'/><polygon points='307.8,203.9 333.6,218.8 359.4,203.9 333.6,189.0' fill='rgb(155,155,155)' stroke='rgb(155,155,155)' stroke-width='0.6'/><path d='M307.8 203.9L333.6 218.8M333.6 218.8L359.4 203.9M359.4 203.9L333.6 189.0M333.6 189.0L307.8 203.9' stroke='#151515' stroke-width='1.7' stroke-linecap='round' fill='none'/><polygon points='333.6,189.0 359.4,203.9 359.4,174.1 333.6,159.2' fill='rgb(147,147,147)' stroke='rgb(147,147,147)' stroke-width='0.6'/><path d='M333.6 189.0L359.4 203.9M359.4 203.9L359.4 174.1M359.4 174.1L333.6 159.2M333.6 159.2L333.6 189.0' stroke='#151515' stroke-width='1.7' stroke-linecap='round' fill='none'/><polygon points='338.8,150.3 364.6,165.2 390.4,150.3 364.6,135.3' fill='rgb(155,155,155)' stroke='rgb(155,155,155)' stroke-width='0.6'/><path d='M338.8 150.3L364.6 165.2M364.6 165.2L390.4 150.3M390.4 150.3L364.6 135.3M364.6 135.3L338.8 150.3' stroke='#151515' stroke-width='1.7' stroke-linecap='round' fill='none'/><polygon points='364.6,135.3 390.4,150.3 390.4,120.4 364.6,105.5' fill='rgb(147,147,147)' stroke='rgb(147,147,147)' stroke-width='0.6'/><path d='M364.6 135.3L390.4 150.3M390.4 150.3L390.4 120.4M390.4 120.4L364.6 105.5M364.6 105.5L364.6 135.3' stroke='#151515' stroke-width='1.7' stroke-linecap='round' fill='none'/><polygon points='369.7,96.6 395.6,111.5 421.4,96.6 395.6,81.7' fill='rgb(155,155,155)' stroke='rgb(155,155,155)' stroke-width='0.6'/><path d='M369.7 96.6L395.6 111.5M395.6 111.5L421.4 96.6M421.4 96.6L395.6 81.7M395.6 81.7L369.7 96.6' stroke='#151515' stroke-width='1.7' stroke-linecap='round' fill='none'/><polygon points='395.6,81.7 421.4,96.6 421.4,72.7 395.6,57.8' fill='rgb(147,147,147)' stroke='rgb(147,147,147)' stroke-width='0.6'/><path d='M395.6 81.7L421.4 96.6M421.4 96.6L421.4 72.7M421.4 72.7L395.6 57.8M395.6 57.8L395.6 81.7' stroke='#151515' stroke-width='1.7' stroke-linecap='round' fill='none'/><polygon points='395.6,57.8 421.4,72.7 426.6,69.7 400.7,54.8' fill='rgb(155,155,155)' stroke='rgb(155,155,155)' stroke-width='0.6'/><path d='M395.6 57.8L421.4 72.7M426.6 69.7L400.7 54.8' stroke='#151515' stroke-width='1.7' stroke-linecap='round' fill='none'/><polygon points='312.9,302.3 333.6,290.4 333.6,266.5 312.9,278.5' fill='rgb(112,112,112)' stroke='rgb(112,112,112)' stroke-width='0.6'/><path d='M312.9 302.3L333.6 290.4M333.6 290.4L333.6 266.5M333.6 266.5L312.9 278.5M312.9 278.5L312.9 302.3' stroke='#151515' stroke-width='1.7' stroke-linecap='round' fill='none'/><polygon points='307.8,299.3 312.9,302.3 312.9,278.5 307.8,275.5' fill='rgb(147,147,147)' stroke='rgb(147,147,147)' stroke-width='0.6'/><path d='M307.8 299.3L312.9 302.3M312.9 302.3L312.9 278.5M307.8 275.5L307.8 299.3' stroke='#151515' stroke-width='1.7' stroke-linecap='round' fill='none'/><polygon points='338.8,257.6 364.6,242.7 364.6,212.9 338.8,227.8' fill='rgb(112,112,112)' stroke='rgb(112,112,112)' stroke-width='0.6'/><path d='M338.8 257.6L364.6 242.7M364.6 242.7L364.6 212.9M364.6 212.9L338.8 227.8M338.8 227.8L338.8 257.6' stroke='#151515' stroke-width='1.7' stroke-linecap='round' fill='none'/><polygon points='369.7,203.9 395.6,189.0 395.6,159.2 369.7,174.1' fill='rgb(112,112,112)' stroke='rgb(112,112,112)' stroke-width='0.6'/><path d='M369.7 203.9L395.6 189.0M395.6 189.0L395.6 159.2M395.6 159.2L369.7 174.1M369.7 174.1L369.7 203.9' stroke='#151515' stroke-width='1.7' stroke-linecap='round' fill='none'/><polygon points='400.7,150.3 426.6,135.3 426.6,105.5 400.7,120.4' fill='rgb(112,112,112)' stroke='rgb(112,112,112)' stroke-width='0.6'/><path d='M400.7 150.3L426.6 135.3M426.6 135.3L426.6 105.5M426.6 105.5L400.7 120.4M400.7 120.4L400.7 150.3' stroke='#151515' stroke-width='1.7' stroke-linecap='round' fill='none'/><polygon points='431.7,96.6 452.4,84.7 452.4,60.8 431.7,72.7' fill='rgb(112,112,112)' stroke='rgb(112,112,112)' stroke-width='0.6'/><path d='M431.7 96.6L452.4 84.7M452.4 84.7L452.4 60.8M452.4 60.8L431.7 72.7M431.7 72.7L431.7 96.6' stroke='#151515' stroke-width='1.7' stroke-linecap='round' fill='none'/><polygon points='426.6,69.7 431.7,72.7 452.4,60.8 447.2,57.8' fill='rgb(155,155,155)' stroke='rgb(155,155,155)' stroke-width='0.6'/><path d='M431.7 72.7L452.4 60.8M452.4 60.8L447.2 57.8M447.2 57.8L426.6 69.7' stroke='#151515' stroke-width='1.7' stroke-linecap='round' fill='none'/><polygon points='333.6,290.4 359.4,305.3 359.4,281.5 333.6,266.5' fill='rgb(147,147,147)' stroke='rgb(147,147,147)' stroke-width='0.6'/><path d='M333.6 290.4L359.4 305.3M359.4 305.3L359.4 281.5M359.4 281.5L333.6 266.5M333.6 266.5L333.6 290.4' stroke='#151515' stroke-width='1.7' stroke-linecap='round' fill='none'/><polygon points='338.8,257.6 364.6,272.5 390.4,257.6 364.6,242.7' fill='rgb(155,155,155)' stroke='rgb(155,155,155)' stroke-width='0.6'/><path d='M338.8 257.6L364.6 272.5M364.6 272.5L390.4 257.6M390.4 257.6L364.6 242.7M364.6 242.7L338.8 257.6' stroke='#151515' stroke-width='1.7' stroke-linecap='round' fill='none'/><polygon points='364.6,242.7 390.4,257.6 390.4,227.8 364.6,212.9' fill='rgb(147,147,147)' stroke='rgb(147,147,147)' stroke-width='0.6'/><path d='M364.6 242.7L390.4 257.6M390.4 257.6L390.4 227.8M390.4 227.8L364.6 212.9M364.6 212.9L364.6 242.7' stroke='#151515' stroke-width='1.7' stroke-linecap='round' fill='none'/><polygon points='369.7,203.9 395.6,218.8 421.4,203.9 395.6,189.0' fill='rgb(155,155,155)' stroke='rgb(155,155,155)' stroke-width='0.6'/><path d='M369.7 203.9L395.6 218.8M395.6 218.8L421.4 203.9M421.4 203.9L395.6 189.0M395.6 189.0L369.7 203.9' stroke='#151515' stroke-width='1.7' stroke-linecap='round' fill='none'/><polygon points='395.6,189.0 421.4,203.9 421.4,174.1 395.6,159.2' fill='rgb(147,147,147)' stroke='rgb(147,147,147)' stroke-width='0.6'/><path d='M395.6 189.0L421.4 203.9M421.4 203.9L421.4 174.1M421.4 174.1L395.6 159.2M395.6 159.2L395.6 189.0' stroke='#151515' stroke-width='1.7' stroke-linecap='round' fill='none'/><polygon points='400.7,150.3 426.6,165.2 452.4,150.3 426.6,135.3' fill='rgb(155,155,155)' stroke='rgb(155,155,155)' stroke-width='0.6'/><path d='M400.7 150.3L426.6 165.2M426.6 165.2L452.4 150.3M452.4 150.3L426.6 135.3M426.6 135.3L400.7 150.3' stroke='#151515' stroke-width='1.7' stroke-linecap='round' fill='none'/><polygon points='426.6,135.3 452.4,150.3 452.4,120.4 426.6,105.5' fill='rgb(147,147,147)' stroke='rgb(147,147,147)' stroke-width='0.6'/><path d='M426.6 135.3L452.4 150.3M452.4 150.3L452.4 120.4M452.4 120.4L426.6 105.5M426.6 105.5L426.6 135.3' stroke='#151515' stroke-width='1.7' stroke-linecap='round' fill='none'/><polygon points='431.7,96.6 457.5,111.5 478.2,99.6 452.4,84.7' fill='rgb(155,155,155)' stroke='rgb(155,155,155)' stroke-width='0.6'/><path d='M431.7 96.6L457.5 111.5M457.5 111.5L478.2 99.6M478.2 99.6L452.4 84.7M452.4 84.7L431.7 96.6' stroke='#151515' stroke-width='1.7' stroke-linecap='round' fill='none'/><polygon points='369.7,305.3 395.6,290.4 395.6,266.5 369.7,281.5' fill='rgb(112,112,112)' stroke='rgb(112,112,112)' stroke-width='0.6'/><path d='M369.7 305.3L395.6 290.4M395.6 290.4L395.6 266.5M395.6 266.5L369.7 281.5M369.7 281.5L369.7 305.3' stroke='#151515' stroke-width='1.7' stroke-linecap='round' fill='none'/><polygon points='400.7,257.6 426.6,242.7 426.6,212.9 400.7,227.8' fill='rgb(112,112,112)' stroke='rgb(112,112,112)' stroke-width='0.6'/><path d='M400.7 257.6L426.6 242.7M426.6 242.7L426.6 212.9M426.6 212.9L400.7 227.8M400.7 227.8L400.7 257.6' stroke='#151515' stroke-width='1.7' stroke-linecap='round' fill='none'/><polygon points='431.7,203.9 457.5,189.0 457.5,159.2 431.7,174.1' fill='rgb(112,112,112)' stroke='rgb(112,112,112)' stroke-width='0.6'/><path d='M431.7 203.9L457.5 189.0M457.5 189.0L457.5 159.2M457.5 159.2L431.7 174.1M431.7 174.1L431.7 203.9' stroke='#151515' stroke-width='1.7' stroke-linecap='round' fill='none'/><polygon points='462.7,150.3 483.4,138.3 483.4,108.5 462.7,120.4' fill='rgb(112,112,112)' stroke='rgb(112,112,112)' stroke-width='0.6'/><path d='M462.7 150.3L483.4 138.3M483.4 138.3L483.4 108.5M483.4 108.5L462.7 120.4M462.7 120.4L462.7 150.3' stroke='#151515' stroke-width='1.7' stroke-linecap='round' fill='none'/><polygon points='416.2,302.3 421.4,299.3 421.4,275.5 416.2,278.5' fill='rgb(112,112,112)' stroke='rgb(112,112,112)' stroke-width='0.6'/><path d='M416.2 302.3L421.4 299.3M421.4 299.3L421.4 275.5M416.2 278.5L416.2 302.3' stroke='#151515' stroke-width='1.7' stroke-linecap='round' fill='none'/><polygon points='395.6,290.4 416.2,302.3 416.2,278.5 395.6,266.5' fill='rgb(147,147,147)' stroke='rgb(147,147,147)' stroke-width='0.6'/><path d='M395.6 290.4L416.2 302.3M416.2 302.3L416.2 278.5M416.2 278.5L395.6 266.5M395.6 266.5L395.6 290.4' stroke='#151515' stroke-width='1.7' stroke-linecap='round' fill='none'/><polygon points='421.4,275.5 447.2,260.6 447.2,254.6 421.4,269.5' fill='rgb(112,112,112)' stroke='rgb(112,112,112)' stroke-width='0.6'/><path d='M421.4 275.5L447.2 260.6M447.2 254.6L421.4 269.5' stroke='#151515' stroke-width='1.7' stroke-linecap='round' fill='none'/><polygon points='400.7,257.6 421.4,269.5 447.2,254.6 426.6,242.7' fill='rgb(155,155,155)' stroke='rgb(155,155,155)' stroke-width='0.6'/><path d='M400.7 257.6L421.4 269.5M421.4 269.5L447.2 254.6M447.2 254.6L426.6 242.7M426.6 242.7L400.7 257.6' stroke='#151515' stroke-width='1.7' stroke-linecap='round' fill='none'/><polygon points='447.2,254.6 452.4,251.6 452.4,221.8 447.2,224.8' fill='rgb(112,112,112)' stroke='rgb(112,112,112)' stroke-width='0.6'/><path d='M452.4 251.6L452.4 221.8M447.2 224.8L447.2 254.6' stroke='#151515' stroke-width='1.7' stroke-linecap='round' fill='none'/><polygon points='426.6,242.7 447.2,254.6 447.2,224.8 426.6,212.9' fill='rgb(147,147,147)' stroke='rgb(147,147,147)' stroke-width='0.6'/><path d='M426.6 242.7L447.2 254.6M447.2 254.6L447.2 224.8M447.2 224.8L426.6 212.9M426.6 212.9L426.6 242.7' stroke='#151515' stroke-width='1.7' stroke-linecap='round' fill='none'/><polygon points='452.4,221.8 478.2,206.9 478.2,200.9 452.4,215.9' fill='rgb(112,112,112)' stroke='rgb(112,112,112)' stroke-width='0.6'/><path d='M452.4 221.8L478.2 206.9M478.2 200.9L452.4 215.9' stroke='#151515' stroke-width='1.7' stroke-linecap='round' fill='none'/><polygon points='431.7,203.9 452.4,215.9 478.2,200.9 457.5,189.0' fill='rgb(155,155,155)' stroke='rgb(155,155,155)' stroke-width='0.6'/><path d='M431.7 203.9L452.4 215.9M452.4 215.9L478.2 200.9M478.2 200.9L457.5 189.0M457.5 189.0L431.7 203.9' stroke='#151515' stroke-width='1.7' stroke-linecap='round' fill='none'/><polygon points='478.2,200.9 483.4,198.0 483.4,168.1 478.2,171.1' fill='rgb(112,112,112)' stroke='rgb(112,112,112)' stroke-width='0.6'/><path d='M483.4 198.0L483.4 168.1M478.2 171.1L478.2 200.9' stroke='#151515' stroke-width='1.7' stroke-linecap='round' fill='none'/><polygon points='457.5,189.0 478.2,200.9 478.2,171.1 457.5,159.2' fill='rgb(147,147,147)' stroke='rgb(147,147,147)' stroke-width='0.6'/><path d='M457.5 189.0L478.2 200.9M478.2 200.9L478.2 171.1M478.2 171.1L457.5 159.2M457.5 159.2L457.5 189.0' stroke='#151515' stroke-width='1.7' stroke-linecap='round' fill='none'/><polygon points='483.4,168.1 504.0,156.2 504.0,150.3 483.4,162.2' fill='rgb(112,112,112)' stroke='rgb(112,112,112)' stroke-width='0.6'/><path d='M483.4 168.1L504.0 156.2M504.0 156.2L504.0 150.3M504.0 150.3L483.4 162.2' stroke='#151515' stroke-width='1.7' stroke-linecap='round' fill='none'/><polygon points='462.7,150.3 483.4,162.2 504.0,150.3 483.4,138.3' fill='rgb(155,155,155)' stroke='rgb(155,155,155)' stroke-width='0.6'/><path d='M462.7 150.3L483.4 162.2M483.4 162.2L504.0 150.3M504.0 150.3L483.4 138.3M483.4 138.3L462.7 150.3' stroke='#151515' stroke-width='1.7' stroke-linecap='round' fill='none'/><polygon points='245.8,168.1 251.0,171.1 251.0,165.2 245.8,162.2' fill='rgb(147,147,147)' stroke='rgb(147,147,147)' stroke-width='0.6'/><polygon points='297.4,72.7 302.6,75.7 307.8,72.7 302.6,69.7' fill='rgb(155,155,155)' stroke='rgb(155,155,155)' stroke-width='0.6'/><polygon points='276.8,221.8 281.9,224.8 281.9,218.8 276.8,215.9' fill='rgb(147,147,147)' stroke='rgb(147,147,147)' stroke-width='0.6'/><polygon points='359.4,72.7 364.6,75.7 369.7,72.7 364.6,69.7' fill='rgb(155,155,155)' stroke='rgb(155,155,155)' stroke-width='0.6'/><polygon points='307.8,275.5 312.9,278.5 312.9,272.5 307.8,269.5' fill='rgb(147,147,147)' stroke='rgb(147,147,147)' stroke-width='0.6'/><polygon points='421.4,72.7 426.6,75.7 431.7,72.7 426.6,69.7' fill='rgb(155,155,155)' stroke='rgb(155,155,155)' stroke-width='0.6'/><polygon points='416.2,278.5 421.4,275.5 421.4,269.5 416.2,272.5' fill='rgb(112,112,112)' stroke='rgb(112,112,112)' stroke-width='0.6'/><polygon points='447.2,224.8 452.4,221.8 452.4,215.9 447.2,218.8' fill='rgb(112,112,112)' stroke='rgb(112,112,112)' stroke-width='0.6'/><polygon points='478.2,171.1 483.4,168.1 483.4,162.2 478.2,165.2' fill='rgb(112,112,112)' stroke='rgb(112,112,112)' stroke-width='0.6'/><polygon points='225.1,120.4 245.8,132.4 245.8,126.4 225.1,114.5' fill='rgb(147,147,147)' stroke='rgb(147,147,147)' stroke-width='0.6'/><path d='M225.1 120.4L245.8 132.4M245.8 126.4L225.1 114.5M225.1 114.5L225.1 120.4' stroke='#151515' stroke-width='1.7' stroke-linecap='round' fill='none'/><polygon points='225.1,114.5 245.8,126.4 266.4,114.5 245.8,102.5' fill='rgb(155,155,155)' stroke='rgb(155,155,155)' stroke-width='0.6'/><path d='M225.1 114.5L245.8 126.4M245.8 126.4L266.4 114.5M266.4 114.5L245.8 102.5M245.8 102.5L225.1 114.5' stroke='#151515' stroke-width='1.7' stroke-linecap='round' fill='none'/><polygon points='245.8,102.5 266.4,114.5 266.4,90.6 245.8,78.7' fill='rgb(147,147,147)' stroke='rgb(147,147,147)' stroke-width='0.6'/><path d='M245.8 102.5L266.4 114.5M266.4 114.5L266.4 90.6M266.4 90.6L245.8 78.7M245.8 78.7L245.8 102.5' stroke='#151515' stroke-width='1.7' stroke-linecap='round' fill='none'/><polygon points='245.8,78.7 266.4,90.6 271.6,87.6 251.0,75.7' fill='rgb(155,155,155)' stroke='rgb(155,155,155)' stroke-width='0.6'/><path d='M245.8 78.7L266.4 90.6M271.6 87.6L251.0 75.7M251.0 75.7L245.8 78.7' stroke='#151515' stroke-width='1.7' stroke-linecap='round' fill='none'/><polygon points='251.0,165.2 271.6,153.2 271.6,123.4 251.0,135.3' fill='rgb(112,112,112)' stroke='rgb(112,112,112)' stroke-width='0.6'/><path d='M251.0 165.2L271.6 153.2M271.6 153.2L271.6 123.4M271.6 123.4L251.0 135.3M251.0 135.3L251.0 165.2' stroke='#151515' stroke-width='1.7' stroke-linecap='round' fill='none'/><polygon points='245.8,162.2 251.0,165.2 251.0,135.3 245.8,132.4' fill='rgb(147,147,147)' stroke='rgb(147,147,147)' stroke-width='0.6'/><path d='M251.0 165.2L251.0 135.3M245.8 132.4L245.8 162.2' stroke='#151515' stroke-width='1.7' stroke-linecap='round' fill='none'/><polygon points='276.8,114.5 302.6,99.6 302.6,75.7 276.8,90.6' fill='rgb(112,112,112)' stroke='rgb(112,112,112)' stroke-width='0.6'/><path d='M276.8 114.5L302.6 99.6M302.6 99.6L302.6 75.7M302.6 75.7L276.8 90.6M276.8 90.6L276.8 114.5' stroke='#151515' stroke-width='1.7' stroke-linecap='round' fill='none'/><polygon points='271.6,87.6 276.8,90.6 302.6,75.7 297.4,72.7' fill='rgb(155,155,155)' stroke='rgb(155,155,155)' stroke-width='0.6'/><path d='M276.8 90.6L302.6 75.7M297.4 72.7L271.6 87.6' stroke='#151515' stroke-width='1.7' stroke-linecap='round' fill='none'/><polygon points='251.0,171.1 276.8,186.0 276.8,180.1 251.0,165.2' fill='rgb(147,147,147)' stroke='rgb(147,147,147)' stroke-width='0.6'/><path d='M251.0 171.1L276.8 186.0M276.8 180.1L251.0 165.2' stroke='#151515' stroke-width='1.7' stroke-linecap='round' fill='none'/><polygon points='251.0,165.2 276.8,180.1 297.4,168.1 271.6,153.2' fill='rgb(155,155,155)' stroke='rgb(155,155,155)' stroke-width='0.6'/><path d='M251.0 165.2L276.8 180.1M276.8 180.1L297.4 168.1M297.4 168.1L271.6 153.2M271.6 153.2L251.0 165.2' stroke='#151515' stroke-width='1.7' stroke-linecap='round' fill='none'/><polygon points='271.6,153.2 297.4,168.1 297.4,138.3 271.6,123.4' fill='rgb(147,147,147)' stroke='rgb(147,147,147)' stroke-width='0.6'/><path d='M271.6 153.2L297.4 168.1M297.4 168.1L297.4 138.3M297.4 138.3L271.6 123.4M271.6 123.4L271.6 153.2' stroke='#151515' stroke-width='1.7' stroke-linecap='round' fill='none'/><polygon points='276.8,114.5 302.6,129.4 328.4,114.5 302.6,99.6' fill='rgb(155,155,155)' stroke='rgb(155,155,155)' stroke-width='0.6'/><path d='M276.8 114.5L302.6 129.4M302.6 129.4L328.4 114.5M328.4 114.5L302.6 99.6M302.6 99.6L276.8 114.5' stroke='#151515' stroke-width='1.7' stroke-linecap='round' fill='none'/><polygon points='302.6,99.6 328.4,114.5 328.4,90.6 302.6,75.7' fill='rgb(147,147,147)' stroke='rgb(147,147,147)' stroke-width='0.6'/><path d='M302.6 99.6L328.4 114.5M328.4 114.5L328.4 90.6M328.4 90.6L302.6 75.7M302.6 75.7L302.6 99.6' stroke='#151515' stroke-width='1.7' stroke-linecap='round' fill='none'/><polygon points='302.6,75.7 328.4,90.6 333.6,87.6 307.8,72.7' fill='rgb(155,155,155)' stroke='rgb(155,155,155)' stroke-width='0.6'/><path d='M302.6 75.7L328.4 90.6M333.6 87.6L307.8 72.7' stroke='#151515' stroke-width='1.7' stroke-linecap='round' fill='none'/><polygon points='281.9,218.8 302.6,206.9 302.6,177.1 281.9,189.0' fill='rgb(112,112,112)' stroke='rgb(112,112,112)' stroke-width='0.6'/><path d='M281.9 218.8L302.6 206.9M302.6 206.9L302.6 177.1M302.6 177.1L281.9 189.0M281.9 189.0L281.9 218.8' stroke='#151515' stroke-width='1.7' stroke-linecap='round' fill='none'/><polygon points='276.8,215.9 281.9,218.8 281.9,189.0 276.8,186.0' fill='rgb(147,147,147)' stroke='rgb(147,147,147)' stroke-width='0.6'/><path d='M281.9 218.8L281.9 189.0M276.8 186.0L276.8 215.9' stroke='#151515' stroke-width='1.7' stroke-linecap='round' fill='none'/><polygon points='307.8,168.1 333.6,153.2 333.6,123.4 307.8,138.3' fill='rgb(112,112,112)' stroke='rgb(112,112,112)' stroke-width='0.6'/><path d='M307.8 168.1L333.6 153.2M333.6 153.2L333.6 123.4M333.6 123.4L307.8 138.3M307.8 138.3L307.8 168.1' stroke='#151515' stroke-width='1.7' stroke-linecap='round' fill='none'/><polygon points='338.8,114.5 364.6,99.6 364.6,75.7 338.8,90.6' fill='rgb(112,112,112)' stroke='rgb(112,112,112)' stroke-width='0.6'/><path d='M338.8 114.5L364.6 99.6M364.6 99.6L364.6 75.7M364.6 75.7L338.8 90.6M338.8 90.6L338.8 114.5' stroke='#151515' stroke-width='1.7' stroke-linecap='round' fill='none'/><polygon points='333.6,87.6 338.8,90.6 364.6,75.7 359.4,72.7' fill='rgb(155,155,155)' stroke='rgb(155,155,155)' stroke-width='0.6'/><path d='M338.8 90.6L364.6 75.7M359.4 72.7L333.6 87.6' stroke='#151515' stroke-width='1.7' stroke-linecap='round' fill='none'/><polygon points='281.9,224.8 307.8,239.7 307.8,233.7 281.9,218.8' fill='rgb(147,147,147)' stroke='rgb(147,147,147)' stroke-width='0.6'/><path d='M281.9 224.8L307.8 239.7M307.8 233.7L281.9 218.8' stroke='#151515' stroke-width='1.7' stroke-linecap='round' fill='none'/><polygon points='281.9,218.8 307.8,233.7 328.4,221.8 302.6,206.9' fill='rgb(155,155,155)' stroke='rgb(155,155,155)' stroke-width='0.6'/><path d='M281.9 218.8L307.8 233.7M307.8 233.7L328.4 221.8M328.4 221.8L302.6 206.9M302.6 206.9L281.9 218.8' stroke='#151515' stroke-width='1.7' stroke-linecap='round' fill='none'/><polygon points='302.6,206.9 328.4,221.8 328.4,192.0 302.6,177.1' fill='rgb(147,147,147)' stroke='rgb(147,147,147)' stroke-width='0.6'/><path d='M302.6 206.9L328.4 221.8M328.4 221.8L328.4 192.0M328.4 192.0L302.6 177.1M302.6 177.1L302.6 206.9' stroke='#151515' stroke-width='1.7' stroke-linecap='round' fill='none'/><polygon points='307.8,168.1 333.6,183.1 359.4,168.1 333.6,153.2' fill='rgb(155,155,155)' stroke='rgb(155,155,155)' stroke-width='0.6'/><path d='M307.8 168.1L333.6 183.1M333.6 183.1L359.4 168.1M359.4 168.1L333.6 153.2M333.6 153.2L307.8 168.1' stroke='#151515' stroke-width='1.7' stroke-linecap='round' fill='none'/><polygon points='333.6,153.2 359.4,168.1 359.4,138.3 333.6,123.4' fill='rgb(147,147,147)' stroke='rgb(147,147,147)' stroke-width='0.6'/><path d='M333.6 153.2L359.4 168.1M359.4 168.1L359.4 138.3M359.4 138.3L333.6 123.4M333.6 123.4L333.6 153.2' stroke='#151515' stroke-width='1.7' stroke-linecap='round' fill='none'/><polygon points='338.8,114.5 364.6,129.4 390.4,114.5 364.6,99.6' fill='rgb(155,155,155)' stroke='rgb(155,155,155)' stroke-width='0.6'/><path d='M338.8 114.5L364.6 129.4M364.6 129.4L390.4 114.5M390.4 114.5L364.6 99.6M364.6 99.6L338.8 114.5' stroke='#151515' stroke-width='1.7' stroke-linecap='round' fill='none'/><polygon points='364.6,99.6 390.4,114.5 390.4,90.6 364.6,75.7' fill='rgb(147,147,147)' stroke='rgb(147,147,147)' stroke-width='0.6'/><path d='M364.6 99.6L390.4 114.5M390.4 114.5L390.4 90.6M390.4 90.6L364.6 75.7M364.6 75.7L364.6 99.6' stroke='#151515' stroke-width='1.7' stroke-linecap='round' fill='none'/><polygon points='364.6,75.7 390.4,90.6 395.6,87.6 369.7,72.7' fill='rgb(155,155,155)' stroke='rgb(155,155,155)' stroke-width='0.6'/><path d='M364.6 75.7L390.4 90.6M395.6 87.6L369.7 72.7' stroke='#151515' stroke-width='1.7' stroke-linecap='round' fill='none'/><polygon points='312.9,272.5 333.6,260.6 333.6,230.8 312.9,242.7' fill='rgb(112,112,112)' stroke='rgb(112,112,112)' stroke-width='0.6'/><path d='M312.9 272.5L333.6 260.6M333.6 260.6L333.6 230.8M333.6 230.8L312.9 242.7M312.9 242.7L312.9 272.5' stroke='#151515' stroke-width='1.7' stroke-linecap='round' fill='none'/><polygon points='307.8,269.5 312.9,272.5 312.9,242.7 307.8,239.7' fill='rgb(147,147,147)' stroke='rgb(147,147,147)' stroke-width='0.6'/><path d='M312.9 272.5L312.9 242.7M307.8 239.7L307.8 269.5' stroke='#151515' stroke-width='1.7' stroke-linecap='round' fill='none'/><polygon points='338.8,221.8 364.6,206.9 364.6,177.1 338.8,192.0' fill='rgb(112,112,112)' stroke='rgb(112,112,112)' stroke-width='0.6'/><path d='M338.8 221.8L364.6 206.9M364.6 206.9L364.6 177.1M364.6 177.1L338.8 192.0M338.8 192.0L338.8 221.8' stroke='#151515' stroke-width='1.7' stroke-linecap='round' fill='none'/><polygon points='369.7,168.1 395.6,153.2 395.6,123.4 369.7,138.3' fill='rgb(112,112,112)' stroke='rgb(112,112,112)' stroke-width='0.6'/><path d='M369.7 168.1L395.6 153.2M395.6 153.2L395.6 123.4M395.6 123.4L369.7 138.3M369.7 138.3L369.7 168.1' stroke='#151515' stroke-width='1.7' stroke-linecap='round' fill='none'/><polygon points='400.7,114.5 426.6,99.6 426.6,75.7 400.7,90.6' fill='rgb(112,112,112)' stroke='rgb(112,112,112)' stroke-width='0.6'/><path d='M400.7 114.5L426.6 99.6M426.6 99.6L426.6 75.7M426.6 75.7L400.7 90.6M400.7 90.6L400.7 114.5' stroke='#151515' stroke-width='1.7' stroke-linecap='round' fill='none'/><polygon points='395.6,87.6 400.7,90.6 426.6,75.7 421.4,72.7' fill='rgb(155,155,155)' stroke='rgb(155,155,155)' stroke-width='0.6'/><path d='M400.7 90.6L426.6 75.7M421.4 72.7L395.6 87.6' stroke='#151515' stroke-width='1.7' stroke-linecap='round' fill='none'/><polygon points='312.9,278.5 338.8,293.4 338.8,287.4 312.9,272.5' fill='rgb(147,147,147)' stroke='rgb(147,147,147)' stroke-width='0.6'/><path d='M312.9 278.5L338.8 293.4M338.8 287.4L312.9 272.5' stroke='#151515' stroke-width='1.7' stroke-linecap='round' fill='none'/><polygon points='312.9,272.5 338.8,287.4 359.4,275.5 333.6,260.6' fill='rgb(155,155,155)' stroke='rgb(155,155,155)' stroke-width='0.6'/><path d='M312.9 272.5L338.8 287.4M338.8 287.4L359.4 275.5M359.4 275.5L333.6 260.6M333.6 260.6L312.9 272.5' stroke='#151515' stroke-width='1.7' stroke-linecap='round' fill='none'/><polygon points='333.6,260.6 359.4,275.5 359.4,245.7 333.6,230.8' fill='rgb(147,147,147)' stroke='rgb(147,147,147)' stroke-width='0.6'/><path d='M333.6 260.6L359.4 275.5M359.4 275.5L359.4 245.7M359.4 245.7L333.6 230.8M333.6 230.8L333.6 260.6' stroke='#151515' stroke-width='1.7' stroke-linecap='round' fill='none'/><polygon points='338.8,221.8 364.6,236.7 390.4,221.8 364.6,206.9' fill='rgb(155,155,155)' stroke='rgb(155,155,155)' stroke-width='0.6'/><path d='M338.8 221.8L364.6 236.7M364.6 236.7L390.4 221.8M390.4 221.8L364.6 206.9M364.6 206.9L338.8 221.8' stroke='#151515' stroke-width='1.7' stroke-linecap='round' fill='none'/><polygon points='364.6,206.9 390.4,221.8 390.4,192.0 364.6,177.1' fill='rgb(147,147,147)' stroke='rgb(147,147,147)' stroke-width='0.6'/><path d='M364.6 206.9L390.4 221.8M390.4 221.8L390.4 192.0M390.4 192.0L364.6 177.1M364.6 177.1L364.6 206.9' stroke='#151515' stroke-width='1.7' stroke-linecap='round' fill='none'/><polygon points='369.7,168.1 395.6,183.1 421.4,168.1 395.6,153.2' fill='rgb(155,155,155)' stroke='rgb(155,155,155)' stroke-width='0.6'/><path d='M369.7 168.1L395.6 183.1M395.6 183.1L421.4 168.1M421.4 168.1L395.6 153.2M395.6 153.2L369.7 168.1' stroke='#151515' stroke-width='1.7' stroke-linecap='round' fill='none'/><polygon points='395.6,153.2 421.4,168.1 421.4,138.3 395.6,123.4' fill='rgb(147,147,147)' stroke='rgb(147,147,147)' stroke-width='0.6'/><path d='M395.6 153.2L421.4 168.1M421.4 168.1L421.4 138.3M421.4 138.3L395.6 123.4M395.6 123.4L395.6 153.2' stroke='#151515' stroke-width='1.7' stroke-linecap='round' fill='none'/><polygon points='400.7,114.5 426.6,129.4 452.4,114.5 426.6,99.6' fill='rgb(155,155,155)' stroke='rgb(155,155,155)' stroke-width='0.6'/><path d='M400.7 114.5L426.6 129.4M426.6 129.4L452.4 114.5M452.4 114.5L426.6 99.6M426.6 99.6L400.7 114.5' stroke='#151515' stroke-width='1.7' stroke-linecap='round' fill='none'/><polygon points='426.6,99.6 452.4,114.5 452.4,90.6 426.6,75.7' fill='rgb(147,147,147)' stroke='rgb(147,147,147)' stroke-width='0.6'/><path d='M426.6 99.6L452.4 114.5M452.4 114.5L452.4 90.6M452.4 90.6L426.6 75.7M426.6 75.7L426.6 99.6' stroke='#151515' stroke-width='1.7' stroke-linecap='round' fill='none'/><polygon points='426.6,75.7 452.4,90.6 457.5,87.6 431.7,72.7' fill='rgb(155,155,155)' stroke='rgb(155,155,155)' stroke-width='0.6'/><path d='M426.6 75.7L452.4 90.6M457.5 87.6L431.7 72.7' stroke='#151515' stroke-width='1.7' stroke-linecap='round' fill='none'/><polygon points='343.9,320.2 364.6,308.3 364.6,284.4 343.9,296.4' fill='rgb(112,112,112)' stroke='rgb(112,112,112)' stroke-width='0.6'/><path d='M343.9 320.2L364.6 308.3M364.6 308.3L364.6 284.4M364.6 284.4L343.9 296.4M343.9 296.4L343.9 320.2' stroke='#151515' stroke-width='1.7' stroke-linecap='round' fill='none'/><polygon points='338.8,317.2 343.9,320.2 343.9,296.4 338.8,293.4' fill='rgb(147,147,147)' stroke='rgb(147,147,147)' stroke-width='0.6'/><path d='M338.8 317.2L343.9 320.2M343.9 320.2L343.9 296.4M338.8 293.4L338.8 317.2' stroke='#151515' stroke-width='1.7' stroke-linecap='round' fill='none'/><polygon points='369.7,275.5 395.6,260.6 395.6,230.8 369.7,245.7' fill='rgb(112,112,112)' stroke='rgb(112,112,112)' stroke-width='0.6'/><path d='M369.7 275.5L395.6 260.6M395.6 260.6L395.6 230.8M395.6 230.8L369.7 245.7M369.7 245.7L369.7 275.5' stroke='#151515' stroke-width='1.7' stroke-linecap='round' fill='none'/><polygon points='400.7,221.8 426.6,206.9 426.6,177.1 400.7,192.0' fill='rgb(112,112,112)' stroke='rgb(112,112,112)' stroke-width='0.6'/><path d='M400.7 221.8L426.6 206.9M426.6 206.9L426.6 177.1M426.6 177.1L400.7 192.0M400.7 192.0L400.7 221.8' stroke='#151515' stroke-width='1.7' stroke-linecap='round' fill='none'/><polygon points='431.7,168.1 457.5,153.2 457.5,123.4 431.7,138.3' fill='rgb(112,112,112)' stroke='rgb(112,112,112)' stroke-width='0.6'/><path d='M431.7 168.1L457.5 153.2M457.5 153.2L457.5 123.4M457.5 123.4L431.7 138.3M431.7 138.3L431.7 168.1' stroke='#151515' stroke-width='1.7' stroke-linecap='round' fill='none'/><polygon points='462.7,114.5 483.4,102.5 483.4,78.7 462.7,90.6' fill='rgb(112,112,112)' stroke='rgb(112,112,112)' stroke-width='0.6'/><path d='M462.7 114.5L483.4 102.5M483.4 102.5L483.4 78.7M483.4 78.7L462.7 90.6M462.7 90.6L462.7 114.5' stroke='#151515' stroke-width='1.7' stroke-linecap='round' fill='none'/><polygon points='457.5,87.6 462.7,90.6 483.4,78.7 478.2,75.7' fill='rgb(155,155,155)' stroke='rgb(155,155,155)' stroke-width='0.6'/><path d='M462.7 90.6L483.4 78.7M483.4 78.7L478.2 75.7M478.2 75.7L457.5 87.6' stroke='#151515' stroke-width='1.7' stroke-linecap='round' fill='none'/><polygon points='385.2,320.2 390.4,317.2 390.4,293.4 385.2,296.4' fill='rgb(112,112,112)' stroke='rgb(112,112,112)' stroke-width='0.6'/><path d='M385.2 320.2L390.4 317.2M390.4 317.2L390.4 293.4M385.2 296.4L385.2 320.2' stroke='#151515' stroke-width='1.7' stroke-linecap='round' fill='none'/><polygon points='364.6,308.3 385.2,320.2 385.2,296.4 364.6,284.4' fill='rgb(147,147,147)' stroke='rgb(147,147,147)' stroke-width='0.6'/><path d='M364.6 308.3L385.2 320.2M385.2 320.2L385.2 296.4M385.2 296.4L364.6 284.4M364.6 284.4L364.6 308.3' stroke='#151515' stroke-width='1.7' stroke-linecap='round' fill='none'/><polygon points='390.4,293.4 416.2,278.5 416.2,272.5 390.4,287.4' fill='rgb(112,112,112)' stroke='rgb(112,112,112)' stroke-width='0.6'/><path d='M390.4 293.4L416.2 278.5M416.2 272.5L390.4 287.4' stroke='#151515' stroke-width='1.7' stroke-linecap='round' fill='none'/><polygon points='369.7,275.5 390.4,287.4 416.2,272.5 395.6,260.6' fill='rgb(155,155,155)' stroke='rgb(155,155,155)' stroke-width='0.6'/><path d='M369.7 275.5L390.4 287.4M390.4 287.4L416.2 272.5M416.2 272.5L395.6 260.6M395.6 260.6L369.7 275.5' stroke='#151515' stroke-width='1.7' stroke-linecap='round' fill='none'/><polygon points='416.2,272.5 421.4,269.5 421.4,239.7 416.2,242.7' fill='rgb(112,112,112)' stroke='rgb(112,112,112)' stroke-width='0.6'/><path d='M421.4 269.5L421.4 239.7M416.2 242.7L416.2 272.5' stroke='#151515' stroke-width='1.7' stroke-linecap='round' fill='none'/><polygon points='395.6,260.6 416.2,272.5 416.2,242.7 395.6,230.8' fill='rgb(147,147,147)' stroke='rgb(147,147,147)' stroke-width='0.6'/><path d='M395.6 260.6L416.2 272.5M416.2 272.5L416.2 242.7M416.2 242.7L395.6 230.8M395.6 230.8L395.6 260.6' stroke='#151515' stroke-width='1.7' stroke-linecap='round' fill='none'/><polygon points='421.4,239.7 447.2,224.8 447.2,218.8 421.4,233.7' fill='rgb(112,112,112)' stroke='rgb(112,112,112)' stroke-width='0.6'/><path d='M421.4 239.7L447.2 224.8M447.2 218.8L421.4 233.7' stroke='#151515' stroke-width='1.7' stroke-linecap='round' fill='none'/><polygon points='400.7,221.8 421.4,233.7 447.2,218.8 426.6,206.9' fill='rgb(155,155,155)' stroke='rgb(155,155,155)' stroke-width='0.6'/><path d='M400.7 221.8L421.4 233.7M421.4 233.7L447.2 218.8M447.2 218.8L426.6 206.9M426.6 206.9L400.7 221.8' stroke='#151515' stroke-width='1.7' stroke-linecap='round' fill='none'/><polygon points='447.2,218.8 452.4,215.9 452.4,186.0 447.2,189.0' fill='rgb(112,112,112)' stroke='rgb(112,112,112)' stroke-width='0.6'/><path d='M452.4 215.9L452.4 186.0M447.2 189.0L447.2 218.8' stroke='#151515' stroke-width='1.7' stroke-linecap='round' fill='none'/><polygon points='426.6,206.9 447.2,218.8 447.2,189.0 426.6,177.1' fill='rgb(147,147,147)' stroke='rgb(147,147,147)' stroke-width='0.6'/><path d='M426.6 206.9L447.2 218.8M447.2 218.8L447.2 189.0M447.2 189.0L426.6 177.1M426.6 177.1L426.6 206.9' stroke='#151515' stroke-width='1.7' stroke-linecap='round' fill='none'/><polygon points='452.4,186.0 478.2,171.1 478.2,165.2 452.4,180.1' fill='rgb(112,112,112)' stroke='rgb(112,112,112)' stroke-width='0.6'/><path d='M452.4 186.0L478.2 171.1M478.2 165.2L452.4 180.1' stroke='#151515' stroke-width='1.7' stroke-linecap='round' fill='none'/><polygon points='431.7,168.1 452.4,180.1 478.2,165.2 457.5,153.2' fill='rgb(155,155,155)' stroke='rgb(155,155,155)' stroke-width='0.6'/><path d='M431.7 168.1L452.4 180.1M452.4 180.1L478.2 165.2M478.2 165.2L457.5 153.2M457.5 153.2L431.7 168.1' stroke='#151515' stroke-width='1.7' stroke-linecap='round' fill='none'/><polygon points='478.2,165.2 483.4,162.2 483.4,132.4 478.2,135.3' fill='rgb(112,112,112)' stroke='rgb(112,112,112)' stroke-width='0.6'/><path d='M483.4 162.2L483.4 132.4M478.2 135.3L478.2 165.2' stroke='#151515' stroke-width='1.7' stroke-linecap='round' fill='none'/><polygon points='457.5,153.2 478.2,165.2 478.2,135.3 457.5,123.4' fill='rgb(147,147,147)' stroke='rgb(147,147,147)' stroke-width='0.6'/><path d='M457.5 153.2L478.2 165.2M478.2 165.2L478.2 135.3M478.2 135.3L457.5 123.4M457.5 123.4L457.5 153.2' stroke='#151515' stroke-width='1.7' stroke-linecap='round' fill='none'/><polygon points='483.4,132.4 504.0,120.4 504.0,114.5 483.4,126.4' fill='rgb(112,112,112)' stroke='rgb(112,112,112)' stroke-width='0.6'/><path d='M483.4 132.4L504.0 120.4M504.0 120.4L504.0 114.5M504.0 114.5L483.4 126.4' stroke='#151515' stroke-width='1.7' stroke-linecap='round' fill='none'/><polygon points='462.7,114.5 483.4,126.4 504.0,114.5 483.4,102.5' fill='rgb(155,155,155)' stroke='rgb(155,155,155)' stroke-width='0.6'/><path d='M462.7 114.5L483.4 126.4M483.4 126.4L504.0 114.5M504.0 114.5L483.4 102.5M483.4 102.5L462.7 114.5' stroke='#151515' stroke-width='1.7' stroke-linecap='round' fill='none'/><polygon points='245.8,132.4 251.0,135.3 251.0,129.4 245.8,126.4' fill='rgb(147,147,147)' stroke='rgb(147,147,147)' stroke-width='0.6'/><polygon points='266.4,90.6 271.6,93.6 276.8,90.6 271.6,87.6' fill='rgb(155,155,155)' stroke='rgb(155,155,155)' stroke-width='0.6'/><polygon points='276.8,186.0 281.9,189.0 281.9,183.1 276.8,180.1' fill='rgb(147,147,147)' stroke='rgb(147,147,147)' stroke-width='0.6'/><polygon points='328.4,90.6 333.6,93.6 338.8,90.6 333.6,87.6' fill='rgb(155,155,155)' stroke='rgb(155,155,155)' stroke-width='0.6'/><polygon points='307.8,239.7 312.9,242.7 312.9,236.7 307.8,233.7' fill='rgb(147,147,147)' stroke='rgb(147,147,147)' stroke-width='0.6'/><polygon points='390.4,90.6 395.6,93.6 400.7,90.6 395.6,87.6' fill='rgb(155,155,155)' stroke='rgb(155,155,155)' stroke-width='0.6'/><polygon points='338.8,293.4 343.9,296.4 343.9,290.4 338.8,287.4' fill='rgb(147,147,147)' stroke='rgb(147,147,147)' stroke-width='0.6'/><polygon points='452.4,90.6 457.5,93.6 462.7,90.6 457.5,87.6' fill='rgb(155,155,155)' stroke='rgb(155,155,155)' stroke-width='0.6'/><polygon points='385.2,296.4 390.4,293.4 390.4,287.4 385.2,290.4' fill='rgb(112,112,112)' stroke='rgb(112,112,112)' stroke-width='0.6'/><polygon points='416.2,242.7 421.4,239.7 421.4,233.7 416.2,236.7' fill='rgb(112,112,112)' stroke='rgb(112,112,112)' stroke-width='0.6'/><polygon points='447.2,189.0 452.4,186.0 452.4,180.1 447.2,183.1' fill='rgb(112,112,112)' stroke='rgb(112,112,112)' stroke-width='0.6'/><polygon points='478.2,135.3 483.4,132.4 483.4,126.4 478.2,129.4' fill='rgb(112,112,112)' stroke='rgb(112,112,112)' stroke-width='0.6'/><polygon points='251.0,129.4 271.6,117.5 271.6,93.6 251.0,105.5' fill='rgb(112,112,112)' stroke='rgb(112,112,112)' stroke-width='0.6'/><path d='M251.0 129.4L271.6 117.5M271.6 117.5L271.6 93.6M271.6 93.6L251.0 105.5M251.0 105.5L251.0 129.4' stroke='#151515' stroke-width='1.7' stroke-linecap='round' fill='none'/><polygon points='245.8,126.4 251.0,129.4 251.0,105.5 245.8,102.5' fill='rgb(147,147,147)' stroke='rgb(147,147,147)' stroke-width='0.6'/><path d='M251.0 129.4L251.0 105.5M251.0 105.5L245.8 102.5M245.8 102.5L245.8 126.4' stroke='#151515' stroke-width='1.7' stroke-linecap='round' fill='none'/><polygon points='245.8,102.5 251.0,105.5 271.6,93.6 266.4,90.6' fill='rgb(155,155,155)' stroke='rgb(155,155,155)' stroke-width='0.6'/><path d='M245.8 102.5L251.0 105.5M251.0 105.5L271.6 93.6M266.4 90.6L245.8 102.5' stroke='#151515' stroke-width='1.7' stroke-linecap='round' fill='none'/><polygon points='251.0,135.3 276.8,150.3 276.8,144.3 251.0,129.4' fill='rgb(147,147,147)' stroke='rgb(147,147,147)' stroke-width='0.6'/><path d='M251.0 135.3L276.8 150.3M276.8 144.3L251.0 129.4' stroke='#151515' stroke-width='1.7' stroke-linecap='round' fill='none'/><polygon points='251.0,129.4 276.8,144.3 297.4,132.4 271.6,117.5' fill='rgb(155,155,155)' stroke='rgb(155,155,155)' stroke-width='0.6'/><path d='M251.0 129.4L276.8 144.3M276.8 144.3L297.4 132.4M297.4 132.4L271.6 117.5M271.6 117.5L251.0 129.4' stroke='#151515' stroke-width='1.7' stroke-linecap='round' fill='none'/><polygon points='271.6,117.5 297.4,132.4 297.4,108.5 271.6,93.6' fill='rgb(147,147,147)' stroke='rgb(147,147,147)' stroke-width='0.6'/><path d='M271.6 117.5L297.4 132.4M297.4 132.4L297.4 108.5M297.4 108.5L271.6 93.6M271.6 93.6L271.6 117.5' stroke='#151515' stroke-width='1.7' stroke-linecap='round' fill='none'/><polygon points='271.6,93.6 297.4,108.5 302.6,105.5 276.8,90.6' fill='rgb(155,155,155)' stroke='rgb(155,155,155)' stroke-width='0.6'/><path d='M271.6 93.6L297.4 108.5M302.6 105.5L276.8 90.6' stroke='#151515' stroke-width='1.7' stroke-linecap='round' fill='none'/><polygon points='281.9,183.1 302.6,171.1 302.6,141.3 281.9,153.2' fill='rgb(112,112,112)' stroke='rgb(112,112,112)' stroke-width='0.6'/><path d='M281.9 183.1L302.6 171.1M302.6 171.1L302.6 141.3M302.6 141.3L281.9 153.2M281.9 153.2L281.9 183.1' stroke='#151515' stroke-width='1.7' stroke-linecap='round' fill='none'/><polygon points='276.8,180.1 281.9,183.1 281.9,153.2 276.8,150.3' fill='rgb(147,147,147)' stroke='rgb(147,147,147)' stroke-width='0.6'/><path d='M281.9 183.1L281.9 153.2M276.8 150.3L276.8 180.1' stroke='#151515' stroke-width='1.7' stroke-linecap='round' fill='none'/><polygon points='307.8,132.4 333.6,117.5 333.6,93.6 307.8,108.5' fill='rgb(112,112,112)' stroke='rgb(112,112,112)' stroke-width='0.6'/><path d='M307.8 132.4L333.6 117.5M333.6 117.5L333.6 93.6M333.6 93.6L307.8 108.5M307.8 108.5L307.8 132.4' stroke='#151515' stroke-width='1.7' stroke-linecap='round' fill='none'/><polygon points='302.6,105.5 307.8,108.5 333.6,93.6 328.4,90.6' fill='rgb(155,155,155)' stroke='rgb(155,155,155)' stroke-width='0.6'/><path d='M307.8 108.5L333.6 93.6M328.4 90.6L302.6 105.5' stroke='#151515' stroke-width='1.7' stroke-linecap='round' fill='none'/><polygon points='281.9,189.0 307.8,203.9 307.8,198.0 281.9,183.1' fill='rgb(147,147,147)' stroke='rgb(147,147,147)' stroke-width='0.6'/><path d='M281.9 189.0L307.8 203.9M307.8 198.0L281.9 183.1' stroke='#151515' stroke-width='1.7' stroke-linecap='round' fill='none'/><polygon points='281.9,183.1 307.8,198.0 328.4,186.0 302.6,171.1' fill='rgb(155,155,155)' stroke='rgb(155,155,155)' stroke-width='0.6'/><path d='M281.9 183.1L307.8 198.0M307.8 198.0L328.4 186.0M328.4 186.0L302.6 171.1M302.6 171.1L281.9 183.1' stroke='#151515' stroke-width='1.7' stroke-linecap='round' fill='none'/><polygon points='302.6,171.1 328.4,186.0 328.4,156.2 302.6,141.3' fill='rgb(147,147,147)' stroke='rgb(147,147,147)' stroke-width='0.6'/><path d='M302.6 171.1L328.4 186.0M328.4 186.0L328.4 156.2M328.4 156.2L302.6 141.3M302.6 141.3L302.6 171.1' stroke='#151515' stroke-width='1.7' stroke-linecap='round' fill='none'/><polygon points='307.8,132.4 333.6,147.3 359.4,132.4 333.6,117.5' fill='rgb(155,155,155)' stroke='rgb(155,155,155)' stroke-width='0.6'/><path d='M307.8 132.4L333.6 147.3M333.6 147.3L359.4 132.4M359.4 132.4L333.6 117.5M333.6 117.5L307.8 132.4' stroke='#151515' stroke-width='1.7' stroke-linecap='round' fill='none'/><polygon points='333.6,117.5 359.4,132.4 359.4,108.5 333.6,93.6' fill='rgb(147,147,147)' stroke='rgb(147,147,147)' stroke-width='0.6'/><path d='M333.6 117.5L359.4 132.4M359.4 132.4L359.4 108.5M359.4 108.5L333.6 93.6M333.6 93.6L333.6 117.5' stroke='#151515' stroke-width='1.7' stroke-linecap='round' fill='none'/><polygon points='333.6,93.6 359.4,108.5 364.6,105.5 338.8,90.6' fill='rgb(155,155,155)' stroke='rgb(155,155,155)' stroke-width='0.6'/><path d='M333.6 93.6L359.4 108.5M364.6 105.5L338.8 90.6' stroke='#151515' stroke-width='1.7' stroke-linecap='round' fill='none'/><polygon points='312.9,236.7 333.6,224.8 333.6,195.0 312.9,206.9' fill='rgb(112,112,112)' stroke='rgb(112,112,112)' stroke-width='0.6'/><path d='M312.9 236.7L333.6 224.8M333.6 224.8L333.6 195.0M333.6 195.0L312.9 206.9M312.9 206.9L312.9 236.7' stroke='#151515' stroke-width='1.7' stroke-linecap='round' fill='none'/><polygon points='307.8,233.7 312.9,236.7 312.9,206.9 307.8,203.9' fill='rgb(147,147,147)' stroke='rgb(147,147,147)' stroke-width='0.6'/><path d='M312.9 236.7L312.9 206.9M307.8 203.9L307.8 233.7' stroke='#151515' stroke-width='1.7' stroke-linecap='round' fill='none'/><polygon points='338.8,186.0 364.6,171.1 364.6,141.3 338.8,156.2' fill='rgb(112,112,112)' stroke='rgb(112,112,112)' stroke-width='0.6'/><path d='M338.8 186.0L364.6 171.1M364.6 171.1L364.6 141.3M364.6 141.3L338.8 156.2M338.8 156.2L338.8 186.0' stroke='#151515' stroke-width='1.7' stroke-linecap='round' fill='none'/><polygon points='369.7,132.4 395.6,117.5 395.6,93.6 369.7,108.5' fill='rgb(112,112,112)' stroke='rgb(112,112,112)' stroke-width='0.6'/><path d='M369.7 132.4L395.6 117.5M395.6 117.5L395.6 93.6M395.6 93.6L369.7 108.5M369.7 108.5L369.7 132.4' stroke='#151515' stroke-width='1.7' stroke-linecap='round' fill='none'/><polygon points='364.6,105.5 369.7,108.5 395.6,93.6 390.4,90.6' fill='rgb(155,155,155)' stroke='rgb(155,155,155)' stroke-width='0.6'/><path d='M369.7 108.5L395.6 93.6M390.4 90.6L364.6 105.5' stroke='#151515' stroke-width='1.7' stroke-linecap='round' fill='none'/><polygon points='312.9,242.7 338.8,257.6 338.8,251.6 312.9,236.7' fill='rgb(147,147,147)' stroke='rgb(147,147,147)' stroke-width='0.6'/><path d='M312.9 242.7L338.8 257.6M338.8 251.6L312.9 236.7' stroke='#151515' stroke-width='1.7' stroke-linecap='round' fill='none'/><polygon points='312.9,236.7 338.8,251.6 359.4,239.7 333.6,224.8' fill='rgb(155,155,155)' stroke='rgb(155,155,155)' stroke-width='0.6'/><path d='M312.9 236.7L338.8 251.6M338.8 251.6L359.4 239.7M359.4 239.7L333.6 224.8M333.6 224.8L312.9 236.7' stroke='#151515' stroke-width='1.7' stroke-linecap='round' fill='none'/><polygon points='333.6,224.8 359.4,239.7 359.4,209.9 333.6,195.0' fill='rgb(147,147,147)' stroke='rgb(147,147,147)' stroke-width='0.6'/><path d='M333.6 224.8L359.4 239.7M359.4 239.7L359.4 209.9M359.4 209.9L333.6 195.0M333.6 195.0L333.6 224.8' stroke='#151515' stroke-width='1.7' stroke-linecap='round' fill='none'/><polygon points='338.8,186.0 364.6,200.9 390.4,186.0 364.6,171.1' fill='rgb(155,155,155)' stroke='rgb(155,155,155)' stroke-width='0.6'/><path d='M338.8 186.0L364.6 200.9M364.6 200.9L390.4 186.0M390.4 186.0L364.6 171.1M364.6 171.1L338.8 186.0' stroke='#151515' stroke-width='1.7' stroke-linecap='round' fill='none'/><polygon points='364.6,171.1 390.4,186.0 390.4,156.2 364.6,141.3' fill='rgb(147,147,147)' stroke='rgb(147,147,147)' stroke-width='0.6'/><path d='M364.6 171.1L390.4 186.0M390.4 186.0L390.4 156.2M390.4 156.2L364.6 141.3M364.6 141.3L364.6 171.1' stroke='#151515' stroke-width='1.7' stroke-linecap='round' fill='none'/><polygon points='369.7,132.4 395.6,147.3 421.4,132.4 395.6,117.5' fill='rgb(155,155,155)' stroke='rgb(155,155,155)' stroke-width='0.6'/><path d='M369.7 132.4L395.6 147.3M395.6 147.3L421.4 132.4M421.4 132.4L395.6 117.5M395.6 117.5L369.7 132.4' stroke='#151515' stroke-width='1.7' stroke-linecap='round' fill='none'/><polygon points='395.6,117.5 421.4,132.4 421.4,108.5 395.6,93.6' fill='rgb(147,147,147)' stroke='rgb(147,147,147)' stroke-width='0.6'/><path d='M395.6 117.5L421.4 132.4M421.4 132.4L421.4 108.5M421.4 108.5L395.6 93.6M395.6 93.6L395.6 117.5' stroke='#151515' stroke-width='1.7' stroke-linecap='round' fill='none'/><polygon points='395.6,93.6 421.4,108.5 426.6,105.5 400.7,90.6' fill='rgb(155,155,155)' stroke='rgb(155,155,155)' stroke-width='0.6'/><path d='M395.6 93.6L421.4 108.5M426.6 105.5L400.7 90.6' stroke='#151515' stroke-width='1.7' stroke-linecap='round' fill='none'/><polygon points='343.9,290.4 364.6,278.5 364.6,248.7 343.9,260.6' fill='rgb(112,112,112)' stroke='rgb(112,112,112)' stroke-width='0.6'/><path d='M343.9 290.4L364.6 278.5M364.6 278.5L364.6 248.7M364.6 248.7L343.9 260.6M343.9 260.6L343.9 290.4' stroke='#151515' stroke-width='1.7' stroke-linecap='round' fill='none'/><polygon points='338.8,287.4 343.9,290.4 343.9,260.6 338.8,257.6' fill='rgb(147,147,147)' stroke='rgb(147,147,147)' stroke-width='0.6'/><path d='M343.9 290.4L343.9 260.6M338.8 257.6L338.8 287.4' stroke='#151515' stroke-width='1.7' stroke-linecap='round' fill='none'/><polygon points='369.7,239.7 395.6,224.8 395.6,195.0 369.7,209.9' fill='rgb(112,112,112)' stroke='rgb(112,112,112)' stroke-width='0.6'/><path d='M369.7 239.7L395.6 224.8M395.6 224.8L395.6 195.0M395.6 195.0L369.7 209.9M369.7 209.9L369.7 239.7' stroke='#151515' stroke-width='1.7' stroke-linecap='round' fill='none'/><polygon points='400.7,186.0 426.6,171.1 426.6,141.3 400.7,156.2' fill='rgb(112,112,112)' stroke='rgb(112,112,112)' stroke-width='0.6'/><path d='M400.7 186.0L426.6 171.1M426.6 171.1L426.6 141.3M426.6 141.3L400.7 156.2M400.7 156.2L400.7 186.0' stroke='#151515' stroke-width='1.7' stroke-linecap='round' fill='none'/><polygon points='431.7,132.4 457.5,117.5 457.5,93.6 431.7,108.5' fill='rgb(112,112,112)' stroke='rgb(112,112,112)' stroke-width='0.6'/><path d='M431.7 132.4L457.5 117.5M457.5 117.5L457.5 93.6M457.5 93.6L431.7 108.5M431.7 108.5L431.7 132.4' stroke='#151515' stroke-width='1.7' stroke-linecap='round' fill='none'/><polygon points='426.6,105.5 431.7,108.5 457.5,93.6 452.4,90.6' fill='rgb(155,155,155)' stroke='rgb(155,155,155)' stroke-width='0.6'/><path d='M431.7 108.5L457.5 93.6M452.4 90.6L426.6 105.5' stroke='#151515' stroke-width='1.7' stroke-linecap='round' fill='none'/><polygon points='364.6,308.3 385.2,296.4 385.2,290.4 364.6,302.3' fill='rgb(112,112,112)' stroke='rgb(112,112,112)' stroke-width='0.6'/><path d='M364.6 308.3L385.2 296.4M385.2 290.4L364.6 302.3M364.6 302.3L364.6 308.3' stroke='#151515' stroke-width='1.7' stroke-linecap='round' fill='none'/><polygon points='343.9,296.4 364.6,308.3 364.6,302.3 343.9,290.4' fill='rgb(147,147,147)' stroke='rgb(147,147,147)' stroke-width='0.6'/><path d='M343.9 296.4L364.6 308.3M364.6 308.3L364.6 302.3M364.6 302.3L343.9 290.4' stroke='#151515' stroke-width='1.7' stroke-linecap='round' fill='none'/><polygon points='343.9,290.4 364.6,302.3 385.2,290.4 364.6,278.5' fill='rgb(155,155,155)' stroke='rgb(155,155,155)' stroke-width='0.6'/><path d='M343.9 290.4L364.6 302.3M364.6 302.3L385.2 290.4M385.2 290.4L364.6 278.5M364.6 278.5L343.9 290.4' stroke='#151515' stroke-width='1.7' stroke-linecap='round' fill='none'/><polygon points='385.2,290.4 390.4,287.4 390.4,257.6 385.2,260.6' fill='rgb(112,112,112)' stroke='rgb(112,112,112)' stroke-width='0.6'/><path d='M390.4 287.4L390.4 257.6M385.2 260.6L385.2 290.4' stroke='#151515' stroke-width='1.7' stroke-linecap='round' fill='none'/><polygon points='364.6,278.5 385.2,290.4 385.2,260.6 364.6,248.7' fill='rgb(147,147,147)' stroke='rgb(147,147,147)' stroke-width='0.6'/><path d='M364.6 278.5L385.2 290.4M385.2 290.4L385.2 260.6M385.2 260.6L364.6 248.7M364.6 248.7L364.6 278.5' stroke='#151515' stroke-width='1.7' stroke-linecap='round' fill='none'/><polygon points='390.4,257.6 416.2,242.7 416.2,236.7 390.4,251.6' fill='rgb(112,112,112)' stroke='rgb(112,112,112)' stroke-width='0.6'/><path d='M390.4 257.6L416.2 242.7M416.2 236.7L390.4 251.6' stroke='#151515' stroke-width='1.7' stroke-linecap='round' fill='none'/><polygon points='369.7,239.7 390.4,251.6 416.2,236.7 395.6,224.8' fill='rgb(155,155,155)' stroke='rgb(155,155,155)' stroke-width='0.6'/><path d='M369.7 239.7L390.4 251.6M390.4 251.6L416.2 236.7M416.2 236.7L395.6 224.8M395.6 224.8L369.7 239.7' stroke='#151515' stroke-width='1.7' stroke-linecap='round' fill='none'/><polygon points='416.2,236.7 421.4,233.7 421.4,203.9 416.2,206.9' fill='rgb(112,112,112)' stroke='rgb(112,112,112)' stroke-width='0.6'/><path d='M421.4 233.7L421.4 203.9M416.2 206.9L416.2 236.7' stroke='#151515' stroke-width='1.7' stroke-linecap='round' fill='none'/><polygon points='395.6,224.8 416.2,236.7 416.2,206.9 395.6,195.0' fill='rgb(147,147,147)' stroke='rgb(147,147,147)' stroke-width='0.6'/><path d='M395.6 224.8L416.2 236.7M416.2 236.7L416.2 206.9M416.2 206.9L395.6 195.0M395.6 195.0L395.6 224.8' stroke='#151515' stroke-width='1.7' stroke-linecap='round' fill='none'/><polygon points='421.4,203.9 447.2,189.0 447.2,183.1 421.4,198.0' fill='rgb(112,112,112)' stroke='rgb(112,112,112)' stroke-width='0.6'/><path d='M421.4 203.9L447.2 189.0M447.2 183.1L421.4 198.0' stroke='#151515' stroke-width='1.7' stroke-linecap='round' fill='none'/><polygon points='400.7,186.0 421.4,198.0 447.2,183.1 426.6,171.1' fill='rgb(155,155,155)' stroke='rgb(155,155,155)' stroke-width='0.6'/><path d='M400.7 186.0L421.4 198.0M421.4 198.0L447.2 183.1M447.2 183.1L426.6 171.1M426.6 171.1L400.7 186.0' stroke='#151515' stroke-width='1.7' stroke-linecap='round' fill='none'/><polygon points='447.2,183.1 452.4,180.1 452.4,150.3 447.2,153.2' fill='rgb(112,112,112)' stroke='rgb(112,112,112)' stroke-width='0.6'/><path d='M452.4 180.1L452.4 150.3M447.2 153.2L447.2 183.1' stroke='#151515' stroke-width='1.7' stroke-linecap='round' fill='none'/><polygon points='426.6,171.1 447.2,183.1 447.2,153.2 426.6,141.3' fill='rgb(147,147,147)' stroke='rgb(147,147,147)' stroke-width='0.6'/><path d='M426.6 171.1L447.2 183.1M447.2 183.1L447.2 153.2M447.2 153.2L426.6 141.3M426.6 141.3L426.6 171.1' stroke='#151515' stroke-width='1.7' stroke-linecap='round' fill='none'/><polygon points='452.4,150.3 478.2,135.3 478.2,129.4 452.4,144.3' fill='rgb(112,112,112)' stroke='rgb(112,112,112)' stroke-width='0.6'/><path d='M452.4 150.3L478.2 135.3M478.2 129.4L452.4 144.3' stroke='#151515' stroke-width='1.7' stroke-linecap='round' fill='none'/><polygon points='431.7,132.4 452.4,144.3 478.2,129.4 457.5,117.5' fill='rgb(155,155,155)' stroke='rgb(155,155,155)' stroke-width='0.6'/><path d='M431.7 132.4L452.4 144.3M452.4 144.3L478.2 129.4M478.2 129.4L457.5 117.5M457.5 117.5L431.7 132.4' stroke='#151515' stroke-width='1.7' stroke-linecap='round' fill='none'/><polygon points='478.2,129.4 483.4,126.4 483.4,102.5 478.2,105.5' fill='rgb(112,112,112)' stroke='rgb(112,112,112)' stroke-width='0.6'/><path d='M483.4 126.4L483.4 102.5M483.4 102.5L478.2 105.5M478.2 105.5L478.2 129.4' stroke='#151515' stroke-width='1.7' stroke-linecap='round' fill='none'/><polygon points='457.5,117.5 478.2,129.4 478.2,105.5 457.5,93.6' fill='rgb(147,147,147)' stroke='rgb(147,147,147)' stroke-width='0.6'/><path d='M457.5 117.5L478.2 129.4M478.2 129.4L478.2 105.5M478.2 105.5L457.5 93.6M457.5 93.6L457.5 117.5' stroke='#151515' stroke-width='1.7' stroke-linecap='round' fill='none'/><polygon points='457.5,93.6 478.2,105.5 483.4,102.5 462.7,90.6' fill='rgb(155,155,155)' stroke='rgb(155,155,155)' stroke-width='0.6'/><path d='M457.5 93.6L478.2 105.5M478.2 105.5L483.4 102.5M483.4 102.5L462.7 90.6' stroke='#151515' stroke-width='1.7' stroke-linecap='round' fill='none'/><polygon points='276.8,150.3 281.9,153.2 281.9,147.3 276.8,144.3' fill='rgb(147,147,147)' stroke='rgb(147,147,147)' stroke-width='0.6'/><polygon points='297.4,108.5 302.6,111.5 307.8,108.5 302.6,105.5' fill='rgb(155,155,155)' stroke='rgb(155,155,155)' stroke-width='0.6'/><polygon points='307.8,203.9 312.9,206.9 312.9,200.9 307.8,198.0' fill='rgb(147,147,147)' stroke='rgb(147,147,147)' stroke-width='0.6'/><polygon points='359.4,108.5 364.6,111.5 369.7,108.5 364.6,105.5' fill='rgb(155,155,155)' stroke='rgb(155,155,155)' stroke-width='0.6'/><polygon points='338.8,257.6 343.9,260.6 343.9,254.6 338.8,251.6' fill='rgb(147,147,147)' stroke='rgb(147,147,147)' stroke-width='0.6'/><polygon points='421.4,108.5 426.6,111.5 431.7,108.5 426.6,105.5' fill='rgb(155,155,155)' stroke='rgb(155,155,155)' stroke-width='0.6'/><polygon points='385.2,260.6 390.4,257.6 390.4,251.6 385.2,254.6' fill='rgb(112,112,112)' stroke='rgb(112,112,112)' stroke-width='0.6'/><polygon points='416.2,206.9 421.4,203.9 421.4,198.0 416.2,200.9' fill='rgb(112,112,112)' stroke='rgb(112,112,112)' stroke-width='0.6'/><polygon points='447.2,153.2 452.4,150.3 452.4,144.3 447.2,147.3' fill='rgb(112,112,112)' stroke='rgb(112,112,112)' stroke-width='0.6'/><polygon points='281.9,147.3 302.6,135.3 302.6,111.5 281.9,123.4' fill='rgb(112,112,112)' stroke='rgb(112,112,112)' stroke-width='0.6'/><path d='M281.9 147.3L302.6 135.3M302.6 135.3L302.6 111.5M302.6 111.5L281.9 123.4M281.9 123.4L281.9 147.3' stroke='#151515' stroke-width='1.7' stroke-linecap='round' fill='none'/><polygon points='276.8,144.3 281.9,147.3 281.9,123.4 276.8,120.4' fill='rgb(147,147,147)' stroke='rgb(147,147,147)' stroke-width='0.6'/><path d='M281.9 147.3L281.9 123.4M281.9 123.4L276.8 120.4M276.8 120.4L276.8 144.3' stroke='#151515' stroke-width='1.7' stroke-linecap='round' fill='none'/><polygon points='276.8,120.4 281.9,123.4 302.6,111.5 297.4,108.5' fill='rgb(155,155,155)' stroke='rgb(155,155,155)' stroke-width='0.6'/><path d='M276.8 120.4L281.9 123.4M281.9 123.4L302.6 111.5M297.4 108.5L276.8 120.4' stroke='#151515' stroke-width='1.7' stroke-linecap='round' fill='none'/><polygon points='281.9,153.2 307.8,168.1 307.8,162.2 281.9,147.3' fill='rgb(147,147,147)' stroke='rgb(147,147,147)' stroke-width='0.6'/><path d='M281.9 153.2L307.8 168.1M307.8 162.2L281.9 147.3' stroke='#151515' stroke-width='1.7' stroke-linecap='round' fill='none'/><polygon points='281.9,147.3 307.8,162.2 328.4,150.3 302.6,135.3' fill='rgb(155,155,155)' stroke='rgb(155,155,155)' stroke-width='0.6'/><path d='M281.9 147.3L307.8 162.2M307.8 162.2L328.4 150.3M328.4 150.3L302.6 135.3M302.6 135.3L281.9 147.3' stroke='#151515' stroke-width='1.7' stroke-linecap='round' fill='none'/><polygon points='302.6,135.3 328.4,150.3 328.4,126.4 302.6,111.5' fill='rgb(147,147,147)' stroke='rgb(147,147,147)' stroke-width='0.6'/><path d='M302.6 135.3L328.4 150.3M328.4 150.3L328.4 126.4M328.4 126.4L302.6 111.5M302.6 111.5L302.6 135.3' stroke='#151515' stroke-width='1.7' stroke-linecap='round' fill='none'/><polygon points='302.6,111.5 328.4,126.4 333.6,123.4 307.8,108.5' fill='rgb(155,155,155)' stroke='rgb(155,155,155)' stroke-width='0.6'/><path d='M302.6 111.5L328.4 126.4M333.6 123.4L307.8 108.5' stroke='#151515' stroke-width='1.7' stroke-linecap='round' fill='none'/><polygon points='312.9,200.9 333.6,189.0 333.6,159.2 312.9,171.1' fill='rgb(112,112,112)' stroke='rgb(112,112,112)' stroke-width='0.6'/><path d='M312.9 200.9L333.6 189.0M333.6 189.0L333.6 159.2M333.6 159.2L312.9 171.1M312.9 171.1L312.9 200.9' stroke='#151515' stroke-width='1.7' stroke-linecap='round' fill='none'/><polygon points='307.8,198.0 312.9,200.9 312.9,171.1 307.8,168.1' fill='rgb(147,147,147)' stroke='rgb(147,147,147)' stroke-width='0.6'/><path d='M312.9 200.9L312.9 171.1M307.8 168.1L307.8 198.0' stroke='#151515' stroke-width='1.7' stroke-linecap='round' fill='none'/><polygon points='338.8,150.3 364.6,135.3 364.6,111.5 338.8,126.4' fill='rgb(112,112,112)' stroke='rgb(112,112,112)' stroke-width='0.6'/><path d='M338.8 150.3L364.6 135.3M364.6 135.3L364.6 111.5M364.6 111.5L338.8 126.4M338.8 126.4L338.8 150.3' stroke='#151515' stroke-width='1.7' stroke-linecap='round' fill='none'/><polygon points='333.6,123.4 338.8,126.4 364.6,111.5 359.4,108.5' fill='rgb(155,155,155)' stroke='rgb(155,155,155)' stroke-width='0.6'/><path d='M338.8 126.4L364.6 111.5M359.4 108.5L333.6 123.4' stroke='#151515' stroke-width='1.7' stroke-linecap='round' fill='none'/><polygon points='312.9,206.9 338.8,221.8 338.8,215.9 312.9,200.9' fill='rgb(147,147,147)' stroke='rgb(147,147,147)' stroke-width='0.6'/><path d='M312.9 206.9L338.8 221.8M338.8 215.9L312.9 200.9' stroke='#151515' stroke-width='1.7' stroke-linecap='round' fill='none'/><polygon points='312.9,200.9 338.8,215.9 359.4,203.9 333.6,189.0' fill='rgb(155,155,155)' stroke='rgb(155,155,155)' stroke-width='0.6'/><path d='M312.9 200.9L338.8 215.9M338.8 215.9L359.4 203.9M359.4 203.9L333.6 189.0M333.6 189.0L312.9 200.9' stroke='#151515' stroke-width='1.7' stroke-linecap='round' fill='none'/><polygon points='333.6,189.0 359.4,203.9 359.4,174.1 333.6,159.2' fill='rgb(147,147,147)' stroke='rgb(147,147,147)' stroke-width='0.6'/><path d='M333.6 189.0L359.4 203.9M359.4 203.9L359.4 174.1M359.4 174.1L333.6 159.2M333.6 159.2L333.6 189.0' stroke='#151515' stroke-width='1.7' stroke-linecap='round' fill='none'/><polygon points='338.8,150.3 364.6,165.2 390.4,150.3 364.6,135.3' fill='rgb(155,155,155)' stroke='rgb(155,155,155)' stroke-width='0.6'/><path d='M338.8 150.3L364.6 165.2M364.6 165.2L390.4 150.3M390.4 150.3L364.6 135.3M364.6 135.3L338.8 150.3' stroke='#151515' stroke-width='1.7' stroke-linecap='round' fill='none'/><polygon points='364.6,135.3 390.4,150.3 390.4,126.4 364.6,111.5' fill='rgb(147,147,147)' stroke='rgb(147,147,147)' stroke-width='0.6'/><path d='M364.6 135.3L390.4 150.3M390.4 150.3L390.4 126.4M390.4 126.4L364.6 111.5M364.6 111.5L364.6 135.3' stroke='#151515' stroke-width='1.7' stroke-linecap='round' fill='none'/><polygon points='364.6,111.5 390.4,126.4 395.6,123.4 369.7,108.5' fill='rgb(155,155,155)' stroke='rgb(155,155,155)' stroke-width='0.6'/><path d='M364.6 111.5L390.4 126.4M395.6 123.4L369.7 108.5' stroke='#151515' stroke-width='1.7' stroke-linecap='round' fill='none'/><polygon points='343.9,254.6 364.6,242.7 364.6,212.9 343.9,224.8' fill='rgb(112,112,112)' stroke='rgb(112,112,112)' stroke-width='0.6'/><path d='M343.9 254.6L364.6 242.7M364.6 242.7L364.6 212.9M364.6 212.9L343.9 224.8M343.9 224.8L343.9 254.6' stroke='#151515' stroke-width='1.7' stroke-linecap='round' fill='none'/><polygon points='338.8,251.6 343.9,254.6 343.9,224.8 338.8,221.8' fill='rgb(147,147,147)' stroke='rgb(147,147,147)' stroke-width='0.6'/><path d='M343.9 254.6L343.9 224.8M338.8 221.8L338.8 251.6' stroke='#151515' stroke-width='1.7' stroke-linecap='round' fill='none'/><polygon points='369.7,203.9 395.6,189.0 395.6,159.2 369.7,174.1' fill='rgb(112,112,112)' stroke='rgb(112,112,112)' stroke-width='0.6'/><path d='M369.7 203.9L395.6 189.0M395.6 189.0L395.6 159.2M395.6 159.2L369.7 174.1M369.7 174.1L369.7 203.9' stroke='#151515' stroke-width='1.7' stroke-linecap='round' fill='none'/><polygon points='400.7,150.3 426.6,135.3 426.6,111.5 400.7,126.4' fill='rgb(112,112,112)' stroke='rgb(112,112,112)' stroke-width='0.6'/><path d='M400.7 150.3L426.6 135.3M426.6 135.3L426.6 111.5M426.6 111.5L400.7 126.4M400.7 126.4L400.7 150.3' stroke='#151515' stroke-width='1.7' stroke-linecap='round' fill='none'/><polygon points='395.6,123.4 400.7,126.4 426.6,111.5 421.4,108.5' fill='rgb(155,155,155)' stroke='rgb(155,155,155)' stroke-width='0.6'/><path d='M400.7 126.4L426.6 111.5M421.4 108.5L395.6 123.4' stroke='#151515' stroke-width='1.7' stroke-linecap='round' fill='none'/><polygon points='364.6,272.5 385.2,260.6 385.2,254.6 364.6,266.5' fill='rgb(112,112,112)' stroke='rgb(112,112,112)' stroke-width='0.6'/><path d='M364.6 272.5L385.2 260.6M385.2 254.6L364.6 266.5M364.6 266.5L364.6 272.5' stroke='#151515' stroke-width='1.7' stroke-linecap='round' fill='none'/><polygon points='343.9,260.6 364.6,272.5 364.6,266.5 343.9,254.6' fill='rgb(147,147,147)' stroke='rgb(147,147,147)' stroke-width='0.6'/><path d='M343.9 260.6L364.6 272.5M364.6 272.5L364.6 266.5M364.6 266.5L343.9 254.6' stroke='#151515' stroke-width='1.7' stroke-linecap='round' fill='none'/><polygon points='343.9,254.6 364.6,266.5 385.2,254.6 364.6,242.7' fill='rgb(155,155,155)' stroke='rgb(155,155,155)' stroke-width='0.6'/><path d='M343.9 254.6L364.6 266.5M364.6 266.5L385.2 254.6M385.2 254.6L364.6 242.7M364.6 242.7L343.9 254.6' stroke='#151515' stroke-width='1.7' stroke-linecap='round' fill='none'/><polygon points='385.2,254.6 390.4,251.6 390.4,221.8 385.2,224.8' fill='rgb(112,112,112)' stroke='rgb(112,112,112)' stroke-width='0.6'/><path d='M390.4 251.6L390.4 221.8M385.2 224.8L385.2 254.6' stroke='#151515' stroke-width='1.7' stroke-linecap='round' fill='none'/><polygon points='364.6,242.7 385.2,254.6 385.2,224.8 364.6,212.9' fill='rgb(147,147,147)' stroke='rgb(147,147,147)' stroke-width='0.6'/><path d='M364.6 242.7L385.2 254.6M385.2 254.6L385.2 224.8M385.2 224.8L364.6 212.9M364.6 212.9L364.6 242.7' stroke='#151515' stroke-width='1.7' stroke-linecap='round' fill='none'/><polygon points='390.4,221.8 416.2,206.9 416.2,200.9 390.4,215.9' fill='rgb(112,112,112)' stroke='rgb(112,112,112)' stroke-width='0.6'/><path d='M390.4 221.8L416.2 206.9M416.2 200.9L390.4 215.9' stroke='#151515' stroke-width='1.7' stroke-linecap='round' fill='none'/><polygon points='369.7,203.9 390.4,215.9 416.2,200.9 395.6,189.0' fill='rgb(155,155,155)' stroke='rgb(155,155,155)' stroke-width='0.6'/><path d='M369.7 203.9L390.4 215.9M390.4 215.9L416.2 200.9M416.2 200.9L395.6 189.0M395.6 189.0L369.7 203.9' stroke='#151515' stroke-width='1.7' stroke-linecap='round' fill='none'/><polygon points='416.2,200.9 421.4,198.0 421.4,168.1 416.2,171.1' fill='rgb(112,112,112)' stroke='rgb(112,112,112)' stroke-width='0.6'/><path d='M421.4 198.0L421.4 168.1M416.2 171.1L416.2 200.9' stroke='#151515' stroke-width='1.7' stroke-linecap='round' fill='none'/><polygon points='395.6,189.0 416.2,200.9 416.2,171.1 395.6,159.2' fill='rgb(147,147,147)' stroke='rgb(147,147,147)' stroke-width='0.6'/><path d='M395.6 189.0L416.2 200.9M416.2 200.9L416.2 171.1M416.2 171.1L395.6 159.2M395.6 159.2L395.6 189.0' stroke='#151515' stroke-width='1.7' stroke-linecap='round' fill='none'/><polygon points='421.4,168.1 447.2,153.2 447.2,147.3 421.4,162.2' fill='rgb(112,112,112)' stroke='rgb(112,112,112)' stroke-width='0.6'/><path d='M421.4 168.1L447.2 153.2M447.2 147.3L421.4 162.2' stroke='#151515' stroke-width='1.7' stroke-linecap='round' fill='none'/><polygon points='400.7,150.3 421.4,162.2 447.2,147.3 426.6,135.3' fill='rgb(155,155,155)' stroke='rgb(155,155,155)' stroke-width='0.6'/><path d='M400.7 150.3L421.4 162.2M421.4 162.2L447.2 147.3M447.2 147.3L426.6 135.3M426.6 135.3L400.7 150.3' stroke='#151515' stroke-width='1.7' stroke-linecap='round' fill='none'/><polygon points='447.2,147.3 452.4,144.3 452.4,120.4 447.2,123.4' fill='rgb(112,112,112)' stroke='rgb(112,112,112)' stroke-width='0.6'/><path d='M452.4 144.3L452.4 120.4M452.4 120.4L447.2 123.4M447.2 123.4L447.2 147.3' stroke='#151515' stroke-width='1.7' stroke-linecap='round' fill='none'/><polygon points='426.6,135.3 447.2,147.3 447.2,123.4 426.6,111.5' fill='rgb(147,147,147)' stroke='rgb(147,147,147)' stroke-width='0.6'/><path d='M426.6 135.3L447.2 147.3M447.2 147.3L447.2 123.4M447.2 123.4L426.6 111.5M426.6 111.5L426.6 135.3' stroke='#151515' stroke-width='1.7' stroke-linecap='round' fill='none'/><polygon points='426.6,111.5 447.2,123.4 452.4,120.4 431.7,108.5' fill='rgb(155,155,155)' stroke='rgb(155,155,155)' stroke-width='0.6'/><path d='M426.6 111.5L447.2 123.4M447.2 123.4L452.4 120.4M452.4 120.4L431.7 108.5' stroke='#151515' stroke-width='1.7' stroke-linecap='round' fill='none'/><polygon points='307.8,168.1 312.9,171.1 312.9,165.2 307.8,162.2' fill='rgb(147,147,147)' stroke='rgb(147,147,147)' stroke-width='0.6'/><polygon points='328.4,126.4 333.6,129.4 338.8,126.4 333.6,123.4' fill='rgb(155,155,155)' stroke='rgb(155,155,155)' stroke-width='0.6'/><polygon points='338.8,221.8 343.9,224.8 343.9,218.8 338.8,215.9' fill='rgb(147,147,147)' stroke='rgb(147,147,147)' stroke-width='0.6'/><polygon points='390.4,126.4 395.6,129.4 400.7,126.4 395.6,123.4' fill='rgb(155,155,155)' stroke='rgb(155,155,155)' stroke-width='0.6'/><polygon points='385.2,224.8 390.4,221.8 390.4,215.9 385.2,218.8' fill='rgb(112,112,112)' stroke='rgb(112,112,112)' stroke-width='0.6'/><polygon points='416.2,171.1 421.4,168.1 421.4,162.2 416.2,165.2' fill='rgb(112,112,112)' stroke='rgb(112,112,112)' stroke-width='0.6'/><polygon points='312.9,165.2 333.6,153.2 333.6,129.4 312.9,141.3' fill='rgb(112,112,112)' stroke='rgb(112,112,112)' stroke-width='0.6'/><path d='M312.9 165.2L333.6 153.2M333.6 153.2L333.6 129.4M333.6 129.4L312.9 141.3M312.9 141.3L312.9 165.2' stroke='#151515' stroke-width='1.7' stroke-linecap='round' fill='none'/><polygon points='307.8,162.2 312.9,165.2 312.9,141.3 307.8,138.3' fill='rgb(147,147,147)' stroke='rgb(147,147,147)' stroke-width='0.6'/><path d='M312.9 165.2L312.9 141.3M312.9 141.3L307.8 138.3M307.8 138.3L307.8 162.2' stroke='#151515' stroke-width='1.7' stroke-linecap='round' fill='none'/><polygon points='307.8,138.3 312.9,141.3 333.6,129.4 328.4,126.4' fill='rgb(155,155,155)' stroke='rgb(155,155,155)' stroke-width='0.6'/><path d='M307.8 138.3L312.9 141.3M312.9 141.3L333.6 129.4M328.4 126.4L307.8 138.3' stroke='#151515' stroke-width='1.7' stroke-linecap='round' fill='none'/><polygon points='312.9,171.1 338.8,186.0 338.8,180.1 312.9,165.2' fill='rgb(147,147,147)' stroke='rgb(147,147,147)' stroke-width='0.6'/><path d='M312.9 171.1L338.8 186.0M338.8 180.1L312.9 165.2' stroke='#151515' stroke-width='1.7' stroke-linecap='round' fill='none'/><polygon points='312.9,165.2 338.8,180.1 359.4,168.1 333.6,153.2' fill='rgb(155,155,155)' stroke='rgb(155,155,155)' stroke-width='0.6'/><path d='M312.9 165.2L338.8 180.1M338.8 180.1L359.4 168.1M359.4 168.1L333.6 153.2M333.6 153.2L312.9 165.2' stroke='#151515' stroke-width='1.7' stroke-linecap='round' fill='none'/><polygon points='333.6,153.2 359.4,168.1 359.4,144.3 333.6,129.4' fill='rgb(147,147,147)' stroke='rgb(147,147,147)' stroke-width='0.6'/><path d='M333.6 153.2L359.4 168.1M359.4 168.1L359.4 144.3M359.4 144.3L333.6 129.4M333.6 129.4L333.6 153.2' stroke='#151515' stroke-width='1.7' stroke-linecap='round' fill='none'/><polygon points='333.6,129.4 359.4,144.3 364.6,141.3 338.8,126.4' fill='rgb(155,155,155)' stroke='rgb(155,155,155)' stroke-width='0.6'/><path d='M333.6 129.4L359.4 144.3M364.6 141.3L338.8 126.4' stroke='#151515' stroke-width='1.7' stroke-linecap='round' fill='none'/><polygon points='343.9,218.8 364.6,206.9 364.6,177.1 343.9,189.0' fill='rgb(112,112,112)' stroke='rgb(112,112,112)' stroke-width='0.6'/><path d='M343.9 218.8L364.6 206.9M364.6 206.9L364.6 177.1M364.6 177.1L343.9 189.0M343.9 189.0L343.9 218.8' stroke='#151515' stroke-width='1.7' stroke-linecap='round' fill='none'/><polygon points='338.8,215.9 343.9,218.8 343.9,189.0 338.8,186.0' fill='rgb(147,147,147)' stroke='rgb(147,147,147)' stroke-width='0.6'/><path d='M343.9 218.8L343.9 189.0M338.8 186.0L338.8 215.9' stroke='#151515' stroke-width='1.7' stroke-linecap='round' fill='none'/><polygon points='369.7,168.1 395.6,153.2 395.6,129.4 369.7,144.3' fill='rgb(112,112,112)' stroke='rgb(112,112,112)' stroke-width='0.6'/><path d='M369.7 168.1L395.6 153.2M395.6 153.2L395.6 129.4M395.6 129.4L369.7 144.3M369.7 144.3L369.7 168.1' stroke='#151515' stroke-width='1.7' stroke-linecap='round' fill='none'/><polygon points='364.6,141.3 369.7,144.3 395.6,129.4 390.4,126.4' fill='rgb(155,155,155)' stroke='rgb(155,155,155)' stroke-width='0.6'/><path d='M369.7 144.3L395.6 129.4M390.4 126.4L364.6 141.3' stroke='#151515' stroke-width='1.7' stroke-linecap='round' fill='none'/><polygon points='364.6,236.7 385.2,224.8 385.2,218.8 364.6,230.8' fill='rgb(112,112,112)' stroke='rgb(112,112,112)' stroke-width='0.6'/><path d='M364.6 236.7L385.2 224.8M385.2 218.8L364.6 230.8M364.6 230.8L364.6 236.7' stroke='#151515' stroke-width='1.7' stroke-linecap='round' fill='none'/><polygon points='343.9,224.8 364.6,236.7 364.6,230.8 343.9,218.8' fill='rgb(147,147,147)' stroke='rgb(147,147,147)' stroke-width='0.6'/><path d='M343.9 224.8L364.6 236.7M364.6 236.7L364.6 230.8M364.6 230.8L343.9 218.8' stroke='#151515' stroke-width='1.7' stroke-linecap='round' fill='none'/><polygon points='343.9,218.8 364.6,230.8 385.2,218.8 364.6,206.9' fill='rgb(155,155,155)' stroke='rgb(155,155,155)' stroke-width='0.6'/><path d='M343.9 218.8L364.6 230.8M364.6 230.8L385.2 218.8M385.2 218.8L364.6 206.9M364.6 206.9L343.9 218.8' stroke='#151515' stroke-width='1.7' stroke-linecap='round' fill='none'/><polygon points='385.2,218.8 390.4,215.9 390.4,186.0 385.2,189.0' fill='rgb(112,112,112)' stroke='rgb(112,112,112)' stroke-width='0.6'/><path d='M390.4 215.9L390.4 186.0M385.2 189.0L385.2 218.8' stroke='#151515' stroke-width='1.7' stroke-linecap='round' fill='none'/><polygon points='364.6,206.9 385.2,218.8 385.2,189.0 364.6,177.1' fill='rgb(147,147,147)' stroke='rgb(147,147,147)' stroke-width='0.6'/><path d='M364.6 206.9L385.2 218.8M385.2 218.8L385.2 189.0M385.2 189.0L364.6 177.1M364.6 177.1L364.6 206.9' stroke='#151515' stroke-width='1.7' stroke-linecap='round' fill='none'/><polygon points='390.4,186.0 416.2,171.1 416.2,165.2 390.4,180.1' fill='rgb(112,112,112)' stroke='rgb(112,112,112)' stroke-width='0.6'/><path d='M390.4 186.0L416.2 171.1M416.2 165.2L390.4 180.1' stroke='#151515' stroke-width='1.7' stroke-linecap='round' fill='none'/><polygon points='369.7,168.1 390.4,180.1 416.2,165.2 395.6,153.2' fill='rgb(155,155,155)' stroke='rgb(155,155,155)' stroke-width='0.6'/><path d='M369.7 168.1L390.4 180.1M390.4 180.1L416.2 165.2M416.2 165.2L395.6 153.2M395.6 153.2L369.7 168.1' stroke='#151515' stroke-width='1.7' stroke-linecap='round' fill='none'/><polygon points='416.2,165.2 421.4,162.2 421.4,138.3 416.2,141.3' fill='rgb(112,112,112)' stroke='rgb(112,112,112)' stroke-width='0.6'/><path d='M421.4 162.2L421.4 138.3M421.4 138.3L416.2 141.3M416.2 141.3L416.2 165.2' stroke='#151515' stroke-width='1.7' stroke-linecap='round' fill='none'/><polygon points='395.6,153.2 416.2,165.2 416.2,141.3 395.6,129.4' fill='rgb(147,147,147)' stroke='rgb(147,147,147)' stroke-width='0.6'/><path d='M395.6 153.2L416.2 165.2M416.2 165.2L416.2 141.3M416.2 141.3L395.6 129.4M395.6 129.4L395.6 153.2' stroke='#151515' stroke-width='1.7' stroke-linecap='round' fill='none'/><polygon points='395.6,129.4 416.2,141.3 421.4,138.3 400.7,126.4' fill='rgb(155,155,155)' stroke='rgb(155,155,155)' stroke-width='0.6'/><path d='M395.6 129.4L416.2 141.3M416.2 141.3L421.4 138.3M421.4 138.3L400.7 126.4' stroke='#151515' stroke-width='1.7' stroke-linecap='round' fill='none'/><polygon points='338.8,186.0 343.9,189.0 343.9,183.1 338.8,180.1' fill='rgb(147,147,147)' stroke='rgb(147,147,147)' stroke-width='0.6'/><polygon points='359.4,144.3 364.6,147.3 369.7,144.3 364.6,141.3' fill='rgb(155,155,155)' stroke='rgb(155,155,155)' stroke-width='0.6'/><polygon points='385.2,189.0 390.4,186.0 390.4,180.1 385.2,183.1' fill='rgb(112,112,112)' stroke='rgb(112,112,112)' stroke-width='0.6'/><polygon points='343.9,183.1 364.6,171.1 364.6,147.3 343.9,159.2' fill='rgb(112,112,112)' stroke='rgb(112,112,112)' stroke-width='0.6'/><path d='M343.9 183.1L364.6 171.1M364.6 171.1L364.6 147.3M364.6 147.3L343.9 159.2M343.9 159.2L343.9 183.1' stroke='#151515' stroke-width='1.7' stroke-linecap='round' fill='none'/><polygon points='338.8,180.1 343.9,183.1 343.9,159.2 338.8,156.2' fill='rgb(147,147,147)' stroke='rgb(147,147,147)' stroke-width='0.6'/><path d='M343.9 183.1L343.9 159.2M343.9 159.2L338.8 156.2M338.8 156.2L338.8 180.1' stroke='#151515' stroke-width='1.7' stroke-linecap='round' fill='none'/><polygon points='338.8,156.2 343.9,159.2 364.6,147.3 359.4,144.3' fill='rgb(155,155,155)' stroke='rgb(155,155,155)' stroke-width='0.6'/><path d='M338.8 156.2L343.9 159.2M343.9 159.2L364.6 147.3M359.4 144.3L338.8 156.2' stroke='#151515' stroke-width='1.7' stroke-linecap='round' fill='none'/><polygon points='364.6,200.9 385.2,189.0 385.2,183.1 364.6,195.0' fill='rgb(112,112,112)' stroke='rgb(112,112,112)' stroke-width='0.6'/><path d='M364.6 200.9L385.2 189.0M385.2 183.1L364.6 195.0M364.6 195.0L364.6 200.9' stroke='#151515' stroke-width='1.7' stroke-linecap='round' fill='none'/><polygon points='343.9,189.0 364.6,200.9 364.6,195.0 343.9,183.1' fill='rgb(147,147,147)' stroke='rgb(147,147,147)' stroke-width='0.6'/><path d='M343.9 189.0L364.6 200.9M364.6 200.9L364.6 195.0M364.6 195.0L343.9 183.1' stroke='#151515' stroke-width='1.7' stroke-linecap='round' fill='none'/><polygon points='343.9,183.1 364.6,195.0 385.2,183.1 364.6,171.1' fill='rgb(155,155,155)' stroke='rgb(155,155,155)' stroke-width='0.6'/><path d='M343.9 183.1L364.6 195.0M364.6 195.0L385.2 183.1M385.2 183.1L364.6 171.1M364.6 171.1L343.9 183.1' stroke='#151515' stroke-width='1.7' stroke-linecap='round' fill='none'/><polygon points='385.2,183.1 390.4,180.1 390.4,156.2 385.2,159.2' fill='rgb(112,112,112)' stroke='rgb(112,112,112)' stroke-width='0.6'/><path d='M390.4 180.1L390.4 156.2M390.4 156.2L385.2 159.2M385.2 159.2L385.2 183.1' stroke='#151515' stroke-width='1.7' stroke-linecap='round' fill='none'/><polygon points='364.6,171.1 385.2,183.1 385.2,159.2 364.6,147.3' fill='rgb(147,147,147)' stroke='rgb(147,147,147)' stroke-width='0.6'/><path d='M364.6 171.1L385.2 183.1M385.2 183.1L385.2 159.2M385.2 159.2L364.6 147.3M364.6 147.3L364.6 171.1' stroke='#151515' stroke-width='1.7' stroke-linecap='round' fill='none'/><polygon points='364.6,147.3 385.2,159.2 390.4,156.2 369.7,144.3' fill='rgb(155,155,155)' stroke='rgb(155,155,155)' stroke-width='0.6'/><path d='M364.6 147.3L385.2 159.2M385.2 159.2L390.4 156.2M390.4 156.2L369.7 144.3' stroke='#151515' stroke-width='1.7' stroke-linecap='round' fill='none'/><path d='M345.6 21.8L363.5 33' stroke='#f0e000' stroke-width='1.6'/></svg>
<svg class='a' style='left:422px;top:119px' width='744' height='712'><path d='M390 181L382 248M192 260L232 280M241 454L296 411' stroke='#8c8a80' stroke-width='1.3' fill='none'/><polygon points='390.4,158.0 402.5,164.4 402.0,176.5 391.8,183.8 380.2,177.5 380.7,167.3' fill='#e9e9e9'/><polygon points='393.3,170.7 402.5,164.4 402.0,176.5 391.8,183.8' fill='#cbcbcb'/><polygon points='184.9,243.6 197.0,250.0 196.5,262.1 186.3,269.4 174.7,263.1 175.2,252.9' fill='#e9e9e9'/><polygon points='187.8,256.3 197.0,250.0 196.5,262.1 186.3,269.4' fill='#cbcbcb'/><polygon points='229.4,448.0 241.5,454.4 241.0,466.5 230.8,473.8 219.2,467.5 219.7,457.3' fill='#e9e9e9'/><polygon points='232.3,460.7 241.5,454.4 241.0,466.5 230.8,473.8' fill='#cbcbcb'/><polygon points='236.3,274.3 315.0,311.0 300.0,329.0 230.8,293.1' fill='#e4e4e4' stroke='#e4e4e4' stroke-width='3' stroke-linejoin='round'/><path d='M467.7 154.9L278.4 294.6M467.7 154.9L491.8 167.9M491.8 167.9L464.8 414.7M440.7 401.7L251.4 541.4M440.7 401.7L464.8 414.7M464.8 414.7L275.4 554.4M278.4 294.6L251.4 541.4M278.4 294.6L302.4 307.6M251.4 541.4L275.4 554.4' stroke='#f4f4f4' stroke-width='1.1' fill='none'/><polygon points='457.0,361.7 429.1,382.6 452.2,394.9 480.2,374.0' fill='rgb(155,155,155)' stroke='rgb(155,155,155)' stroke-width='0.6'/><path d='M429.1 382.6L452.2 394.9M452.2 394.9L480.2 374.0M480.2 374.0L457.0 361.7' stroke='#151515' stroke-width='1.7' stroke-linecap='round' fill='none'/><polygon points='488.4,388.1 460.4,409.0 456.4,445.6 484.4,424.7' fill='rgb(74,74,74)' stroke='rgb(74,74,74)' stroke-width='0.6'/><path d='M488.4 388.1L460.4 409.0M460.4 409.0L456.4 445.6M456.4 445.6L484.4 424.7M484.4 424.7L488.4 388.1' stroke='#151515' stroke-width='1.7' stroke-linecap='round' fill='none'/><polygon points='421.1,397.0 417.1,433.6 440.2,445.9 444.2,409.3' fill='rgb(155,155,155)' stroke='rgb(155,155,155)' stroke-width='0.6'/><path d='M417.1 433.6L440.2 445.9M440.2 445.9L444.2 409.3M444.2 409.3L421.1 397.0' stroke='#151515' stroke-width='1.7' stroke-linecap='round' fill='none'/><polygon points='463.0,306.8 435.1,327.7 458.2,340.0 486.2,319.1' fill='rgb(155,155,155)' stroke='rgb(155,155,155)' stroke-width='0.6'/><path d='M435.1 327.7L458.2 340.0M458.2 340.0L486.2 319.1M486.2 319.1L463.0 306.8' stroke='#151515' stroke-width='1.7' stroke-linecap='round' fill='none'/><polygon points='494.4,333.2 466.4,354.1 461.4,399.9 489.4,379.0' fill='rgb(74,74,74)' stroke='rgb(74,74,74)' stroke-width='0.6'/><path d='M494.4 333.2L466.4 354.1M466.4 354.1L461.4 399.9M461.4 399.9L489.4 379.0M489.4 379.0L494.4 333.2' stroke='#151515' stroke-width='1.7' stroke-linecap='round' fill='none'/><polygon points='489.4,379.0 461.4,399.9 507.7,424.6 535.7,403.7' fill='rgb(155,155,155)' stroke='rgb(155,155,155)' stroke-width='0.6'/><path d='M489.4 379.0L461.4 399.9M461.4 399.9L507.7 424.6M507.7 424.6L535.7 403.7M535.7 403.7L489.4 379.0' stroke='#151515' stroke-width='1.7' stroke-linecap='round' fill='none'/><polygon points='543.9,417.8 515.9,438.7 511.9,475.3 539.9,454.4' fill='rgb(74,74,74)' stroke='rgb(74,74,74)' stroke-width='0.6'/><path d='M543.9 417.8L515.9 438.7M515.9 438.7L511.9 475.3M511.9 475.3L539.9 454.4M539.9 454.4L543.9 417.8' stroke='#151515' stroke-width='1.7' stroke-linecap='round' fill='none'/><polygon points='427.1,342.0 422.1,387.8 445.2,400.2 450.2,354.4' fill='rgb(155,155,155)' stroke='rgb(155,155,155)' stroke-width='0.6'/><path d='M422.1 387.8L445.2 400.2M445.2 400.2L450.2 354.4M450.2 354.4L427.1 342.0' stroke='#151515' stroke-width='1.7' stroke-linecap='round' fill='none'/><polygon points='453.4,414.3 449.4,450.9 495.7,475.6 499.7,439.0' fill='rgb(155,155,155)' stroke='rgb(155,155,155)' stroke-width='0.6'/><path d='M453.4 414.3L449.4 450.9M449.4 450.9L495.7 475.6M495.7 475.6L499.7 439.0M499.7 439.0L453.4 414.3' stroke='#151515' stroke-width='1.7' stroke-linecap='round' fill='none'/><polygon points='422.1,387.8 387.1,413.9 410.2,426.3 445.2,400.2' fill='rgb(155,155,155)' stroke='rgb(155,155,155)' stroke-width='0.6'/><path d='M387.1 413.9L410.2 426.3M410.2 426.3L445.2 400.2M445.2 400.2L422.1 387.8' stroke='#151515' stroke-width='1.7' stroke-linecap='round' fill='none'/><polygon points='453.4,414.3 418.5,440.4 414.5,477.0 449.4,450.9' fill='rgb(74,74,74)' stroke='rgb(74,74,74)' stroke-width='0.6'/><path d='M453.4 414.3L418.5 440.4M418.5 440.4L414.5 477.0M414.5 477.0L449.4 450.9M449.4 450.9L453.4 414.3' stroke='#151515' stroke-width='1.7' stroke-linecap='round' fill='none'/><polygon points='379.1,428.3 375.1,464.9 398.2,477.3 402.2,440.7' fill='rgb(155,155,155)' stroke='rgb(155,155,155)' stroke-width='0.6'/><path d='M375.1 464.9L398.2 477.3M398.2 477.3L402.2 440.7M402.2 440.7L379.1 428.3' stroke='#151515' stroke-width='1.7' stroke-linecap='round' fill='none'/><polygon points='469.0,251.8 441.1,272.7 464.2,285.1 492.2,264.2' fill='rgb(155,155,155)' stroke='rgb(155,155,155)' stroke-width='0.6'/><path d='M441.1 272.7L464.2 285.1M464.2 285.1L492.2 264.2M492.2 264.2L469.0 251.8' stroke='#151515' stroke-width='1.7' stroke-linecap='round' fill='none'/><polygon points='500.4,278.3 472.4,299.2 467.4,345.0 495.4,324.1' fill='rgb(74,74,74)' stroke='rgb(74,74,74)' stroke-width='0.6'/><path d='M500.4 278.3L472.4 299.2M472.4 299.2L467.4 345.0M467.4 345.0L495.4 324.1M495.4 324.1L500.4 278.3' stroke='#151515' stroke-width='1.7' stroke-linecap='round' fill='none'/><polygon points='495.4,324.1 467.4,345.0 513.7,369.7 541.7,348.8' fill='rgb(155,155,155)' stroke='rgb(155,155,155)' stroke-width='0.6'/><path d='M495.4 324.1L467.4 345.0M467.4 345.0L513.7 369.7M513.7 369.7L541.7 348.8M541.7 348.8L495.4 324.1' stroke='#151515' stroke-width='1.7' stroke-linecap='round' fill='none'/><polygon points='549.9,362.9 521.9,383.8 516.9,429.5 544.9,408.6' fill='rgb(74,74,74)' stroke='rgb(74,74,74)' stroke-width='0.6'/><path d='M549.9 362.9L521.9 383.8M521.9 383.8L516.9 429.5M516.9 429.5L544.9 408.6M544.9 408.6L549.9 362.9' stroke='#151515' stroke-width='1.7' stroke-linecap='round' fill='none'/><polygon points='544.9,408.6 516.9,429.5 553.9,449.3 581.9,428.4' fill='rgb(155,155,155)' stroke='rgb(155,155,155)' stroke-width='0.6'/><path d='M544.9 408.6L516.9 429.5M516.9 429.5L553.9 449.3M553.9 449.3L581.9 428.4M581.9 428.4L544.9 408.6' stroke='#151515' stroke-width='1.7' stroke-linecap='round' fill='none'/><polygon points='581.9,428.4 553.9,449.3 552.9,458.4 580.9,437.5' fill='rgb(74,74,74)' stroke='rgb(74,74,74)' stroke-width='0.6'/><path d='M581.9 428.4L553.9 449.3M552.9 458.4L580.9 437.5M580.9 437.5L581.9 428.4' stroke='#151515' stroke-width='1.7' stroke-linecap='round' fill='none'/><polygon points='433.1,287.1 428.1,332.9 451.2,345.2 456.2,299.5' fill='rgb(155,155,155)' stroke='rgb(155,155,155)' stroke-width='0.6'/><path d='M428.1 332.9L451.2 345.2M451.2 345.2L456.2 299.5M456.2 299.5L433.1 287.1' stroke='#151515' stroke-width='1.7' stroke-linecap='round' fill='none'/><polygon points='459.4,359.3 454.4,405.1 500.7,429.8 505.7,384.0' fill='rgb(155,155,155)' stroke='rgb(155,155,155)' stroke-width='0.6'/><path d='M459.4 359.3L454.4 405.1M454.4 405.1L500.7 429.8M500.7 429.8L505.7 384.0M505.7 384.0L459.4 359.3' stroke='#151515' stroke-width='1.7' stroke-linecap='round' fill='none'/><polygon points='508.9,443.9 504.9,480.5 541.9,500.3 545.9,463.7' fill='rgb(155,155,155)' stroke='rgb(155,155,155)' stroke-width='0.6'/><path d='M508.9 443.9L504.9 480.5M504.9 480.5L541.9 500.3M541.9 500.3L545.9 463.7M545.9 463.7L508.9 443.9' stroke='#151515' stroke-width='1.7' stroke-linecap='round' fill='none'/><polygon points='552.9,458.4 545.9,463.7 541.9,500.3 548.9,495.0' fill='rgb(74,74,74)' stroke='rgb(74,74,74)' stroke-width='0.6'/><path d='M545.9 463.7L541.9 500.3M541.9 500.3L548.9 495.0M548.9 495.0L552.9 458.4' stroke='#151515' stroke-width='1.7' stroke-linecap='round' fill='none'/><polygon points='428.1,332.9 393.1,359.0 416.2,371.4 451.2,345.2' fill='rgb(155,155,155)' stroke='rgb(155,155,155)' stroke-width='0.6'/><path d='M393.1 359.0L416.2 371.4M416.2 371.4L451.2 345.2M451.2 345.2L428.1 332.9' stroke='#151515' stroke-width='1.7' stroke-linecap='round' fill='none'/><polygon points='459.4,359.3 424.5,385.5 419.5,431.2 454.4,405.1' fill='rgb(74,74,74)' stroke='rgb(74,74,74)' stroke-width='0.6'/><path d='M459.4 359.3L424.5 385.5M424.5 385.5L419.5 431.2M419.5 431.2L454.4 405.1M454.4 405.1L459.4 359.3' stroke='#151515' stroke-width='1.7' stroke-linecap='round' fill='none'/><polygon points='454.4,405.1 419.5,431.2 465.7,455.9 500.7,429.8' fill='rgb(155,155,155)' stroke='rgb(155,155,155)' stroke-width='0.6'/><path d='M454.4 405.1L419.5 431.2M419.5 431.2L465.7 455.9M465.7 455.9L500.7 429.8M500.7 429.8L454.4 405.1' stroke='#151515' stroke-width='1.7' stroke-linecap='round' fill='none'/><polygon points='508.9,443.9 474.0,470.0 470.0,506.6 504.9,480.5' fill='rgb(74,74,74)' stroke='rgb(74,74,74)' stroke-width='0.6'/><path d='M508.9 443.9L474.0 470.0M474.0 470.0L470.0 506.6M470.0 506.6L504.9 480.5M504.9 480.5L508.9 443.9' stroke='#151515' stroke-width='1.7' stroke-linecap='round' fill='none'/><polygon points='385.1,373.4 380.1,419.2 403.2,431.5 408.2,385.7' fill='rgb(155,155,155)' stroke='rgb(155,155,155)' stroke-width='0.6'/><path d='M380.1 419.2L403.2 431.5M403.2 431.5L408.2 385.7M408.2 385.7L385.1 373.4' stroke='#151515' stroke-width='1.7' stroke-linecap='round' fill='none'/><polygon points='411.5,445.6 407.5,482.2 453.7,506.9 457.7,470.3' fill='rgb(155,155,155)' stroke='rgb(155,155,155)' stroke-width='0.6'/><path d='M411.5 445.6L407.5 482.2M407.5 482.2L453.7 506.9M453.7 506.9L457.7 470.3M457.7 470.3L411.5 445.6' stroke='#151515' stroke-width='1.7' stroke-linecap='round' fill='none'/><polygon points='380.1,419.2 345.1,445.3 368.2,457.6 403.2,431.5' fill='rgb(155,155,155)' stroke='rgb(155,155,155)' stroke-width='0.6'/><path d='M345.1 445.3L368.2 457.6M368.2 457.6L403.2 431.5M403.2 431.5L380.1 419.2' stroke='#151515' stroke-width='1.7' stroke-linecap='round' fill='none'/><polygon points='411.5,445.6 376.5,471.7 372.5,508.3 407.5,482.2' fill='rgb(74,74,74)' stroke='rgb(74,74,74)' stroke-width='0.6'/><path d='M411.5 445.6L376.5 471.7M376.5 471.7L372.5 508.3M372.5 508.3L407.5 482.2M407.5 482.2L411.5 445.6' stroke='#151515' stroke-width='1.7' stroke-linecap='round' fill='none'/><polygon points='337.1,459.7 333.1,496.3 356.2,508.6 360.2,472.0' fill='rgb(155,155,155)' stroke='rgb(155,155,155)' stroke-width='0.6'/><path d='M333.1 496.3L356.2 508.6M356.2 508.6L360.2 472.0M360.2 472.0L337.1 459.7' stroke='#151515' stroke-width='1.7' stroke-linecap='round' fill='none'/><polygon points='553.9,449.3 546.9,454.5 545.9,463.7 552.9,458.4' fill='rgb(74,74,74)' stroke='rgb(74,74,74)' stroke-width='0.6'/><polygon points='475.0,196.9 447.0,217.8 470.2,230.2 498.2,209.3' fill='rgb(155,155,155)' stroke='rgb(155,155,155)' stroke-width='0.6'/><path d='M447.0 217.8L470.2 230.2M470.2 230.2L498.2 209.3M498.2 209.3L475.0 196.9' stroke='#151515' stroke-width='1.7' stroke-linecap='round' fill='none'/><polygon points='506.4,223.4 478.4,244.3 473.4,290.0 501.4,269.1' fill='rgb(74,74,74)' stroke='rgb(74,74,74)' stroke-width='0.6'/><path d='M506.4 223.4L478.4 244.3M478.4 244.3L473.4 290.0M473.4 290.0L501.4 269.1M501.4 269.1L506.4 223.4' stroke='#151515' stroke-width='1.7' stroke-linecap='round' fill='none'/><polygon points='501.4,269.1 473.4,290.0 519.7,314.7 547.7,293.8' fill='rgb(155,155,155)' stroke='rgb(155,155,155)' stroke-width='0.6'/><path d='M501.4 269.1L473.4 290.0M473.4 290.0L519.7 314.7M519.7 314.7L547.7 293.8M547.7 293.8L501.4 269.1' stroke='#151515' stroke-width='1.7' stroke-linecap='round' fill='none'/><polygon points='555.9,307.9 527.9,328.8 522.9,374.6 550.9,353.7' fill='rgb(74,74,74)' stroke='rgb(74,74,74)' stroke-width='0.6'/><path d='M555.9 307.9L527.9 328.8M527.9 328.8L522.9 374.6M522.9 374.6L550.9 353.7M550.9 353.7L555.9 307.9' stroke='#151515' stroke-width='1.7' stroke-linecap='round' fill='none'/><polygon points='550.9,353.7 522.9,374.6 559.9,394.4 587.9,373.5' fill='rgb(155,155,155)' stroke='rgb(155,155,155)' stroke-width='0.6'/><path d='M550.9 353.7L522.9 374.6M522.9 374.6L559.9 394.4M559.9 394.4L587.9 373.5M587.9 373.5L550.9 353.7' stroke='#151515' stroke-width='1.7' stroke-linecap='round' fill='none'/><polygon points='587.9,373.5 559.9,394.4 558.9,403.5 586.9,382.6' fill='rgb(74,74,74)' stroke='rgb(74,74,74)' stroke-width='0.6'/><path d='M587.9 373.5L559.9 394.4M558.9 403.5L586.9 382.6M586.9 382.6L587.9 373.5' stroke='#151515' stroke-width='1.7' stroke-linecap='round' fill='none'/><polygon points='439.1,232.2 434.1,278.0 457.2,290.3 462.2,244.6' fill='rgb(155,155,155)' stroke='rgb(155,155,155)' stroke-width='0.6'/><path d='M434.1 278.0L457.2 290.3M457.2 290.3L462.2 244.6M462.2 244.6L439.1 232.2' stroke='#151515' stroke-width='1.7' stroke-linecap='round' fill='none'/><polygon points='465.4,304.4 460.4,350.2 506.7,374.9 511.7,329.1' fill='rgb(155,155,155)' stroke='rgb(155,155,155)' stroke-width='0.6'/><path d='M465.4 304.4L460.4 350.2M460.4 350.2L506.7 374.9M506.7 374.9L511.7 329.1M511.7 329.1L465.4 304.4' stroke='#151515' stroke-width='1.7' stroke-linecap='round' fill='none'/><polygon points='514.9,389.0 509.9,434.7 546.9,454.5 551.9,408.7' fill='rgb(155,155,155)' stroke='rgb(155,155,155)' stroke-width='0.6'/><path d='M514.9 389.0L509.9 434.7M509.9 434.7L546.9 454.5M546.9 454.5L551.9 408.7M551.9 408.7L514.9 389.0' stroke='#151515' stroke-width='1.7' stroke-linecap='round' fill='none'/><polygon points='558.9,403.5 551.9,408.7 546.9,454.5 553.9,449.3' fill='rgb(74,74,74)' stroke='rgb(74,74,74)' stroke-width='0.6'/><path d='M551.9 408.7L546.9 454.5M553.9 449.3L558.9 403.5' stroke='#151515' stroke-width='1.7' stroke-linecap='round' fill='none'/><polygon points='434.1,278.0 399.1,304.1 422.2,316.4 457.2,290.3' fill='rgb(155,155,155)' stroke='rgb(155,155,155)' stroke-width='0.6'/><path d='M399.1 304.1L422.2 316.4M422.2 316.4L457.2 290.3M457.2 290.3L434.1 278.0' stroke='#151515' stroke-width='1.7' stroke-linecap='round' fill='none'/><polygon points='465.4,304.4 430.5,330.5 425.5,376.3 460.4,350.2' fill='rgb(74,74,74)' stroke='rgb(74,74,74)' stroke-width='0.6'/><path d='M465.4 304.4L430.5 330.5M430.5 330.5L425.5 376.3M425.5 376.3L460.4 350.2M460.4 350.2L465.4 304.4' stroke='#151515' stroke-width='1.7' stroke-linecap='round' fill='none'/><polygon points='460.4,350.2 425.5,376.3 471.7,401.0 506.7,374.9' fill='rgb(155,155,155)' stroke='rgb(155,155,155)' stroke-width='0.6'/><path d='M460.4 350.2L425.5 376.3M425.5 376.3L471.7 401.0M471.7 401.0L506.7 374.9M506.7 374.9L460.4 350.2' stroke='#151515' stroke-width='1.7' stroke-linecap='round' fill='none'/><polygon points='514.9,389.0 480.0,415.1 475.0,460.9 509.9,434.7' fill='rgb(74,74,74)' stroke='rgb(74,74,74)' stroke-width='0.6'/><path d='M514.9 389.0L480.0 415.1M480.0 415.1L475.0 460.9M475.0 460.9L509.9 434.7M509.9 434.7L514.9 389.0' stroke='#151515' stroke-width='1.7' stroke-linecap='round' fill='none'/><polygon points='509.9,434.7 475.0,460.9 512.0,480.6 546.9,454.5' fill='rgb(155,155,155)' stroke='rgb(155,155,155)' stroke-width='0.6'/><path d='M509.9 434.7L475.0 460.9M475.0 460.9L512.0 480.6M512.0 480.6L546.9 454.5M546.9 454.5L509.9 434.7' stroke='#151515' stroke-width='1.7' stroke-linecap='round' fill='none'/><polygon points='546.9,454.5 512.0,480.6 511.0,489.8 545.9,463.7' fill='rgb(74,74,74)' stroke='rgb(74,74,74)' stroke-width='0.6'/><path d='M546.9 454.5L512.0 480.6M511.0 489.8L545.9 463.7' stroke='#151515' stroke-width='1.7' stroke-linecap='round' fill='none'/><polygon points='391.1,318.5 386.1,364.2 409.2,376.6 414.2,330.8' fill='rgb(155,155,155)' stroke='rgb(155,155,155)' stroke-width='0.6'/><path d='M386.1 364.2L409.2 376.6M409.2 376.6L414.2 330.8M414.2 330.8L391.1 318.5' stroke='#151515' stroke-width='1.7' stroke-linecap='round' fill='none'/><polygon points='417.5,390.7 412.5,436.5 458.7,461.2 463.7,415.4' fill='rgb(155,155,155)' stroke='rgb(155,155,155)' stroke-width='0.6'/><path d='M417.5 390.7L412.5 436.5M412.5 436.5L458.7 461.2M458.7 461.2L463.7 415.4M463.7 415.4L417.5 390.7' stroke='#151515' stroke-width='1.7' stroke-linecap='round' fill='none'/><polygon points='467.0,475.2 463.0,511.9 500.0,531.6 504.0,495.0' fill='rgb(155,155,155)' stroke='rgb(155,155,155)' stroke-width='0.6'/><path d='M467.0 475.2L463.0 511.9M463.0 511.9L500.0 531.6M500.0 531.6L504.0 495.0M504.0 495.0L467.0 475.2' stroke='#151515' stroke-width='1.7' stroke-linecap='round' fill='none'/><polygon points='511.0,489.8 504.0,495.0 500.0,531.6 507.0,526.4' fill='rgb(74,74,74)' stroke='rgb(74,74,74)' stroke-width='0.6'/><path d='M504.0 495.0L500.0 531.6M500.0 531.6L507.0 526.4M507.0 526.4L511.0 489.8' stroke='#151515' stroke-width='1.7' stroke-linecap='round' fill='none'/><polygon points='386.1,364.2 351.1,390.4 374.2,402.7 409.2,376.6' fill='rgb(155,155,155)' stroke='rgb(155,155,155)' stroke-width='0.6'/><path d='M351.1 390.4L374.2 402.7M374.2 402.7L409.2 376.6M409.2 376.6L386.1 364.2' stroke='#151515' stroke-width='1.7' stroke-linecap='round' fill='none'/><polygon points='417.5,390.7 382.5,416.8 377.5,462.6 412.5,436.5' fill='rgb(74,74,74)' stroke='rgb(74,74,74)' stroke-width='0.6'/><path d='M417.5 390.7L382.5 416.8M382.5 416.8L377.5 462.6M377.5 462.6L412.5 436.5M412.5 436.5L417.5 390.7' stroke='#151515' stroke-width='1.7' stroke-linecap='round' fill='none'/><polygon points='412.5,436.5 377.5,462.6 423.7,487.3 458.7,461.2' fill='rgb(155,155,155)' stroke='rgb(155,155,155)' stroke-width='0.6'/><path d='M412.5 436.5L377.5 462.6M377.5 462.6L423.7 487.3M423.7 487.3L458.7 461.2M458.7 461.2L412.5 436.5' stroke='#151515' stroke-width='1.7' stroke-linecap='round' fill='none'/><polygon points='467.0,475.2 432.0,501.4 428.0,538.0 463.0,511.9' fill='rgb(74,74,74)' stroke='rgb(74,74,74)' stroke-width='0.6'/><path d='M467.0 475.2L432.0 501.4M432.0 501.4L428.0 538.0M428.0 538.0L463.0 511.9M463.0 511.9L467.0 475.2' stroke='#151515' stroke-width='1.7' stroke-linecap='round' fill='none'/><polygon points='343.1,404.7 338.1,450.5 361.2,462.9 366.2,417.1' fill='rgb(155,155,155)' stroke='rgb(155,155,155)' stroke-width='0.6'/><path d='M338.1 450.5L361.2 462.9M361.2 462.9L366.2 417.1M366.2 417.1L343.1 404.7' stroke='#151515' stroke-width='1.7' stroke-linecap='round' fill='none'/><polygon points='369.5,477.0 365.5,513.6 411.7,538.3 415.7,501.7' fill='rgb(155,155,155)' stroke='rgb(155,155,155)' stroke-width='0.6'/><path d='M369.5 477.0L365.5 513.6M365.5 513.6L411.7 538.3M411.7 538.3L415.7 501.7M415.7 501.7L369.5 477.0' stroke='#151515' stroke-width='1.7' stroke-linecap='round' fill='none'/><polygon points='338.1,450.5 303.1,476.6 326.3,489.0 361.2,462.9' fill='rgb(155,155,155)' stroke='rgb(155,155,155)' stroke-width='0.6'/><path d='M303.1 476.6L326.3 489.0M326.3 489.0L361.2 462.9M361.2 462.9L338.1 450.5' stroke='#151515' stroke-width='1.7' stroke-linecap='round' fill='none'/><polygon points='369.5,477.0 334.5,503.1 330.5,539.7 365.5,513.6' fill='rgb(74,74,74)' stroke='rgb(74,74,74)' stroke-width='0.6'/><path d='M369.5 477.0L334.5 503.1M334.5 503.1L330.5 539.7M330.5 539.7L365.5 513.6M365.5 513.6L369.5 477.0' stroke='#151515' stroke-width='1.7' stroke-linecap='round' fill='none'/><polygon points='295.1,491.0 291.2,527.6 314.3,540.0 318.3,503.4' fill='rgb(155,155,155)' stroke='rgb(155,155,155)' stroke-width='0.6'/><path d='M291.2 527.6L314.3 540.0M314.3 540.0L318.3 503.4M318.3 503.4L295.1 491.0' stroke='#151515' stroke-width='1.7' stroke-linecap='round' fill='none'/><polygon points='559.9,394.4 552.9,399.6 551.9,408.7 558.9,403.5' fill='rgb(74,74,74)' stroke='rgb(74,74,74)' stroke-width='0.6'/><polygon points='512.0,480.6 505.0,485.9 504.0,495.0 511.0,489.8' fill='rgb(74,74,74)' stroke='rgb(74,74,74)' stroke-width='0.6'/><polygon points='502.1,172.7 474.2,193.6 483.4,198.5 511.4,177.6' fill='rgb(155,155,155)' stroke='rgb(155,155,155)' stroke-width='0.6'/><path d='M502.1 172.7L474.2 193.6M483.4 198.5L511.4 177.6M511.4 177.6L502.1 172.7' stroke='#151515' stroke-width='1.7' stroke-linecap='round' fill='none'/><polygon points='511.4,177.6 483.4,198.5 479.4,235.1 507.4,214.2' fill='rgb(74,74,74)' stroke='rgb(74,74,74)' stroke-width='0.6'/><path d='M511.4 177.6L483.4 198.5M483.4 198.5L479.4 235.1M479.4 235.1L507.4 214.2M507.4 214.2L511.4 177.6' stroke='#151515' stroke-width='1.7' stroke-linecap='round' fill='none'/><polygon points='507.4,214.2 479.4,235.1 525.7,259.8 553.7,238.9' fill='rgb(155,155,155)' stroke='rgb(155,155,155)' stroke-width='0.6'/><path d='M507.4 214.2L479.4 235.1M479.4 235.1L525.7 259.8M525.7 259.8L553.7 238.9M553.7 238.9L507.4 214.2' stroke='#151515' stroke-width='1.7' stroke-linecap='round' fill='none'/><polygon points='561.9,253.0 533.9,273.9 528.9,319.7 556.9,298.8' fill='rgb(74,74,74)' stroke='rgb(74,74,74)' stroke-width='0.6'/><path d='M561.9 253.0L533.9 273.9M533.9 273.9L528.9 319.7M528.9 319.7L556.9 298.8M556.9 298.8L561.9 253.0' stroke='#151515' stroke-width='1.7' stroke-linecap='round' fill='none'/><polygon points='556.9,298.8 528.9,319.7 565.9,339.4 593.9,318.5' fill='rgb(155,155,155)' stroke='rgb(155,155,155)' stroke-width='0.6'/><path d='M556.9 298.8L528.9 319.7M528.9 319.7L565.9 339.4M565.9 339.4L593.9 318.5M593.9 318.5L556.9 298.8' stroke='#151515' stroke-width='1.7' stroke-linecap='round' fill='none'/><polygon points='593.9,318.5 565.9,339.4 564.9,348.6 592.9,327.7' fill='rgb(74,74,74)' stroke='rgb(74,74,74)' stroke-width='0.6'/><path d='M593.9 318.5L565.9 339.4M564.9 348.6L592.9 327.7M592.9 327.7L593.9 318.5' stroke='#151515' stroke-width='1.7' stroke-linecap='round' fill='none'/><polygon points='444.0,186.4 440.1,223.1 463.2,235.4 467.2,198.8' fill='rgb(155,155,155)' stroke='rgb(155,155,155)' stroke-width='0.6'/><path d='M440.1 223.1L463.2 235.4M463.2 235.4L467.2 198.8M467.2 198.8L444.0 186.4' stroke='#151515' stroke-width='1.7' stroke-linecap='round' fill='none'/><polygon points='451.0,181.2 444.0,186.4 467.2,198.8 474.2,193.6' fill='rgb(155,155,155)' stroke='rgb(155,155,155)' stroke-width='0.6'/><path d='M444.0 186.4L467.2 198.8M474.2 193.6L451.0 181.2' stroke='#151515' stroke-width='1.7' stroke-linecap='round' fill='none'/><polygon points='471.4,249.5 466.4,295.3 512.7,320.0 517.7,274.2' fill='rgb(155,155,155)' stroke='rgb(155,155,155)' stroke-width='0.6'/><path d='M471.4 249.5L466.4 295.3M466.4 295.3L512.7 320.0M512.7 320.0L517.7 274.2M517.7 274.2L471.4 249.5' stroke='#151515' stroke-width='1.7' stroke-linecap='round' fill='none'/><polygon points='520.9,334.1 515.9,379.8 552.9,399.6 557.9,353.8' fill='rgb(155,155,155)' stroke='rgb(155,155,155)' stroke-width='0.6'/><path d='M520.9 334.1L515.9 379.8M515.9 379.8L552.9 399.6M552.9 399.6L557.9 353.8M557.9 353.8L520.9 334.1' stroke='#151515' stroke-width='1.7' stroke-linecap='round' fill='none'/><polygon points='564.9,348.6 557.9,353.8 552.9,399.6 559.9,394.4' fill='rgb(74,74,74)' stroke='rgb(74,74,74)' stroke-width='0.6'/><path d='M557.9 353.8L552.9 399.6M559.9 394.4L564.9 348.6' stroke='#151515' stroke-width='1.7' stroke-linecap='round' fill='none'/><polygon points='440.1,223.1 405.1,249.2 428.2,261.5 463.2,235.4' fill='rgb(155,155,155)' stroke='rgb(155,155,155)' stroke-width='0.6'/><path d='M405.1 249.2L428.2 261.5M428.2 261.5L463.2 235.4M463.2 235.4L440.1 223.1' stroke='#151515' stroke-width='1.7' stroke-linecap='round' fill='none'/><polygon points='471.4,249.5 436.4,275.6 431.5,321.4 466.4,295.3' fill='rgb(74,74,74)' stroke='rgb(74,74,74)' stroke-width='0.6'/><path d='M471.4 249.5L436.4 275.6M436.4 275.6L431.5 321.4M431.5 321.4L466.4 295.3M466.4 295.3L471.4 249.5' stroke='#151515' stroke-width='1.7' stroke-linecap='round' fill='none'/><polygon points='466.4,295.3 431.5,321.4 477.7,346.1 512.7,320.0' fill='rgb(155,155,155)' stroke='rgb(155,155,155)' stroke-width='0.6'/><path d='M466.4 295.3L431.5 321.4M431.5 321.4L477.7 346.1M477.7 346.1L512.7 320.0M512.7 320.0L466.4 295.3' stroke='#151515' stroke-width='1.7' stroke-linecap='round' fill='none'/><polygon points='520.9,334.1 486.0,360.2 481.0,406.0 515.9,379.8' fill='rgb(74,74,74)' stroke='rgb(74,74,74)' stroke-width='0.6'/><path d='M520.9 334.1L486.0 360.2M486.0 360.2L481.0 406.0M481.0 406.0L515.9 379.8M515.9 379.8L520.9 334.1' stroke='#151515' stroke-width='1.7' stroke-linecap='round' fill='none'/><polygon points='515.9,379.8 481.0,406.0 518.0,425.7 552.9,399.6' fill='rgb(155,155,155)' stroke='rgb(155,155,155)' stroke-width='0.6'/><path d='M515.9 379.8L481.0 406.0M481.0 406.0L518.0 425.7M518.0 425.7L552.9 399.6M552.9 399.6L515.9 379.8' stroke='#151515' stroke-width='1.7' stroke-linecap='round' fill='none'/><polygon points='552.9,399.6 518.0,425.7 517.0,434.9 551.9,408.7' fill='rgb(74,74,74)' stroke='rgb(74,74,74)' stroke-width='0.6'/><path d='M552.9 399.6L518.0 425.7M517.0 434.9L551.9 408.7' stroke='#151515' stroke-width='1.7' stroke-linecap='round' fill='none'/><polygon points='397.1,263.6 392.1,309.3 415.2,321.7 420.2,275.9' fill='rgb(155,155,155)' stroke='rgb(155,155,155)' stroke-width='0.6'/><path d='M392.1 309.3L415.2 321.7M415.2 321.7L420.2 275.9M420.2 275.9L397.1 263.6' stroke='#151515' stroke-width='1.7' stroke-linecap='round' fill='none'/><polygon points='423.5,335.8 418.5,381.5 464.7,406.2 469.7,360.5' fill='rgb(155,155,155)' stroke='rgb(155,155,155)' stroke-width='0.6'/><path d='M423.5 335.8L418.5 381.5M418.5 381.5L464.7 406.2M464.7 406.2L469.7 360.5M469.7 360.5L423.5 335.8' stroke='#151515' stroke-width='1.7' stroke-linecap='round' fill='none'/><polygon points='473.0,420.3 468.0,466.1 505.0,485.9 510.0,440.1' fill='rgb(155,155,155)' stroke='rgb(155,155,155)' stroke-width='0.6'/><path d='M473.0 420.3L468.0 466.1M468.0 466.1L505.0 485.9M505.0 485.9L510.0 440.1M510.0 440.1L473.0 420.3' stroke='#151515' stroke-width='1.7' stroke-linecap='round' fill='none'/><polygon points='517.0,434.9 510.0,440.1 505.0,485.9 512.0,480.6' fill='rgb(74,74,74)' stroke='rgb(74,74,74)' stroke-width='0.6'/><path d='M510.0 440.1L505.0 485.9M512.0 480.6L517.0 434.9' stroke='#151515' stroke-width='1.7' stroke-linecap='round' fill='none'/><polygon points='392.1,309.3 357.1,335.4 380.2,347.8 415.2,321.7' fill='rgb(155,155,155)' stroke='rgb(155,155,155)' stroke-width='0.6'/><path d='M357.1 335.4L380.2 347.8M380.2 347.8L415.2 321.7M415.2 321.7L392.1 309.3' stroke='#151515' stroke-width='1.7' stroke-linecap='round' fill='none'/><polygon points='423.5,335.8 388.5,361.9 383.5,407.7 418.5,381.5' fill='rgb(74,74,74)' stroke='rgb(74,74,74)' stroke-width='0.6'/><path d='M423.5 335.8L388.5 361.9M388.5 361.9L383.5 407.7M383.5 407.7L418.5 381.5M418.5 381.5L423.5 335.8' stroke='#151515' stroke-width='1.7' stroke-linecap='round' fill='none'/><polygon points='418.5,381.5 383.5,407.7 429.7,432.4 464.7,406.2' fill='rgb(155,155,155)' stroke='rgb(155,155,155)' stroke-width='0.6'/><path d='M418.5 381.5L383.5 407.7M383.5 407.7L429.7 432.4M429.7 432.4L464.7 406.2M464.7 406.2L418.5 381.5' stroke='#151515' stroke-width='1.7' stroke-linecap='round' fill='none'/><polygon points='473.0,420.3 438.0,446.5 433.0,492.2 468.0,466.1' fill='rgb(74,74,74)' stroke='rgb(74,74,74)' stroke-width='0.6'/><path d='M473.0 420.3L438.0 446.5M438.0 446.5L433.0 492.2M433.0 492.2L468.0 466.1M468.0 466.1L473.0 420.3' stroke='#151515' stroke-width='1.7' stroke-linecap='round' fill='none'/><polygon points='468.0,466.1 433.0,492.2 470.0,512.0 505.0,485.9' fill='rgb(155,155,155)' stroke='rgb(155,155,155)' stroke-width='0.6'/><path d='M468.0 466.1L433.0 492.2M433.0 492.2L470.0 512.0M470.0 512.0L505.0 485.9M505.0 485.9L468.0 466.1' stroke='#151515' stroke-width='1.7' stroke-linecap='round' fill='none'/><polygon points='505.0,485.9 470.0,512.0 469.0,521.1 504.0,495.0' fill='rgb(74,74,74)' stroke='rgb(74,74,74)' stroke-width='0.6'/><path d='M505.0 485.9L470.0 512.0M469.0 521.1L504.0 495.0' stroke='#151515' stroke-width='1.7' stroke-linecap='round' fill='none'/><polygon points='349.1,349.8 344.1,395.6 367.2,407.9 372.2,362.2' fill='rgb(155,155,155)' stroke='rgb(155,155,155)' stroke-width='0.6'/><path d='M344.1 395.6L367.2 407.9M367.2 407.9L372.2 362.2M372.2 362.2L349.1 349.8' stroke='#151515' stroke-width='1.7' stroke-linecap='round' fill='none'/><polygon points='375.5,422.0 370.5,467.8 416.7,492.5 421.7,446.7' fill='rgb(155,155,155)' stroke='rgb(155,155,155)' stroke-width='0.6'/><path d='M375.5 422.0L370.5 467.8M370.5 467.8L416.7 492.5M416.7 492.5L421.7 446.7M421.7 446.7L375.5 422.0' stroke='#151515' stroke-width='1.7' stroke-linecap='round' fill='none'/><polygon points='425.0,506.6 421.0,543.2 458.0,563.0 462.0,526.4' fill='rgb(155,155,155)' stroke='rgb(155,155,155)' stroke-width='0.6'/><path d='M425.0 506.6L421.0 543.2M421.0 543.2L458.0 563.0M458.0 563.0L462.0 526.4M462.0 526.4L425.0 506.6' stroke='#151515' stroke-width='1.7' stroke-linecap='round' fill='none'/><polygon points='469.0,521.1 462.0,526.4 458.0,563.0 465.0,557.7' fill='rgb(74,74,74)' stroke='rgb(74,74,74)' stroke-width='0.6'/><path d='M462.0 526.4L458.0 563.0M458.0 563.0L465.0 557.7M465.0 557.7L469.0 521.1' stroke='#151515' stroke-width='1.7' stroke-linecap='round' fill='none'/><polygon points='344.1,395.6 309.1,421.7 332.3,434.1 367.2,407.9' fill='rgb(155,155,155)' stroke='rgb(155,155,155)' stroke-width='0.6'/><path d='M309.1 421.7L332.3 434.1M332.3 434.1L367.2 407.9M367.2 407.9L344.1 395.6' stroke='#151515' stroke-width='1.7' stroke-linecap='round' fill='none'/><polygon points='375.5,422.0 340.5,448.2 335.5,493.9 370.5,467.8' fill='rgb(74,74,74)' stroke='rgb(74,74,74)' stroke-width='0.6'/><path d='M375.5 422.0L340.5 448.2M340.5 448.2L335.5 493.9M335.5 493.9L370.5 467.8M370.5 467.8L375.5 422.0' stroke='#151515' stroke-width='1.7' stroke-linecap='round' fill='none'/><polygon points='370.5,467.8 335.5,493.9 381.8,518.6 416.7,492.5' fill='rgb(155,155,155)' stroke='rgb(155,155,155)' stroke-width='0.6'/><path d='M370.5 467.8L335.5 493.9M335.5 493.9L381.8 518.6M381.8 518.6L416.7 492.5M416.7 492.5L370.5 467.8' stroke='#151515' stroke-width='1.7' stroke-linecap='round' fill='none'/><polygon points='425.0,506.6 390.0,532.7 386.0,569.3 421.0,543.2' fill='rgb(74,74,74)' stroke='rgb(74,74,74)' stroke-width='0.6'/><path d='M425.0 506.6L390.0 532.7M390.0 532.7L386.0 569.3M386.0 569.3L421.0 543.2M421.0 543.2L425.0 506.6' stroke='#151515' stroke-width='1.7' stroke-linecap='round' fill='none'/><polygon points='301.1,436.1 296.1,481.9 319.3,494.2 324.3,448.4' fill='rgb(155,155,155)' stroke='rgb(155,155,155)' stroke-width='0.6'/><path d='M296.1 481.9L319.3 494.2M319.3 494.2L324.3 448.4M324.3 448.4L301.1 436.1' stroke='#151515' stroke-width='1.7' stroke-linecap='round' fill='none'/><polygon points='327.5,508.3 323.5,544.9 369.8,569.6 373.8,533.0' fill='rgb(155,155,155)' stroke='rgb(155,155,155)' stroke-width='0.6'/><path d='M327.5 508.3L323.5 544.9M323.5 544.9L369.8 569.6M369.8 569.6L373.8 533.0M373.8 533.0L327.5 508.3' stroke='#151515' stroke-width='1.7' stroke-linecap='round' fill='none'/><polygon points='268.2,502.8 267.2,511.9 290.3,524.3 291.3,515.1' fill='rgb(155,155,155)' stroke='rgb(155,155,155)' stroke-width='0.6'/><path d='M267.2 511.9L290.3 524.3M291.3 515.1L268.2 502.8' stroke='#151515' stroke-width='1.7' stroke-linecap='round' fill='none'/><polygon points='296.1,481.9 268.2,502.8 291.3,515.1 319.3,494.2' fill='rgb(155,155,155)' stroke='rgb(155,155,155)' stroke-width='0.6'/><path d='M268.2 502.8L291.3 515.1M291.3 515.1L319.3 494.2M319.3 494.2L296.1 481.9' stroke='#151515' stroke-width='1.7' stroke-linecap='round' fill='none'/><polygon points='290.3,524.3 286.3,560.9 295.5,565.8 299.5,529.2' fill='rgb(155,155,155)' stroke='rgb(155,155,155)' stroke-width='0.6'/><path d='M290.3 524.3L286.3 560.9M286.3 560.9L295.5 565.8M295.5 565.8L299.5 529.2' stroke='#151515' stroke-width='1.7' stroke-linecap='round' fill='none'/><polygon points='327.5,508.3 299.5,529.2 295.5,565.8 323.5,544.9' fill='rgb(74,74,74)' stroke='rgb(74,74,74)' stroke-width='0.6'/><path d='M327.5 508.3L299.5 529.2M299.5 529.2L295.5 565.8M295.5 565.8L323.5 544.9M323.5 544.9L327.5 508.3' stroke='#151515' stroke-width='1.7' stroke-linecap='round' fill='none'/><polygon points='474.2,193.6 467.2,198.8 476.4,203.7 483.4,198.5' fill='rgb(155,155,155)' stroke='rgb(155,155,155)' stroke-width='0.6'/><polygon points='565.9,339.4 558.9,344.7 557.9,353.8 564.9,348.6' fill='rgb(74,74,74)' stroke='rgb(74,74,74)' stroke-width='0.6'/><polygon points='518.0,425.7 511.0,430.9 510.0,440.1 517.0,434.9' fill='rgb(74,74,74)' stroke='rgb(74,74,74)' stroke-width='0.6'/><polygon points='470.0,512.0 463.0,517.2 462.0,526.4 469.0,521.1' fill='rgb(74,74,74)' stroke='rgb(74,74,74)' stroke-width='0.6'/><polygon points='291.3,515.1 290.3,524.3 299.5,529.2 300.5,520.1' fill='rgb(155,155,155)' stroke='rgb(155,155,155)' stroke-width='0.6'/><polygon points='557.6,202.3 529.7,223.2 538.9,228.2 566.9,207.3' fill='rgb(155,155,155)' stroke='rgb(155,155,155)' stroke-width='0.6'/><path d='M557.6 202.3L529.7 223.2M538.9 228.2L566.9 207.3M566.9 207.3L557.6 202.3' stroke='#151515' stroke-width='1.7' stroke-linecap='round' fill='none'/><polygon points='566.9,207.3 538.9,228.2 534.9,264.8 562.9,243.9' fill='rgb(74,74,74)' stroke='rgb(74,74,74)' stroke-width='0.6'/><path d='M566.9 207.3L538.9 228.2M538.9 228.2L534.9 264.8M534.9 264.8L562.9 243.9M562.9 243.9L566.9 207.3' stroke='#151515' stroke-width='1.7' stroke-linecap='round' fill='none'/><polygon points='562.9,243.9 534.9,264.8 571.9,284.5 599.9,263.6' fill='rgb(155,155,155)' stroke='rgb(155,155,155)' stroke-width='0.6'/><path d='M562.9 243.9L534.9 264.8M534.9 264.8L571.9 284.5M571.9 284.5L599.9 263.6M599.9 263.6L562.9 243.9' stroke='#151515' stroke-width='1.7' stroke-linecap='round' fill='none'/><polygon points='599.9,263.6 571.9,284.5 570.9,293.7 598.9,272.8' fill='rgb(74,74,74)' stroke='rgb(74,74,74)' stroke-width='0.6'/><path d='M599.9 263.6L571.9 284.5M570.9 293.7L598.9 272.8M598.9 272.8L599.9 263.6' stroke='#151515' stroke-width='1.7' stroke-linecap='round' fill='none'/><polygon points='476.4,203.7 472.4,240.3 518.7,265.0 522.7,228.4' fill='rgb(155,155,155)' stroke='rgb(155,155,155)' stroke-width='0.6'/><path d='M476.4 203.7L472.4 240.3M472.4 240.3L518.7 265.0M518.7 265.0L522.7 228.4M522.7 228.4L476.4 203.7' stroke='#151515' stroke-width='1.7' stroke-linecap='round' fill='none'/><polygon points='483.4,198.5 476.4,203.7 522.7,228.4 529.7,223.2' fill='rgb(155,155,155)' stroke='rgb(155,155,155)' stroke-width='0.6'/><path d='M476.4 203.7L522.7 228.4M529.7 223.2L483.4 198.5' stroke='#151515' stroke-width='1.7' stroke-linecap='round' fill='none'/><polygon points='526.9,279.1 521.9,324.9 558.9,344.7 563.9,298.9' fill='rgb(155,155,155)' stroke='rgb(155,155,155)' stroke-width='0.6'/><path d='M526.9 279.1L521.9 324.9M521.9 324.9L558.9 344.7M558.9 344.7L563.9 298.9M563.9 298.9L526.9 279.1' stroke='#151515' stroke-width='1.7' stroke-linecap='round' fill='none'/><polygon points='570.9,293.7 563.9,298.9 558.9,344.7 565.9,339.4' fill='rgb(74,74,74)' stroke='rgb(74,74,74)' stroke-width='0.6'/><path d='M563.9 298.9L558.9 344.7M565.9 339.4L570.9 293.7' stroke='#151515' stroke-width='1.7' stroke-linecap='round' fill='none'/><polygon points='467.2,198.8 432.2,224.9 441.4,229.9 476.4,203.7' fill='rgb(155,155,155)' stroke='rgb(155,155,155)' stroke-width='0.6'/><path d='M467.2 198.8L432.2 224.9M441.4 229.9L476.4 203.7' stroke='#151515' stroke-width='1.7' stroke-linecap='round' fill='none'/><polygon points='476.4,203.7 441.4,229.9 437.4,266.5 472.4,240.3' fill='rgb(74,74,74)' stroke='rgb(74,74,74)' stroke-width='0.6'/><path d='M476.4 203.7L441.4 229.9M441.4 229.9L437.4 266.5M437.4 266.5L472.4 240.3M472.4 240.3L476.4 203.7' stroke='#151515' stroke-width='1.7' stroke-linecap='round' fill='none'/><polygon points='472.4,240.3 437.4,266.5 483.7,291.2 518.7,265.0' fill='rgb(155,155,155)' stroke='rgb(155,155,155)' stroke-width='0.6'/><path d='M472.4 240.3L437.4 266.5M437.4 266.5L483.7 291.2M483.7 291.2L518.7 265.0M518.7 265.0L472.4 240.3' stroke='#151515' stroke-width='1.7' stroke-linecap='round' fill='none'/><polygon points='526.9,279.1 491.9,305.3 487.0,351.0 521.9,324.9' fill='rgb(74,74,74)' stroke='rgb(74,74,74)' stroke-width='0.6'/><path d='M526.9 279.1L491.9 305.3M491.9 305.3L487.0 351.0M487.0 351.0L521.9 324.9M521.9 324.9L526.9 279.1' stroke='#151515' stroke-width='1.7' stroke-linecap='round' fill='none'/><polygon points='521.9,324.9 487.0,351.0 523.9,370.8 558.9,344.7' fill='rgb(155,155,155)' stroke='rgb(155,155,155)' stroke-width='0.6'/><path d='M521.9 324.9L487.0 351.0M487.0 351.0L523.9 370.8M523.9 370.8L558.9 344.7M558.9 344.7L521.9 324.9' stroke='#151515' stroke-width='1.7' stroke-linecap='round' fill='none'/><polygon points='558.9,344.7 523.9,370.8 522.9,379.9 557.9,353.8' fill='rgb(74,74,74)' stroke='rgb(74,74,74)' stroke-width='0.6'/><path d='M558.9 344.7L523.9 370.8M522.9 379.9L557.9 353.8' stroke='#151515' stroke-width='1.7' stroke-linecap='round' fill='none'/><polygon points='402.1,217.8 398.1,254.4 421.2,266.8 425.2,230.1' fill='rgb(155,155,155)' stroke='rgb(155,155,155)' stroke-width='0.6'/><path d='M398.1 254.4L421.2 266.8M421.2 266.8L425.2 230.1M425.2 230.1L402.1 217.8' stroke='#151515' stroke-width='1.7' stroke-linecap='round' fill='none'/><polygon points='409.1,212.6 402.1,217.8 425.2,230.1 432.2,224.9' fill='rgb(155,155,155)' stroke='rgb(155,155,155)' stroke-width='0.6'/><path d='M402.1 217.8L425.2 230.1M432.2 224.9L409.1 212.6' stroke='#151515' stroke-width='1.7' stroke-linecap='round' fill='none'/><polygon points='429.5,280.8 424.5,326.6 470.7,351.3 475.7,305.6' fill='rgb(155,155,155)' stroke='rgb(155,155,155)' stroke-width='0.6'/><path d='M429.5 280.8L424.5 326.6M424.5 326.6L470.7 351.3M470.7 351.3L475.7 305.6M475.7 305.6L429.5 280.8' stroke='#151515' stroke-width='1.7' stroke-linecap='round' fill='none'/><polygon points='479.0,365.4 474.0,411.2 511.0,430.9 516.0,385.2' fill='rgb(155,155,155)' stroke='rgb(155,155,155)' stroke-width='0.6'/><path d='M479.0 365.4L474.0 411.2M474.0 411.2L511.0 430.9M511.0 430.9L516.0 385.2M516.0 385.2L479.0 365.4' stroke='#151515' stroke-width='1.7' stroke-linecap='round' fill='none'/><polygon points='522.9,379.9 516.0,385.2 511.0,430.9 518.0,425.7' fill='rgb(74,74,74)' stroke='rgb(74,74,74)' stroke-width='0.6'/><path d='M516.0 385.2L511.0 430.9M518.0 425.7L522.9 379.9' stroke='#151515' stroke-width='1.7' stroke-linecap='round' fill='none'/><polygon points='398.1,254.4 363.1,280.5 386.2,292.9 421.2,266.8' fill='rgb(155,155,155)' stroke='rgb(155,155,155)' stroke-width='0.6'/><path d='M363.1 280.5L386.2 292.9M386.2 292.9L421.2 266.8M421.2 266.8L398.1 254.4' stroke='#151515' stroke-width='1.7' stroke-linecap='round' fill='none'/><polygon points='429.5,280.8 394.5,307.0 389.5,352.7 424.5,326.6' fill='rgb(74,74,74)' stroke='rgb(74,74,74)' stroke-width='0.6'/><path d='M429.5 280.8L394.5 307.0M394.5 307.0L389.5 352.7M389.5 352.7L424.5 326.6M424.5 326.6L429.5 280.8' stroke='#151515' stroke-width='1.7' stroke-linecap='round' fill='none'/><polygon points='424.5,326.6 389.5,352.7 435.7,377.4 470.7,351.3' fill='rgb(155,155,155)' stroke='rgb(155,155,155)' stroke-width='0.6'/><path d='M424.5 326.6L389.5 352.7M389.5 352.7L435.7 377.4M435.7 377.4L470.7 351.3M470.7 351.3L424.5 326.6' stroke='#151515' stroke-width='1.7' stroke-linecap='round' fill='none'/><polygon points='479.0,365.4 444.0,391.5 439.0,437.3 474.0,411.2' fill='rgb(74,74,74)' stroke='rgb(74,74,74)' stroke-width='0.6'/><path d='M479.0 365.4L444.0 391.5M444.0 391.5L439.0 437.3M439.0 437.3L474.0 411.2M474.0 411.2L479.0 365.4' stroke='#151515' stroke-width='1.7' stroke-linecap='round' fill='none'/><polygon points='474.0,411.2 439.0,437.3 476.0,457.1 511.0,430.9' fill='rgb(155,155,155)' stroke='rgb(155,155,155)' stroke-width='0.6'/><path d='M474.0 411.2L439.0 437.3M439.0 437.3L476.0 457.1M476.0 457.1L511.0 430.9M511.0 430.9L474.0 411.2' stroke='#151515' stroke-width='1.7' stroke-linecap='round' fill='none'/><polygon points='511.0,430.9 476.0,457.1 475.0,466.2 510.0,440.1' fill='rgb(74,74,74)' stroke='rgb(74,74,74)' stroke-width='0.6'/><path d='M511.0 430.9L476.0 457.1M475.0 466.2L510.0 440.1' stroke='#151515' stroke-width='1.7' stroke-linecap='round' fill='none'/><polygon points='355.1,294.9 350.1,340.7 373.2,353.0 378.2,307.3' fill='rgb(155,155,155)' stroke='rgb(155,155,155)' stroke-width='0.6'/><path d='M350.1 340.7L373.2 353.0M373.2 353.0L378.2 307.3M378.2 307.3L355.1 294.9' stroke='#151515' stroke-width='1.7' stroke-linecap='round' fill='none'/><polygon points='381.5,367.1 376.5,412.9 422.7,437.6 427.7,391.8' fill='rgb(155,155,155)' stroke='rgb(155,155,155)' stroke-width='0.6'/><path d='M381.5 367.1L376.5 412.9M376.5 412.9L422.7 437.6M422.7 437.6L427.7 391.8M427.7 391.8L381.5 367.1' stroke='#151515' stroke-width='1.7' stroke-linecap='round' fill='none'/><polygon points='431.0,451.7 426.0,497.4 463.0,517.2 468.0,471.4' fill='rgb(155,155,155)' stroke='rgb(155,155,155)' stroke-width='0.6'/><path d='M431.0 451.7L426.0 497.4M426.0 497.4L463.0 517.2M463.0 517.2L468.0 471.4M468.0 471.4L431.0 451.7' stroke='#151515' stroke-width='1.7' stroke-linecap='round' fill='none'/><polygon points='475.0,466.2 468.0,471.4 463.0,517.2 470.0,512.0' fill='rgb(74,74,74)' stroke='rgb(74,74,74)' stroke-width='0.6'/><path d='M468.0 471.4L463.0 517.2M470.0 512.0L475.0 466.2' stroke='#151515' stroke-width='1.7' stroke-linecap='round' fill='none'/><polygon points='350.1,340.7 315.1,366.8 338.3,379.2 373.2,353.0' fill='rgb(155,155,155)' stroke='rgb(155,155,155)' stroke-width='0.6'/><path d='M315.1 366.8L338.3 379.2M338.3 379.2L373.2 353.0M373.2 353.0L350.1 340.7' stroke='#151515' stroke-width='1.7' stroke-linecap='round' fill='none'/><polygon points='381.5,367.1 346.5,393.2 341.5,439.0 376.5,412.9' fill='rgb(74,74,74)' stroke='rgb(74,74,74)' stroke-width='0.6'/><path d='M381.5 367.1L346.5 393.2M346.5 393.2L341.5 439.0M341.5 439.0L376.5 412.9M376.5 412.9L381.5 367.1' stroke='#151515' stroke-width='1.7' stroke-linecap='round' fill='none'/><polygon points='376.5,412.9 341.5,439.0 387.8,463.7 422.7,437.6' fill='rgb(155,155,155)' stroke='rgb(155,155,155)' stroke-width='0.6'/><path d='M376.5 412.9L341.5 439.0M341.5 439.0L387.8 463.7M387.8 463.7L422.7 437.6M422.7 437.6L376.5 412.9' stroke='#151515' stroke-width='1.7' stroke-linecap='round' fill='none'/><polygon points='431.0,451.7 396.0,477.8 391.0,523.6 426.0,497.4' fill='rgb(74,74,74)' stroke='rgb(74,74,74)' stroke-width='0.6'/><path d='M431.0 451.7L396.0 477.8M396.0 477.8L391.0 523.6M391.0 523.6L426.0 497.4M426.0 497.4L431.0 451.7' stroke='#151515' stroke-width='1.7' stroke-linecap='round' fill='none'/><polygon points='426.0,497.4 391.0,523.6 428.0,543.3 463.0,517.2' fill='rgb(155,155,155)' stroke='rgb(155,155,155)' stroke-width='0.6'/><path d='M426.0 497.4L391.0 523.6M391.0 523.6L428.0 543.3M428.0 543.3L463.0 517.2M463.0 517.2L426.0 497.4' stroke='#151515' stroke-width='1.7' stroke-linecap='round' fill='none'/><polygon points='463.0,517.2 428.0,543.3 427.0,552.5 462.0,526.4' fill='rgb(74,74,74)' stroke='rgb(74,74,74)' stroke-width='0.6'/><path d='M463.0 517.2L428.0 543.3M427.0 552.5L462.0 526.4' stroke='#151515' stroke-width='1.7' stroke-linecap='round' fill='none'/><polygon points='307.1,381.2 302.1,426.9 325.3,439.3 330.3,393.5' fill='rgb(155,155,155)' stroke='rgb(155,155,155)' stroke-width='0.6'/><path d='M302.1 426.9L325.3 439.3M325.3 439.3L330.3 393.5M330.3 393.5L307.1 381.2' stroke='#151515' stroke-width='1.7' stroke-linecap='round' fill='none'/><polygon points='333.5,453.4 328.5,499.2 374.8,523.9 379.8,478.1' fill='rgb(155,155,155)' stroke='rgb(155,155,155)' stroke-width='0.6'/><path d='M333.5 453.4L328.5 499.2M328.5 499.2L374.8 523.9M374.8 523.9L379.8 478.1M379.8 478.1L333.5 453.4' stroke='#151515' stroke-width='1.7' stroke-linecap='round' fill='none'/><polygon points='383.0,537.9 379.0,574.6 416.0,594.3 420.0,557.7' fill='rgb(155,155,155)' stroke='rgb(155,155,155)' stroke-width='0.6'/><path d='M383.0 537.9L379.0 574.6M379.0 574.6L416.0 594.3M416.0 594.3L420.0 557.7M420.0 557.7L383.0 537.9' stroke='#151515' stroke-width='1.7' stroke-linecap='round' fill='none'/><polygon points='427.0,552.5 420.0,557.7 416.0,594.3 423.0,589.1' fill='rgb(74,74,74)' stroke='rgb(74,74,74)' stroke-width='0.6'/><path d='M420.0 557.7L416.0 594.3M416.0 594.3L423.0 589.1M423.0 589.1L427.0 552.5' stroke='#151515' stroke-width='1.7' stroke-linecap='round' fill='none'/><polygon points='274.2,447.8 273.2,457.0 296.3,469.3 297.3,460.2' fill='rgb(155,155,155)' stroke='rgb(155,155,155)' stroke-width='0.6'/><path d='M273.2 457.0L296.3 469.3M297.3 460.2L274.2 447.8' stroke='#151515' stroke-width='1.7' stroke-linecap='round' fill='none'/><polygon points='302.1,426.9 274.2,447.8 297.3,460.2 325.3,439.3' fill='rgb(155,155,155)' stroke='rgb(155,155,155)' stroke-width='0.6'/><path d='M274.2 447.8L297.3 460.2M297.3 460.2L325.3 439.3M325.3 439.3L302.1 426.9' stroke='#151515' stroke-width='1.7' stroke-linecap='round' fill='none'/><polygon points='296.3,469.3 291.3,515.1 300.5,520.1 305.5,474.3' fill='rgb(155,155,155)' stroke='rgb(155,155,155)' stroke-width='0.6'/><path d='M296.3 469.3L291.3 515.1M300.5 520.1L305.5 474.3' stroke='#151515' stroke-width='1.7' stroke-linecap='round' fill='none'/><polygon points='333.5,453.4 305.5,474.3 300.5,520.1 328.5,499.2' fill='rgb(74,74,74)' stroke='rgb(74,74,74)' stroke-width='0.6'/><path d='M333.5 453.4L305.5 474.3M305.5 474.3L300.5 520.1M300.5 520.1L328.5 499.2M328.5 499.2L333.5 453.4' stroke='#151515' stroke-width='1.7' stroke-linecap='round' fill='none'/><polygon points='300.5,520.1 299.5,529.2 345.8,553.9 346.8,544.8' fill='rgb(155,155,155)' stroke='rgb(155,155,155)' stroke-width='0.6'/><path d='M299.5 529.2L345.8 553.9M346.8 544.8L300.5 520.1' stroke='#151515' stroke-width='1.7' stroke-linecap='round' fill='none'/><polygon points='328.5,499.2 300.5,520.1 346.8,544.8 374.8,523.9' fill='rgb(155,155,155)' stroke='rgb(155,155,155)' stroke-width='0.6'/><path d='M328.5 499.2L300.5 520.1M300.5 520.1L346.8 544.8M346.8 544.8L374.8 523.9M374.8 523.9L328.5 499.2' stroke='#151515' stroke-width='1.7' stroke-linecap='round' fill='none'/><polygon points='345.8,553.9 341.8,590.5 351.0,595.5 355.0,558.8' fill='rgb(155,155,155)' stroke='rgb(155,155,155)' stroke-width='0.6'/><path d='M345.8 553.9L341.8 590.5M341.8 590.5L351.0 595.5M351.0 595.5L355.0 558.8' stroke='#151515' stroke-width='1.7' stroke-linecap='round' fill='none'/><polygon points='383.0,537.9 355.0,558.8 351.0,595.5 379.0,574.6' fill='rgb(74,74,74)' stroke='rgb(74,74,74)' stroke-width='0.6'/><path d='M383.0 537.9L355.0 558.8M355.0 558.8L351.0 595.5M351.0 595.5L379.0 574.6M379.0 574.6L383.0 537.9' stroke='#151515' stroke-width='1.7' stroke-linecap='round' fill='none'/><polygon points='529.7,223.2 522.7,228.4 531.9,233.4 538.9,228.2' fill='rgb(155,155,155)' stroke='rgb(155,155,155)' stroke-width='0.6'/><polygon points='571.9,284.5 564.9,289.8 563.9,298.9 570.9,293.7' fill='rgb(74,74,74)' stroke='rgb(74,74,74)' stroke-width='0.6'/><polygon points='432.2,224.9 425.2,230.1 434.5,235.1 441.4,229.9' fill='rgb(155,155,155)' stroke='rgb(155,155,155)' stroke-width='0.6'/><polygon points='523.9,370.8 517.0,376.0 516.0,385.2 522.9,379.9' fill='rgb(74,74,74)' stroke='rgb(74,74,74)' stroke-width='0.6'/><polygon points='476.0,457.1 469.0,462.3 468.0,471.4 475.0,466.2' fill='rgb(74,74,74)' stroke='rgb(74,74,74)' stroke-width='0.6'/><polygon points='428.0,543.3 421.0,548.6 420.0,557.7 427.0,552.5' fill='rgb(74,74,74)' stroke='rgb(74,74,74)' stroke-width='0.6'/><polygon points='297.3,460.2 296.3,469.3 305.5,474.3 306.5,465.1' fill='rgb(155,155,155)' stroke='rgb(155,155,155)' stroke-width='0.6'/><polygon points='346.8,544.8 345.8,553.9 355.0,558.8 356.0,549.7' fill='rgb(155,155,155)' stroke='rgb(155,155,155)' stroke-width='0.6'/><polygon points='531.9,233.4 527.9,270.0 564.9,289.8 568.9,253.1' fill='rgb(155,155,155)' stroke='rgb(155,155,155)' stroke-width='0.6'/><path d='M531.9 233.4L527.9 270.0M527.9 270.0L564.9 289.8M564.9 289.8L568.9 253.1M568.9 253.1L531.9 233.4' stroke='#151515' stroke-width='1.7' stroke-linecap='round' fill='none'/><polygon points='538.9,228.2 531.9,233.4 568.9,253.1 575.9,247.9' fill='rgb(155,155,155)' stroke='rgb(155,155,155)' stroke-width='0.6'/><path d='M531.9 233.4L568.9 253.1M568.9 253.1L575.9 247.9M575.9 247.9L538.9 228.2' stroke='#151515' stroke-width='1.7' stroke-linecap='round' fill='none'/><polygon points='575.9,247.9 568.9,253.1 564.9,289.8 571.9,284.5' fill='rgb(74,74,74)' stroke='rgb(74,74,74)' stroke-width='0.6'/><path d='M575.9 247.9L568.9 253.1M568.9 253.1L564.9 289.8M571.9 284.5L575.9 247.9' stroke='#151515' stroke-width='1.7' stroke-linecap='round' fill='none'/><polygon points='522.7,228.4 487.7,254.6 496.9,259.5 531.9,233.4' fill='rgb(155,155,155)' stroke='rgb(155,155,155)' stroke-width='0.6'/><path d='M522.7 228.4L487.7 254.6M496.9 259.5L531.9 233.4' stroke='#151515' stroke-width='1.7' stroke-linecap='round' fill='none'/><polygon points='531.9,233.4 496.9,259.5 492.9,296.1 527.9,270.0' fill='rgb(74,74,74)' stroke='rgb(74,74,74)' stroke-width='0.6'/><path d='M531.9 233.4L496.9 259.5M496.9 259.5L492.9 296.1M492.9 296.1L527.9 270.0M527.9 270.0L531.9 233.4' stroke='#151515' stroke-width='1.7' stroke-linecap='round' fill='none'/><polygon points='527.9,270.0 492.9,296.1 529.9,315.9 564.9,289.8' fill='rgb(155,155,155)' stroke='rgb(155,155,155)' stroke-width='0.6'/><path d='M527.9 270.0L492.9 296.1M492.9 296.1L529.9 315.9M529.9 315.9L564.9 289.8M564.9 289.8L527.9 270.0' stroke='#151515' stroke-width='1.7' stroke-linecap='round' fill='none'/><polygon points='564.9,289.8 529.9,315.9 528.9,325.0 563.9,298.9' fill='rgb(74,74,74)' stroke='rgb(74,74,74)' stroke-width='0.6'/><path d='M564.9 289.8L529.9 315.9M528.9 325.0L563.9 298.9' stroke='#151515' stroke-width='1.7' stroke-linecap='round' fill='none'/><polygon points='434.5,235.1 430.5,271.7 476.7,296.4 480.7,259.8' fill='rgb(155,155,155)' stroke='rgb(155,155,155)' stroke-width='0.6'/><path d='M434.5 235.1L430.5 271.7M430.5 271.7L476.7 296.4M476.7 296.4L480.7 259.8M480.7 259.8L434.5 235.1' stroke='#151515' stroke-width='1.7' stroke-linecap='round' fill='none'/><polygon points='441.4,229.9 434.5,235.1 480.7,259.8 487.7,254.6' fill='rgb(155,155,155)' stroke='rgb(155,155,155)' stroke-width='0.6'/><path d='M434.5 235.1L480.7 259.8M487.7 254.6L441.4 229.9' stroke='#151515' stroke-width='1.7' stroke-linecap='round' fill='none'/><polygon points='485.0,310.5 480.0,356.3 517.0,376.0 522.0,330.3' fill='rgb(155,155,155)' stroke='rgb(155,155,155)' stroke-width='0.6'/><path d='M485.0 310.5L480.0 356.3M480.0 356.3L517.0 376.0M517.0 376.0L522.0 330.3M522.0 330.3L485.0 310.5' stroke='#151515' stroke-width='1.7' stroke-linecap='round' fill='none'/><polygon points='528.9,325.0 522.0,330.3 517.0,376.0 523.9,370.8' fill='rgb(74,74,74)' stroke='rgb(74,74,74)' stroke-width='0.6'/><path d='M522.0 330.3L517.0 376.0M523.9 370.8L528.9 325.0' stroke='#151515' stroke-width='1.7' stroke-linecap='round' fill='none'/><polygon points='425.2,230.1 390.2,256.3 399.5,261.2 434.5,235.1' fill='rgb(155,155,155)' stroke='rgb(155,155,155)' stroke-width='0.6'/><path d='M425.2 230.1L390.2 256.3M399.5 261.2L434.5 235.1' stroke='#151515' stroke-width='1.7' stroke-linecap='round' fill='none'/><polygon points='434.5,235.1 399.5,261.2 395.5,297.8 430.5,271.7' fill='rgb(74,74,74)' stroke='rgb(74,74,74)' stroke-width='0.6'/><path d='M434.5 235.1L399.5 261.2M399.5 261.2L395.5 297.8M395.5 297.8L430.5 271.7M430.5 271.7L434.5 235.1' stroke='#151515' stroke-width='1.7' stroke-linecap='round' fill='none'/><polygon points='430.5,271.7 395.5,297.8 441.7,322.5 476.7,296.4' fill='rgb(155,155,155)' stroke='rgb(155,155,155)' stroke-width='0.6'/><path d='M430.5 271.7L395.5 297.8M395.5 297.8L441.7 322.5M441.7 322.5L476.7 296.4M476.7 296.4L430.5 271.7' stroke='#151515' stroke-width='1.7' stroke-linecap='round' fill='none'/><polygon points='485.0,310.5 450.0,336.6 445.0,382.4 480.0,356.3' fill='rgb(74,74,74)' stroke='rgb(74,74,74)' stroke-width='0.6'/><path d='M485.0 310.5L450.0 336.6M450.0 336.6L445.0 382.4M445.0 382.4L480.0 356.3M480.0 356.3L485.0 310.5' stroke='#151515' stroke-width='1.7' stroke-linecap='round' fill='none'/><polygon points='480.0,356.3 445.0,382.4 482.0,402.1 517.0,376.0' fill='rgb(155,155,155)' stroke='rgb(155,155,155)' stroke-width='0.6'/><path d='M480.0 356.3L445.0 382.4M445.0 382.4L482.0 402.1M482.0 402.1L517.0 376.0M517.0 376.0L480.0 356.3' stroke='#151515' stroke-width='1.7' stroke-linecap='round' fill='none'/><polygon points='517.0,376.0 482.0,402.1 481.0,411.3 516.0,385.2' fill='rgb(74,74,74)' stroke='rgb(74,74,74)' stroke-width='0.6'/><path d='M517.0 376.0L482.0 402.1M481.0 411.3L516.0 385.2' stroke='#151515' stroke-width='1.7' stroke-linecap='round' fill='none'/><polygon points='360.1,249.1 356.1,285.8 379.2,298.1 383.2,261.5' fill='rgb(155,155,155)' stroke='rgb(155,155,155)' stroke-width='0.6'/><path d='M356.1 285.8L379.2 298.1M379.2 298.1L383.2 261.5M383.2 261.5L360.1 249.1' stroke='#151515' stroke-width='1.7' stroke-linecap='round' fill='none'/><polygon points='367.1,243.9 360.1,249.1 383.2,261.5 390.2,256.3' fill='rgb(155,155,155)' stroke='rgb(155,155,155)' stroke-width='0.6'/><path d='M360.1 249.1L383.2 261.5M390.2 256.3L367.1 243.9' stroke='#151515' stroke-width='1.7' stroke-linecap='round' fill='none'/><polygon points='387.5,312.2 382.5,358.0 428.7,382.7 433.7,336.9' fill='rgb(155,155,155)' stroke='rgb(155,155,155)' stroke-width='0.6'/><path d='M387.5 312.2L382.5 358.0M382.5 358.0L428.7 382.7M428.7 382.7L433.7 336.9M433.7 336.9L387.5 312.2' stroke='#151515' stroke-width='1.7' stroke-linecap='round' fill='none'/><polygon points='437.0,396.8 432.0,442.5 469.0,462.3 474.0,416.5' fill='rgb(155,155,155)' stroke='rgb(155,155,155)' stroke-width='0.6'/><path d='M437.0 396.8L432.0 442.5M432.0 442.5L469.0 462.3M469.0 462.3L474.0 416.5M474.0 416.5L437.0 396.8' stroke='#151515' stroke-width='1.7' stroke-linecap='round' fill='none'/><polygon points='481.0,411.3 474.0,416.5 469.0,462.3 476.0,457.1' fill='rgb(74,74,74)' stroke='rgb(74,74,74)' stroke-width='0.6'/><path d='M474.0 416.5L469.0 462.3M476.0 457.1L481.0 411.3' stroke='#151515' stroke-width='1.7' stroke-linecap='round' fill='none'/><polygon points='356.1,285.8 321.1,311.9 344.3,324.2 379.2,298.1' fill='rgb(155,155,155)' stroke='rgb(155,155,155)' stroke-width='0.6'/><path d='M321.1 311.9L344.3 324.2M344.3 324.2L379.2 298.1M379.2 298.1L356.1 285.8' stroke='#151515' stroke-width='1.7' stroke-linecap='round' fill='none'/><polygon points='387.5,312.2 352.5,338.3 347.5,384.1 382.5,358.0' fill='rgb(74,74,74)' stroke='rgb(74,74,74)' stroke-width='0.6'/><path d='M387.5 312.2L352.5 338.3M352.5 338.3L347.5 384.1M347.5 384.1L382.5 358.0M382.5 358.0L387.5 312.2' stroke='#151515' stroke-width='1.7' stroke-linecap='round' fill='none'/><polygon points='382.5,358.0 347.5,384.1 393.8,408.8 428.7,382.7' fill='rgb(155,155,155)' stroke='rgb(155,155,155)' stroke-width='0.6'/><path d='M382.5 358.0L347.5 384.1M347.5 384.1L393.8 408.8M393.8 408.8L428.7 382.7M428.7 382.7L382.5 358.0' stroke='#151515' stroke-width='1.7' stroke-linecap='round' fill='none'/><polygon points='437.0,396.8 402.0,422.9 397.0,468.7 432.0,442.5' fill='rgb(74,74,74)' stroke='rgb(74,74,74)' stroke-width='0.6'/><path d='M437.0 396.8L402.0 422.9M402.0 422.9L397.0 468.7M397.0 468.7L432.0 442.5M432.0 442.5L437.0 396.8' stroke='#151515' stroke-width='1.7' stroke-linecap='round' fill='none'/><polygon points='432.0,442.5 397.0,468.7 434.0,488.4 469.0,462.3' fill='rgb(155,155,155)' stroke='rgb(155,155,155)' stroke-width='0.6'/><path d='M432.0 442.5L397.0 468.7M397.0 468.7L434.0 488.4M434.0 488.4L469.0 462.3M469.0 462.3L432.0 442.5' stroke='#151515' stroke-width='1.7' stroke-linecap='round' fill='none'/><polygon points='469.0,462.3 434.0,488.4 433.0,497.6 468.0,471.4' fill='rgb(74,74,74)' stroke='rgb(74,74,74)' stroke-width='0.6'/><path d='M469.0 462.3L434.0 488.4M433.0 497.6L468.0 471.4' stroke='#151515' stroke-width='1.7' stroke-linecap='round' fill='none'/><polygon points='313.1,326.3 308.1,372.0 331.3,384.4 336.3,338.6' fill='rgb(155,155,155)' stroke='rgb(155,155,155)' stroke-width='0.6'/><path d='M308.1 372.0L331.3 384.4M331.3 384.4L336.3 338.6M336.3 338.6L313.1 326.3' stroke='#151515' stroke-width='1.7' stroke-linecap='round' fill='none'/><polygon points='339.5,398.5 334.5,444.2 380.8,468.9 385.8,423.2' fill='rgb(155,155,155)' stroke='rgb(155,155,155)' stroke-width='0.6'/><path d='M339.5 398.5L334.5 444.2M334.5 444.2L380.8 468.9M380.8 468.9L385.8 423.2M385.8 423.2L339.5 398.5' stroke='#151515' stroke-width='1.7' stroke-linecap='round' fill='none'/><polygon points='389.0,483.0 384.0,528.8 421.0,548.6 426.0,502.8' fill='rgb(155,155,155)' stroke='rgb(155,155,155)' stroke-width='0.6'/><path d='M389.0 483.0L384.0 528.8M384.0 528.8L421.0 548.6M421.0 548.6L426.0 502.8M426.0 502.8L389.0 483.0' stroke='#151515' stroke-width='1.7' stroke-linecap='round' fill='none'/><polygon points='433.0,497.6 426.0,502.8 421.0,548.6 428.0,543.3' fill='rgb(74,74,74)' stroke='rgb(74,74,74)' stroke-width='0.6'/><path d='M426.0 502.8L421.0 548.6M428.0 543.3L433.0 497.6' stroke='#151515' stroke-width='1.7' stroke-linecap='round' fill='none'/><polygon points='280.2,392.9 279.2,402.1 302.3,414.4 303.3,405.3' fill='rgb(155,155,155)' stroke='rgb(155,155,155)' stroke-width='0.6'/><path d='M279.2 402.1L302.3 414.4M303.3 405.3L280.2 392.9' stroke='#151515' stroke-width='1.7' stroke-linecap='round' fill='none'/><polygon points='308.1,372.0 280.2,392.9 303.3,405.3 331.3,384.4' fill='rgb(155,155,155)' stroke='rgb(155,155,155)' stroke-width='0.6'/><path d='M280.2 392.9L303.3 405.3M303.3 405.3L331.3 384.4M331.3 384.4L308.1 372.0' stroke='#151515' stroke-width='1.7' stroke-linecap='round' fill='none'/><polygon points='302.3,414.4 297.3,460.2 306.5,465.1 311.5,419.4' fill='rgb(155,155,155)' stroke='rgb(155,155,155)' stroke-width='0.6'/><path d='M302.3 414.4L297.3 460.2M306.5 465.1L311.5 419.4' stroke='#151515' stroke-width='1.7' stroke-linecap='round' fill='none'/><polygon points='339.5,398.5 311.5,419.4 306.5,465.1 334.5,444.2' fill='rgb(74,74,74)' stroke='rgb(74,74,74)' stroke-width='0.6'/><path d='M339.5 398.5L311.5 419.4M311.5 419.4L306.5 465.1M306.5 465.1L334.5 444.2M334.5 444.2L339.5 398.5' stroke='#151515' stroke-width='1.7' stroke-linecap='round' fill='none'/><polygon points='306.5,465.1 305.5,474.3 351.8,499.0 352.8,489.8' fill='rgb(155,155,155)' stroke='rgb(155,155,155)' stroke-width='0.6'/><path d='M305.5 474.3L351.8 499.0M352.8 489.8L306.5 465.1' stroke='#151515' stroke-width='1.7' stroke-linecap='round' fill='none'/><polygon points='334.5,444.2 306.5,465.1 352.8,489.8 380.8,468.9' fill='rgb(155,155,155)' stroke='rgb(155,155,155)' stroke-width='0.6'/><path d='M334.5 444.2L306.5 465.1M306.5 465.1L352.8 489.8M352.8 489.8L380.8 468.9M380.8 468.9L334.5 444.2' stroke='#151515' stroke-width='1.7' stroke-linecap='round' fill='none'/><polygon points='351.8,499.0 346.8,544.8 356.0,549.7 361.0,503.9' fill='rgb(155,155,155)' stroke='rgb(155,155,155)' stroke-width='0.6'/><path d='M351.8 499.0L346.8 544.8M356.0 549.7L361.0 503.9' stroke='#151515' stroke-width='1.7' stroke-linecap='round' fill='none'/><polygon points='389.0,483.0 361.0,503.9 356.0,549.7 384.0,528.8' fill='rgb(74,74,74)' stroke='rgb(74,74,74)' stroke-width='0.6'/><path d='M389.0 483.0L361.0 503.9M361.0 503.9L356.0 549.7M356.0 549.7L384.0 528.8M384.0 528.8L389.0 483.0' stroke='#151515' stroke-width='1.7' stroke-linecap='round' fill='none'/><polygon points='356.0,549.7 355.0,558.8 392.0,578.6 393.0,569.5' fill='rgb(155,155,155)' stroke='rgb(155,155,155)' stroke-width='0.6'/><path d='M355.0 558.8L392.0 578.6M392.0 578.6L393.0 569.5M393.0 569.5L356.0 549.7' stroke='#151515' stroke-width='1.7' stroke-linecap='round' fill='none'/><polygon points='384.0,528.8 356.0,549.7 393.0,569.5 421.0,548.6' fill='rgb(155,155,155)' stroke='rgb(155,155,155)' stroke-width='0.6'/><path d='M384.0 528.8L356.0 549.7M356.0 549.7L393.0 569.5M393.0 569.5L421.0 548.6M421.0 548.6L384.0 528.8' stroke='#151515' stroke-width='1.7' stroke-linecap='round' fill='none'/><polygon points='421.0,548.6 393.0,569.5 392.0,578.6 420.0,557.7' fill='rgb(74,74,74)' stroke='rgb(74,74,74)' stroke-width='0.6'/><path d='M421.0 548.6L393.0 569.5M393.0 569.5L392.0 578.6M392.0 578.6L420.0 557.7' stroke='#151515' stroke-width='1.7' stroke-linecap='round' fill='none'/><polygon points='487.7,254.6 480.7,259.8 489.9,264.7 496.9,259.5' fill='rgb(155,155,155)' stroke='rgb(155,155,155)' stroke-width='0.6'/><polygon points='529.9,315.9 522.9,321.1 522.0,330.3 528.9,325.0' fill='rgb(74,74,74)' stroke='rgb(74,74,74)' stroke-width='0.6'/><polygon points='390.2,256.3 383.2,261.5 392.5,266.4 399.5,261.2' fill='rgb(155,155,155)' stroke='rgb(155,155,155)' stroke-width='0.6'/><polygon points='482.0,402.1 475.0,407.4 474.0,416.5 481.0,411.3' fill='rgb(74,74,74)' stroke='rgb(74,74,74)' stroke-width='0.6'/><polygon points='434.0,488.4 427.0,493.6 426.0,502.8 433.0,497.6' fill='rgb(74,74,74)' stroke='rgb(74,74,74)' stroke-width='0.6'/><polygon points='303.3,405.3 302.3,414.4 311.5,419.4 312.5,410.2' fill='rgb(155,155,155)' stroke='rgb(155,155,155)' stroke-width='0.6'/><polygon points='352.8,489.8 351.8,499.0 361.0,503.9 362.0,494.8' fill='rgb(155,155,155)' stroke='rgb(155,155,155)' stroke-width='0.6'/><polygon points='489.9,264.7 486.0,301.3 522.9,321.1 526.9,284.5' fill='rgb(155,155,155)' stroke='rgb(155,155,155)' stroke-width='0.6'/><path d='M489.9 264.7L486.0 301.3M486.0 301.3L522.9 321.1M522.9 321.1L526.9 284.5M526.9 284.5L489.9 264.7' stroke='#151515' stroke-width='1.7' stroke-linecap='round' fill='none'/><polygon points='496.9,259.5 489.9,264.7 526.9,284.5 533.9,279.3' fill='rgb(155,155,155)' stroke='rgb(155,155,155)' stroke-width='0.6'/><path d='M489.9 264.7L526.9 284.5M526.9 284.5L533.9 279.3M533.9 279.3L496.9 259.5' stroke='#151515' stroke-width='1.7' stroke-linecap='round' fill='none'/><polygon points='533.9,279.3 526.9,284.5 522.9,321.1 529.9,315.9' fill='rgb(74,74,74)' stroke='rgb(74,74,74)' stroke-width='0.6'/><path d='M533.9 279.3L526.9 284.5M526.9 284.5L522.9 321.1M529.9 315.9L533.9 279.3' stroke='#151515' stroke-width='1.7' stroke-linecap='round' fill='none'/><polygon points='480.7,259.8 445.7,285.9 455.0,290.9 489.9,264.7' fill='rgb(155,155,155)' stroke='rgb(155,155,155)' stroke-width='0.6'/><path d='M480.7 259.8L445.7 285.9M455.0 290.9L489.9 264.7' stroke='#151515' stroke-width='1.7' stroke-linecap='round' fill='none'/><polygon points='489.9,264.7 455.0,290.9 451.0,327.5 486.0,301.3' fill='rgb(74,74,74)' stroke='rgb(74,74,74)' stroke-width='0.6'/><path d='M489.9 264.7L455.0 290.9M455.0 290.9L451.0 327.5M451.0 327.5L486.0 301.3M486.0 301.3L489.9 264.7' stroke='#151515' stroke-width='1.7' stroke-linecap='round' fill='none'/><polygon points='486.0,301.3 451.0,327.5 488.0,347.2 522.9,321.1' fill='rgb(155,155,155)' stroke='rgb(155,155,155)' stroke-width='0.6'/><path d='M486.0 301.3L451.0 327.5M451.0 327.5L488.0 347.2M488.0 347.2L522.9 321.1M522.9 321.1L486.0 301.3' stroke='#151515' stroke-width='1.7' stroke-linecap='round' fill='none'/><polygon points='522.9,321.1 488.0,347.2 487.0,356.4 522.0,330.3' fill='rgb(74,74,74)' stroke='rgb(74,74,74)' stroke-width='0.6'/><path d='M522.9 321.1L488.0 347.2M487.0 356.4L522.0 330.3' stroke='#151515' stroke-width='1.7' stroke-linecap='round' fill='none'/><polygon points='392.5,266.4 388.5,303.0 434.7,327.7 438.7,291.1' fill='rgb(155,155,155)' stroke='rgb(155,155,155)' stroke-width='0.6'/><path d='M392.5 266.4L388.5 303.0M388.5 303.0L434.7 327.7M434.7 327.7L438.7 291.1M438.7 291.1L392.5 266.4' stroke='#151515' stroke-width='1.7' stroke-linecap='round' fill='none'/><polygon points='399.5,261.2 392.5,266.4 438.7,291.1 445.7,285.9' fill='rgb(155,155,155)' stroke='rgb(155,155,155)' stroke-width='0.6'/><path d='M392.5 266.4L438.7 291.1M445.7 285.9L399.5 261.2' stroke='#151515' stroke-width='1.7' stroke-linecap='round' fill='none'/><polygon points='443.0,341.8 438.0,387.6 475.0,407.4 480.0,361.6' fill='rgb(155,155,155)' stroke='rgb(155,155,155)' stroke-width='0.6'/><path d='M443.0 341.8L438.0 387.6M438.0 387.6L475.0 407.4M475.0 407.4L480.0 361.6M480.0 361.6L443.0 341.8' stroke='#151515' stroke-width='1.7' stroke-linecap='round' fill='none'/><polygon points='487.0,356.4 480.0,361.6 475.0,407.4 482.0,402.1' fill='rgb(74,74,74)' stroke='rgb(74,74,74)' stroke-width='0.6'/><path d='M480.0 361.6L475.0 407.4M482.0 402.1L487.0 356.4' stroke='#151515' stroke-width='1.7' stroke-linecap='round' fill='none'/><polygon points='383.2,261.5 348.3,287.6 357.5,292.6 392.5,266.4' fill='rgb(155,155,155)' stroke='rgb(155,155,155)' stroke-width='0.6'/><path d='M383.2 261.5L348.3 287.6M357.5 292.6L392.5 266.4' stroke='#151515' stroke-width='1.7' stroke-linecap='round' fill='none'/><polygon points='392.5,266.4 357.5,292.6 353.5,329.2 388.5,303.0' fill='rgb(74,74,74)' stroke='rgb(74,74,74)' stroke-width='0.6'/><path d='M392.5 266.4L357.5 292.6M357.5 292.6L353.5 329.2M353.5 329.2L388.5 303.0M388.5 303.0L392.5 266.4' stroke='#151515' stroke-width='1.7' stroke-linecap='round' fill='none'/><polygon points='388.5,303.0 353.5,329.2 399.8,353.9 434.7,327.7' fill='rgb(155,155,155)' stroke='rgb(155,155,155)' stroke-width='0.6'/><path d='M388.5 303.0L353.5 329.2M353.5 329.2L399.8 353.9M399.8 353.9L434.7 327.7M434.7 327.7L388.5 303.0' stroke='#151515' stroke-width='1.7' stroke-linecap='round' fill='none'/><polygon points='443.0,341.8 408.0,368.0 403.0,413.7 438.0,387.6' fill='rgb(74,74,74)' stroke='rgb(74,74,74)' stroke-width='0.6'/><path d='M443.0 341.8L408.0 368.0M408.0 368.0L403.0 413.7M403.0 413.7L438.0 387.6M438.0 387.6L443.0 341.8' stroke='#151515' stroke-width='1.7' stroke-linecap='round' fill='none'/><polygon points='438.0,387.6 403.0,413.7 440.0,433.5 475.0,407.4' fill='rgb(155,155,155)' stroke='rgb(155,155,155)' stroke-width='0.6'/><path d='M438.0 387.6L403.0 413.7M403.0 413.7L440.0 433.5M440.0 433.5L475.0 407.4M475.0 407.4L438.0 387.6' stroke='#151515' stroke-width='1.7' stroke-linecap='round' fill='none'/><polygon points='475.0,407.4 440.0,433.5 439.0,442.6 474.0,416.5' fill='rgb(74,74,74)' stroke='rgb(74,74,74)' stroke-width='0.6'/><path d='M475.0 407.4L440.0 433.5M439.0 442.6L474.0 416.5' stroke='#151515' stroke-width='1.7' stroke-linecap='round' fill='none'/><polygon points='318.1,280.5 314.1,317.1 337.3,329.5 341.3,292.8' fill='rgb(155,155,155)' stroke='rgb(155,155,155)' stroke-width='0.6'/><path d='M314.1 317.1L337.3 329.5M337.3 329.5L341.3 292.8M341.3 292.8L318.1 280.5' stroke='#151515' stroke-width='1.7' stroke-linecap='round' fill='none'/><polygon points='325.1,275.3 318.1,280.5 341.3,292.8 348.3,287.6' fill='rgb(155,155,155)' stroke='rgb(155,155,155)' stroke-width='0.6'/><path d='M318.1 280.5L341.3 292.8M348.3 287.6L325.1 275.3' stroke='#151515' stroke-width='1.7' stroke-linecap='round' fill='none'/><polygon points='345.5,343.6 340.5,389.3 386.8,414.0 391.8,368.3' fill='rgb(155,155,155)' stroke='rgb(155,155,155)' stroke-width='0.6'/><path d='M345.5 343.6L340.5 389.3M340.5 389.3L386.8 414.0M386.8 414.0L391.8 368.3M391.8 368.3L345.5 343.6' stroke='#151515' stroke-width='1.7' stroke-linecap='round' fill='none'/><polygon points='395.0,428.1 390.0,473.9 427.0,493.6 432.0,447.9' fill='rgb(155,155,155)' stroke='rgb(155,155,155)' stroke-width='0.6'/><path d='M395.0 428.1L390.0 473.9M390.0 473.9L427.0 493.6M427.0 493.6L432.0 447.9M432.0 447.9L395.0 428.1' stroke='#151515' stroke-width='1.7' stroke-linecap='round' fill='none'/><polygon points='439.0,442.6 432.0,447.9 427.0,493.6 434.0,488.4' fill='rgb(74,74,74)' stroke='rgb(74,74,74)' stroke-width='0.6'/><path d='M432.0 447.9L427.0 493.6M434.0 488.4L439.0 442.6' stroke='#151515' stroke-width='1.7' stroke-linecap='round' fill='none'/><polygon points='286.2,338.0 285.2,347.2 308.3,359.5 309.3,350.4' fill='rgb(155,155,155)' stroke='rgb(155,155,155)' stroke-width='0.6'/><path d='M285.2 347.2L308.3 359.5M309.3 350.4L286.2 338.0' stroke='#151515' stroke-width='1.7' stroke-linecap='round' fill='none'/><polygon points='314.1,317.1 286.2,338.0 309.3,350.4 337.3,329.5' fill='rgb(155,155,155)' stroke='rgb(155,155,155)' stroke-width='0.6'/><path d='M286.2 338.0L309.3 350.4M309.3 350.4L337.3 329.5M337.3 329.5L314.1 317.1' stroke='#151515' stroke-width='1.7' stroke-linecap='round' fill='none'/><polygon points='308.3,359.5 303.3,405.3 312.5,410.2 317.5,364.5' fill='rgb(155,155,155)' stroke='rgb(155,155,155)' stroke-width='0.6'/><path d='M308.3 359.5L303.3 405.3M312.5 410.2L317.5 364.5' stroke='#151515' stroke-width='1.7' stroke-linecap='round' fill='none'/><polygon points='345.5,343.6 317.5,364.5 312.5,410.2 340.5,389.3' fill='rgb(74,74,74)' stroke='rgb(74,74,74)' stroke-width='0.6'/><path d='M345.5 343.6L317.5 364.5M317.5 364.5L312.5 410.2M312.5 410.2L340.5 389.3M340.5 389.3L345.5 343.6' stroke='#151515' stroke-width='1.7' stroke-linecap='round' fill='none'/><polygon points='312.5,410.2 311.5,419.4 357.8,444.1 358.8,434.9' fill='rgb(155,155,155)' stroke='rgb(155,155,155)' stroke-width='0.6'/><path d='M311.5 419.4L357.8 444.1M358.8 434.9L312.5 410.2' stroke='#151515' stroke-width='1.7' stroke-linecap='round' fill='none'/><polygon points='340.5,389.3 312.5,410.2 358.8,434.9 386.8,414.0' fill='rgb(155,155,155)' stroke='rgb(155,155,155)' stroke-width='0.6'/><path d='M340.5 389.3L312.5 410.2M312.5 410.2L358.8 434.9M358.8 434.9L386.8 414.0M386.8 414.0L340.5 389.3' stroke='#151515' stroke-width='1.7' stroke-linecap='round' fill='none'/><polygon points='357.8,444.1 352.8,489.8 362.0,494.8 367.0,449.0' fill='rgb(155,155,155)' stroke='rgb(155,155,155)' stroke-width='0.6'/><path d='M357.8 444.1L352.8 489.8M362.0 494.8L367.0 449.0' stroke='#151515' stroke-width='1.7' stroke-linecap='round' fill='none'/><polygon points='395.0,428.1 367.0,449.0 362.0,494.8 390.0,473.9' fill='rgb(74,74,74)' stroke='rgb(74,74,74)' stroke-width='0.6'/><path d='M395.0 428.1L367.0 449.0M367.0 449.0L362.0 494.8M362.0 494.8L390.0 473.9M390.0 473.9L395.0 428.1' stroke='#151515' stroke-width='1.7' stroke-linecap='round' fill='none'/><polygon points='362.0,494.8 361.0,503.9 398.0,523.7 399.0,514.5' fill='rgb(155,155,155)' stroke='rgb(155,155,155)' stroke-width='0.6'/><path d='M361.0 503.9L398.0 523.7M398.0 523.7L399.0 514.5M399.0 514.5L362.0 494.8' stroke='#151515' stroke-width='1.7' stroke-linecap='round' fill='none'/><polygon points='390.0,473.9 362.0,494.8 399.0,514.5 427.0,493.6' fill='rgb(155,155,155)' stroke='rgb(155,155,155)' stroke-width='0.6'/><path d='M390.0 473.9L362.0 494.8M362.0 494.8L399.0 514.5M399.0 514.5L427.0 493.6M427.0 493.6L390.0 473.9' stroke='#151515' stroke-width='1.7' stroke-linecap='round' fill='none'/><polygon points='427.0,493.6 399.0,514.5 398.0,523.7 426.0,502.8' fill='rgb(74,74,74)' stroke='rgb(74,74,74)' stroke-width='0.6'/><path d='M427.0 493.6L399.0 514.5M399.0 514.5L398.0 523.7M398.0 523.7L426.0 502.8' stroke='#151515' stroke-width='1.7' stroke-linecap='round' fill='none'/><polygon points='445.7,285.9 438.7,291.1 448.0,296.1 455.0,290.9' fill='rgb(155,155,155)' stroke='rgb(155,155,155)' stroke-width='0.6'/><polygon points='488.0,347.2 481.0,352.5 480.0,361.6 487.0,356.4' fill='rgb(74,74,74)' stroke='rgb(74,74,74)' stroke-width='0.6'/><polygon points='348.3,287.6 341.3,292.8 350.5,297.8 357.5,292.6' fill='rgb(155,155,155)' stroke='rgb(155,155,155)' stroke-width='0.6'/><polygon points='440.0,433.5 433.0,438.7 432.0,447.9 439.0,442.6' fill='rgb(74,74,74)' stroke='rgb(74,74,74)' stroke-width='0.6'/><polygon points='309.3,350.4 308.3,359.5 317.5,364.5 318.5,355.3' fill='rgb(155,155,155)' stroke='rgb(155,155,155)' stroke-width='0.6'/><polygon points='358.8,434.9 357.8,444.1 367.0,449.0 368.0,439.9' fill='rgb(155,155,155)' stroke='rgb(155,155,155)' stroke-width='0.6'/><polygon points='448.0,296.1 444.0,332.7 481.0,352.5 485.0,315.8' fill='rgb(155,155,155)' stroke='rgb(155,155,155)' stroke-width='0.6'/><path d='M448.0 296.1L444.0 332.7M444.0 332.7L481.0 352.5M481.0 352.5L485.0 315.8M485.0 315.8L448.0 296.1' stroke='#151515' stroke-width='1.7' stroke-linecap='round' fill='none'/><polygon points='455.0,290.9 448.0,296.1 485.0,315.8 492.0,310.6' fill='rgb(155,155,155)' stroke='rgb(155,155,155)' stroke-width='0.6'/><path d='M448.0 296.1L485.0 315.8M485.0 315.8L492.0 310.6M492.0 310.6L455.0 290.9' stroke='#151515' stroke-width='1.7' stroke-linecap='round' fill='none'/><polygon points='492.0,310.6 485.0,315.8 481.0,352.5 488.0,347.2' fill='rgb(74,74,74)' stroke='rgb(74,74,74)' stroke-width='0.6'/><path d='M492.0 310.6L485.0 315.8M485.0 315.8L481.0 352.5M488.0 347.2L492.0 310.6' stroke='#151515' stroke-width='1.7' stroke-linecap='round' fill='none'/><polygon points='438.7,291.1 403.7,317.3 413.0,322.2 448.0,296.1' fill='rgb(155,155,155)' stroke='rgb(155,155,155)' stroke-width='0.6'/><path d='M438.7 291.1L403.7 317.3M413.0 322.2L448.0 296.1' stroke='#151515' stroke-width='1.7' stroke-linecap='round' fill='none'/><polygon points='448.0,296.1 413.0,322.2 409.0,358.8 444.0,332.7' fill='rgb(74,74,74)' stroke='rgb(74,74,74)' stroke-width='0.6'/><path d='M448.0 296.1L413.0 322.2M413.0 322.2L409.0 358.8M409.0 358.8L444.0 332.7M444.0 332.7L448.0 296.1' stroke='#151515' stroke-width='1.7' stroke-linecap='round' fill='none'/><polygon points='444.0,332.7 409.0,358.8 446.0,378.6 481.0,352.5' fill='rgb(155,155,155)' stroke='rgb(155,155,155)' stroke-width='0.6'/><path d='M444.0 332.7L409.0 358.8M409.0 358.8L446.0 378.6M446.0 378.6L481.0 352.5M481.0 352.5L444.0 332.7' stroke='#151515' stroke-width='1.7' stroke-linecap='round' fill='none'/><polygon points='481.0,352.5 446.0,378.6 445.0,387.7 480.0,361.6' fill='rgb(74,74,74)' stroke='rgb(74,74,74)' stroke-width='0.6'/><path d='M481.0 352.5L446.0 378.6M445.0 387.7L480.0 361.6' stroke='#151515' stroke-width='1.7' stroke-linecap='round' fill='none'/><polygon points='350.5,297.8 346.5,334.4 392.8,359.1 396.8,322.5' fill='rgb(155,155,155)' stroke='rgb(155,155,155)' stroke-width='0.6'/><path d='M350.5 297.8L346.5 334.4M346.5 334.4L392.8 359.1M392.8 359.1L396.8 322.5M396.8 322.5L350.5 297.8' stroke='#151515' stroke-width='1.7' stroke-linecap='round' fill='none'/><polygon points='357.5,292.6 350.5,297.8 396.8,322.5 403.7,317.3' fill='rgb(155,155,155)' stroke='rgb(155,155,155)' stroke-width='0.6'/><path d='M350.5 297.8L396.8 322.5M403.7 317.3L357.5 292.6' stroke='#151515' stroke-width='1.7' stroke-linecap='round' fill='none'/><polygon points='401.0,373.2 396.0,419.0 433.0,438.7 438.0,393.0' fill='rgb(155,155,155)' stroke='rgb(155,155,155)' stroke-width='0.6'/><path d='M401.0 373.2L396.0 419.0M396.0 419.0L433.0 438.7M433.0 438.7L438.0 393.0M438.0 393.0L401.0 373.2' stroke='#151515' stroke-width='1.7' stroke-linecap='round' fill='none'/><polygon points='445.0,387.7 438.0,393.0 433.0,438.7 440.0,433.5' fill='rgb(74,74,74)' stroke='rgb(74,74,74)' stroke-width='0.6'/><path d='M438.0 393.0L433.0 438.7M440.0 433.5L445.0 387.7' stroke='#151515' stroke-width='1.7' stroke-linecap='round' fill='none'/><polygon points='313.3,313.7 309.3,350.4 318.5,355.3 322.5,318.7' fill='rgb(155,155,155)' stroke='rgb(155,155,155)' stroke-width='0.6'/><path d='M313.3 313.7L309.3 350.4M318.5 355.3L322.5 318.7M322.5 318.7L313.3 313.7' stroke='#151515' stroke-width='1.7' stroke-linecap='round' fill='none'/><polygon points='341.3,292.8 313.3,313.7 322.5,318.7 350.5,297.8' fill='rgb(155,155,155)' stroke='rgb(155,155,155)' stroke-width='0.6'/><path d='M341.3 292.8L313.3 313.7M313.3 313.7L322.5 318.7M322.5 318.7L350.5 297.8' stroke='#151515' stroke-width='1.7' stroke-linecap='round' fill='none'/><polygon points='350.5,297.8 322.5,318.7 318.5,355.3 346.5,334.4' fill='rgb(74,74,74)' stroke='rgb(74,74,74)' stroke-width='0.6'/><path d='M350.5 297.8L322.5 318.7M322.5 318.7L318.5 355.3M318.5 355.3L346.5 334.4M346.5 334.4L350.5 297.8' stroke='#151515' stroke-width='1.7' stroke-linecap='round' fill='none'/><polygon points='318.5,355.3 317.5,364.5 363.8,389.2 364.8,380.0' fill='rgb(155,155,155)' stroke='rgb(155,155,155)' stroke-width='0.6'/><path d='M317.5 364.5L363.8 389.2M364.8 380.0L318.5 355.3' stroke='#151515' stroke-width='1.7' stroke-linecap='round' fill='none'/><polygon points='346.5,334.4 318.5,355.3 364.8,380.0 392.8,359.1' fill='rgb(155,155,155)' stroke='rgb(155,155,155)' stroke-width='0.6'/><path d='M346.5 334.4L318.5 355.3M318.5 355.3L364.8 380.0M364.8 380.0L392.8 359.1M392.8 359.1L346.5 334.4' stroke='#151515' stroke-width='1.7' stroke-linecap='round' fill='none'/><polygon points='363.8,389.2 358.8,434.9 368.0,439.9 373.0,394.1' fill='rgb(155,155,155)' stroke='rgb(155,155,155)' stroke-width='0.6'/><path d='M363.8 389.2L358.8 434.9M368.0 439.9L373.0 394.1' stroke='#151515' stroke-width='1.7' stroke-linecap='round' fill='none'/><polygon points='401.0,373.2 373.0,394.1 368.0,439.9 396.0,419.0' fill='rgb(74,74,74)' stroke='rgb(74,74,74)' stroke-width='0.6'/><path d='M401.0 373.2L373.0 394.1M373.0 394.1L368.0 439.9M368.0 439.9L396.0 419.0M396.0 419.0L401.0 373.2' stroke='#151515' stroke-width='1.7' stroke-linecap='round' fill='none'/><polygon points='368.0,439.9 367.0,449.0 404.0,468.8 405.0,459.6' fill='rgb(155,155,155)' stroke='rgb(155,155,155)' stroke-width='0.6'/><path d='M367.0 449.0L404.0 468.8M404.0 468.8L405.0 459.6M405.0 459.6L368.0 439.9' stroke='#151515' stroke-width='1.7' stroke-linecap='round' fill='none'/><polygon points='396.0,419.0 368.0,439.9 405.0,459.6 433.0,438.7' fill='rgb(155,155,155)' stroke='rgb(155,155,155)' stroke-width='0.6'/><path d='M396.0 419.0L368.0 439.9M368.0 439.9L405.0 459.6M405.0 459.6L433.0 438.7M433.0 438.7L396.0 419.0' stroke='#151515' stroke-width='1.7' stroke-linecap='round' fill='none'/><polygon points='433.0,438.7 405.0,459.6 404.0,468.8 432.0,447.9' fill='rgb(74,74,74)' stroke='rgb(74,74,74)' stroke-width='0.6'/><path d='M433.0 438.7L405.0 459.6M405.0 459.6L404.0 468.8M404.0 468.8L432.0 447.9' stroke='#151515' stroke-width='1.7' stroke-linecap='round' fill='none'/><polygon points='403.7,317.3 396.8,322.5 406.0,327.4 413.0,322.2' fill='rgb(155,155,155)' stroke='rgb(155,155,155)' stroke-width='0.6'/><polygon points='446.0,378.6 439.0,383.8 438.0,393.0 445.0,387.7' fill='rgb(74,74,74)' stroke='rgb(74,74,74)' stroke-width='0.6'/><polygon points='364.8,380.0 363.8,389.2 373.0,394.1 374.0,384.9' fill='rgb(155,155,155)' stroke='rgb(155,155,155)' stroke-width='0.6'/><polygon points='406.0,327.4 402.0,364.0 439.0,383.8 443.0,347.2' fill='rgb(155,155,155)' stroke='rgb(155,155,155)' stroke-width='0.6'/><path d='M406.0 327.4L402.0 364.0M402.0 364.0L439.0 383.8M439.0 383.8L443.0 347.2M443.0 347.2L406.0 327.4' stroke='#151515' stroke-width='1.7' stroke-linecap='round' fill='none'/><polygon points='413.0,322.2 406.0,327.4 443.0,347.2 450.0,342.0' fill='rgb(155,155,155)' stroke='rgb(155,155,155)' stroke-width='0.6'/><path d='M406.0 327.4L443.0 347.2M443.0 347.2L450.0 342.0M450.0 342.0L413.0 322.2' stroke='#151515' stroke-width='1.7' stroke-linecap='round' fill='none'/><polygon points='450.0,342.0 443.0,347.2 439.0,383.8 446.0,378.6' fill='rgb(74,74,74)' stroke='rgb(74,74,74)' stroke-width='0.6'/><path d='M450.0 342.0L443.0 347.2M443.0 347.2L439.0 383.8M446.0 378.6L450.0 342.0' stroke='#151515' stroke-width='1.7' stroke-linecap='round' fill='none'/><polygon points='368.8,343.4 364.8,380.0 374.0,384.9 378.0,348.3' fill='rgb(155,155,155)' stroke='rgb(155,155,155)' stroke-width='0.6'/><path d='M368.8 343.4L364.8 380.0M374.0 384.9L378.0 348.3M378.0 348.3L368.8 343.4' stroke='#151515' stroke-width='1.7' stroke-linecap='round' fill='none'/><polygon points='396.8,322.5 368.8,343.4 378.0,348.3 406.0,327.4' fill='rgb(155,155,155)' stroke='rgb(155,155,155)' stroke-width='0.6'/><path d='M396.8 322.5L368.8 343.4M368.8 343.4L378.0 348.3M378.0 348.3L406.0 327.4' stroke='#151515' stroke-width='1.7' stroke-linecap='round' fill='none'/><polygon points='406.0,327.4 378.0,348.3 374.0,384.9 402.0,364.0' fill='rgb(74,74,74)' stroke='rgb(74,74,74)' stroke-width='0.6'/><path d='M406.0 327.4L378.0 348.3M378.0 348.3L374.0 384.9M374.0 384.9L402.0 364.0M402.0 364.0L406.0 327.4' stroke='#151515' stroke-width='1.7' stroke-linecap='round' fill='none'/><polygon points='374.0,384.9 373.0,394.1 410.0,413.9 411.0,404.7' fill='rgb(155,155,155)' stroke='rgb(155,155,155)' stroke-width='0.6'/><path d='M373.0 394.1L410.0 413.9M410.0 413.9L411.0 404.7M411.0 404.7L374.0 384.9' stroke='#151515' stroke-width='1.7' stroke-linecap='round' fill='none'/><polygon points='402.0,364.0 374.0,384.9 411.0,404.7 439.0,383.8' fill='rgb(155,155,155)' stroke='rgb(155,155,155)' stroke-width='0.6'/><path d='M402.0 364.0L374.0 384.9M374.0 384.9L411.0 404.7M411.0 404.7L439.0 383.8M439.0 383.8L402.0 364.0' stroke='#151515' stroke-width='1.7' stroke-linecap='round' fill='none'/><polygon points='439.0,383.8 411.0,404.7 410.0,413.9 438.0,393.0' fill='rgb(74,74,74)' stroke='rgb(74,74,74)' stroke-width='0.6'/><path d='M439.0 383.8L411.0 404.7M411.0 404.7L410.0 413.9M410.0 413.9L438.0 393.0' stroke='#151515' stroke-width='1.7' stroke-linecap='round' fill='none'/><path d='M491.8 167.9L302.4 307.6M302.4 307.6L275.4 554.4' stroke='#f4f4f4' stroke-width='1.1' fill='none'/><polygon points='236.3,274.3 311.0,309.5 297.0,327.0 230.8,293.1' fill='#e4e4e4' stroke='#e4e4e4' stroke-width='3' stroke-linejoin='round'/><polygon points='481.0,407.0 513.0,419.0 514.0,429.0 504.0,437.0 481.0,426.0' fill='#e6e6e6' stroke='#e6e6e6' stroke-width='2' stroke-linejoin='round'/><path d='M511 429L548 451' stroke='#9a9a9a' stroke-width='1.3' fill='none'/><polygon points='557.9,442.3 570.0,448.7 569.5,460.8 559.3,468.1 547.7,461.8 548.2,451.6' fill='#e9e9e9'/><polygon points='560.8,455.0 570.0,448.7 569.5,460.8 559.3,468.1' fill='#cbcbcb'/><path d='M569.5 447.9L581.7 439.1' stroke='#f0e000' stroke-width='1.6'/></svg>
</body></html>
